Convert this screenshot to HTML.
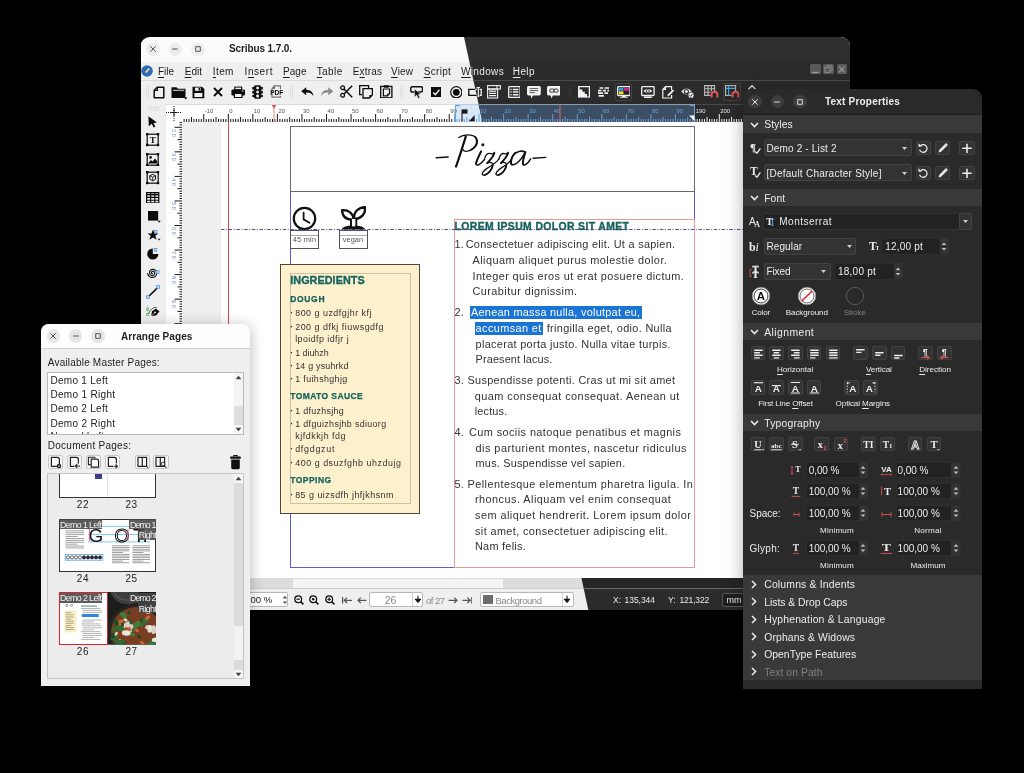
<!DOCTYPE html>
<html><head><meta charset="utf-8"><title>Scribus 1.7.0</title><style>
html,body{margin:0;padding:0;background:#000;}
body{width:1024px;height:773px;overflow:hidden;position:relative;font-family:"Liberation Sans",sans-serif;}
div,svg{position:absolute;}
.t{white-space:nowrap;}
u{text-decoration:underline;text-underline-offset:1.5px;text-decoration-thickness:0.9px;}
#mw{left:0;top:0;width:1024px;height:773px;clip-path:inset(37px 174px 163px 140.6px round 9px 9px 0 0);}
#L,#D,#C{left:0;top:0;width:1024px;height:773px;}
#mw,#tp,#ap{will-change:transform;}
#tp,#ap{left:0;top:0;width:1024px;height:773px;}
#D{clip-path:polygon(464px 37px,851px 37px,851px 612px,588.8px 612px);}
#wb{left:140.4px;top:37px;width:1px;height:575px;background:#5a5a5a;}
</style></head><body>
<div id="mw"><div id="L"><div style="left:141px;top:37px;width:709px;height:24.5px;background:#fbfbfb;"></div><div style="left:141px;top:61.5px;width:709px;height:18.5px;background:#efefef;"></div><div style="left:141px;top:80px;width:709px;height:24.5px;background:#efefef;"></div><div style="left:141px;top:79.6px;width:709px;height:1px;background:#dcdcdc;"></div><div style="left:141px;top:103.6px;width:709px;height:1px;background:#dcdcdc;"></div><div style="left:146.1px;top:42.5px;width:13.6px;height:13.6px;border-radius:50%;background:#ececec;"></div><svg style="left:147.9px;top:44.3px" width="10" height="10" viewBox="-5 -5 10 10"><path d="M-2.7 -2.7L2.7 2.7M2.7 -2.7L-2.7 2.7" fill="none" stroke="#555" stroke-width="1"/></svg><div style="left:168.5px;top:42.5px;width:13.6px;height:13.6px;border-radius:50%;background:#ececec;"></div><svg style="left:170.3px;top:44.3px" width="10" height="10" viewBox="-5 -5 10 10"><path d="M-2.8 0H2.8" fill="none" stroke="#555" stroke-width="1"/></svg><div style="left:191px;top:42.5px;width:13.6px;height:13.6px;border-radius:50%;background:#ececec;"></div><svg style="left:192.8px;top:44.3px" width="10" height="10" viewBox="-5 -5 10 10"><path d="M-2.3 -2.3H2.3V2.3H-2.3Z" fill="none" stroke="#555" stroke-width="1"/></svg><div class="t" style="left:229.00px;top:42.40px;line-height:14px;font-size:10px;color:#1c1c1c;font-weight:bold;letter-spacing:-0.106px;">Scribus 1.7.0.</div><div class="t" style="left:158.00px;top:64.50px;line-height:14px;font-size:10px;color:#1c1c1c;letter-spacing:-0.029px;"><u>F</u>ile</div><div class="t" style="left:184.70px;top:64.50px;line-height:14px;font-size:10px;color:#1c1c1c;letter-spacing:0.067px;"><u>E</u>dit</div><div class="t" style="left:212.80px;top:64.50px;line-height:14px;font-size:10px;color:#1c1c1c;letter-spacing:0.388px;"><u>I</u>tem</div><div class="t" style="left:244.50px;top:64.50px;line-height:14px;font-size:10px;color:#1c1c1c;letter-spacing:0.582px;">I<u>n</u>sert</div><div class="t" style="left:283.00px;top:64.50px;line-height:14px;font-size:10px;color:#1c1c1c;letter-spacing:0.036px;"><u>P</u>age</div><div class="t" style="left:316.70px;top:64.50px;line-height:14px;font-size:10px;color:#1c1c1c;letter-spacing:0.419px;"><u>T</u>able</div><div class="t" style="left:352.70px;top:64.50px;line-height:14px;font-size:10px;color:#1c1c1c;letter-spacing:0.193px;">E<u>x</u>tras</div><div class="t" style="left:391.00px;top:64.50px;line-height:14px;font-size:10px;color:#1c1c1c;letter-spacing:0.126px;"><u>V</u>iew</div><div class="t" style="left:423.70px;top:64.50px;line-height:14px;font-size:10px;color:#1c1c1c;letter-spacing:0.323px;"><u>S</u>cript</div><div class="t" style="left:461.00px;top:64.50px;line-height:14px;font-size:10px;color:#1c1c1c;letter-spacing:0.348px;"><u>W</u>indows</div><div class="t" style="left:512.80px;top:64.50px;line-height:14px;font-size:10px;color:#1c1c1c;letter-spacing:0.358px;"><u>H</u>elp</div><svg style="left:140.5px;top:64.6px;" width="12" height="12" viewBox="0 0 12 12"><circle cx="6" cy="6" r="5.8" fill="#2a6db5"/><path d="M3.4 8.8L4 7L7.6 3L8.8 4.2L5.2 8.2Z" fill="#f0d9a0"/><path d="M3.4 8.8L4 7L5.2 8.2Z" fill="#222"/></svg><div style="left:810px;top:63.5px;width:10.6px;height:10.6px;background:#5a5a5a;border-radius:1.5px;"></div><div style="left:823px;top:63.5px;width:10.6px;height:10.6px;background:#5a5a5a;border-radius:1.5px;"></div><div style="left:836.5px;top:63.5px;width:10.6px;height:10.6px;background:#5a5a5a;border-radius:1.5px;"></div><svg style="left:810px;top:63.5px;" width="38" height="11" viewBox="0 0 38 11"><path d="M2 8.6H8.6" stroke="#999" stroke-width="1.4"/><rect x="15" y="3.4" width="5" height="5" fill="none" stroke="#888" stroke-width="1"/><path d="M17 3V1.8H22V6.8H20.4" fill="none" stroke="#888" stroke-width="1"/><path d="M29 2.4L34.6 8.4M34.6 2.4L29 8.4" stroke="#999" stroke-width="1.2"/></svg><svg style="left:145.8px;top:85.6px;" width="4" height="13" viewBox="0 0 4 13"><rect x="0" y="0" width="1" height="1" fill="#cfcfcf"/><rect x="0" y="2.2" width="1" height="1" fill="#cfcfcf"/><rect x="0" y="4.4" width="1" height="1" fill="#cfcfcf"/><rect x="0" y="6.6" width="1" height="1" fill="#cfcfcf"/><rect x="0" y="8.8" width="1" height="1" fill="#cfcfcf"/><rect x="0" y="11" width="1" height="1" fill="#cfcfcf"/><rect x="2.2" y="0" width="1" height="1" fill="#cfcfcf"/><rect x="2.2" y="2.2" width="1" height="1" fill="#cfcfcf"/><rect x="2.2" y="4.4" width="1" height="1" fill="#cfcfcf"/><rect x="2.2" y="6.6" width="1" height="1" fill="#cfcfcf"/><rect x="2.2" y="8.8" width="1" height="1" fill="#cfcfcf"/><rect x="2.2" y="11" width="1" height="1" fill="#cfcfcf"/></svg><svg style="left:290px;top:85.6px;" width="4" height="13" viewBox="0 0 4 13"><rect x="0" y="0" width="1" height="1" fill="#cfcfcf"/><rect x="0" y="2.2" width="1" height="1" fill="#cfcfcf"/><rect x="0" y="4.4" width="1" height="1" fill="#cfcfcf"/><rect x="0" y="6.6" width="1" height="1" fill="#cfcfcf"/><rect x="0" y="8.8" width="1" height="1" fill="#cfcfcf"/><rect x="0" y="11" width="1" height="1" fill="#cfcfcf"/><rect x="2.2" y="0" width="1" height="1" fill="#cfcfcf"/><rect x="2.2" y="2.2" width="1" height="1" fill="#cfcfcf"/><rect x="2.2" y="4.4" width="1" height="1" fill="#cfcfcf"/><rect x="2.2" y="6.6" width="1" height="1" fill="#cfcfcf"/><rect x="2.2" y="8.8" width="1" height="1" fill="#cfcfcf"/><rect x="2.2" y="11" width="1" height="1" fill="#cfcfcf"/></svg><svg style="left:400px;top:85.6px;" width="4" height="13" viewBox="0 0 4 13"><rect x="0" y="0" width="1" height="1" fill="#cfcfcf"/><rect x="0" y="2.2" width="1" height="1" fill="#cfcfcf"/><rect x="0" y="4.4" width="1" height="1" fill="#cfcfcf"/><rect x="0" y="6.6" width="1" height="1" fill="#cfcfcf"/><rect x="0" y="8.8" width="1" height="1" fill="#cfcfcf"/><rect x="0" y="11" width="1" height="1" fill="#cfcfcf"/><rect x="2.2" y="0" width="1" height="1" fill="#cfcfcf"/><rect x="2.2" y="2.2" width="1" height="1" fill="#cfcfcf"/><rect x="2.2" y="4.4" width="1" height="1" fill="#cfcfcf"/><rect x="2.2" y="6.6" width="1" height="1" fill="#cfcfcf"/><rect x="2.2" y="8.8" width="1" height="1" fill="#cfcfcf"/><rect x="2.2" y="11" width="1" height="1" fill="#cfcfcf"/></svg><svg style="left:152.5px;top:85.8px;" width="12" height="13" viewBox="0 0 12 13"><path d="M4.2 1.2H10.8V11.8H1.2V4.2Z" fill="none" stroke="#0c0c0c" stroke-width="1.5" stroke-linejoin="round"/><path d="M4.4 1.2V4.4H1.2" fill="none" stroke="#0c0c0c" stroke-width="1.1"/></svg><svg style="left:170.8px;top:85.6px;" width="17" height="14" viewBox="0 0 17 14"><path d="M0.5 1.2H5.5L7 2.8H14.5V12H0.5Z" fill="#0c0c0c"/><path d="M2 4.3H13.2" stroke="#efefef" stroke-width="0.9"/><path d="M13 11.6H16.5L14.75 13.6Z" fill="#0c0c0c"/></svg><svg style="left:191.8px;top:85.5px;" width="13" height="13" viewBox="0 0 13 13"><path d="M0.5 0.8H10L12.3 3V12.2H0.5Z" fill="#0c0c0c"/><rect x="3" y="1.6" width="5.6" height="3.2" fill="#efefef"/><rect x="6.6" y="2" width="1.4" height="2.4" fill="#0c0c0c"/><rect x="2.4" y="7" width="8" height="4" fill="#efefef"/></svg><svg style="left:213.3px;top:87px;" width="10" height="10" viewBox="0 0 10 10"><path d="M1 1L9 9M9 1L1 9" stroke="#0c0c0c" stroke-width="1.9" fill="none"/></svg><svg style="left:230.5px;top:85.8px;" width="14.4" height="12.4" viewBox="0 0 14.4 12.4"><rect x="3.2" y="0.6" width="8" height="3.4" fill="#0c0c0c"/><rect x="4.4" y="1.6" width="5.6" height="1.6" fill="#efefef"/><rect x="0.4" y="3.4" width="13.6" height="6.2" rx="1.4" fill="#0c0c0c"/><rect x="10.8" y="4.6" width="1.6" height="1" fill="#efefef"/><rect x="2.8" y="7" width="8.8" height="5" fill="#0c0c0c"/><rect x="4" y="8" width="6.4" height="3" fill="#efefef"/></svg><svg style="left:251.6px;top:84.8px;" width="11.2" height="14" viewBox="0 0 11.2 14"><rect x="1.8" y="0.3" width="7.6" height="13.4" rx="2" fill="#0c0c0c"/><path d="M0.3 2H2V4.4H0.3ZM0.3 6H2V8.4H0.3ZM0.3 10H2V12H0.3ZM9.2 2H10.9V4.4H9.2ZM9.2 6H10.9V8.4H9.2ZM9.2 10H10.9V12H9.2Z" fill="#0c0c0c"/><circle cx="5.6" cy="3" r="1.5" fill="#efefef"/><circle cx="5.6" cy="7" r="1.5" fill="#efefef"/><circle cx="5.6" cy="11" r="1.5" fill="#efefef"/></svg><svg style="left:269.6px;top:85.2px;" width="13.6" height="13" viewBox="0 0 13.6 13"><path d="M4.5 0.8H10.5V4.2M10.5 11V12.2H2V3.4L4.5 0.8V3.4H2" fill="none" stroke="#777" stroke-width="1.2"/><text x="0.2" y="10.3" font-family="Liberation Sans" font-weight="bold" font-size="6.6" fill="#0c0c0c" textLength="13.2" lengthAdjust="spacingAndGlyphs">PDF</text></svg><svg style="left:301.4px;top:87.3px;" width="12.6" height="9.2" viewBox="0 0 12.6 9.2"><path d="M5.2 0.2L0.2 4.2L5.2 8.2V5.6C8.5 5.4 10.8 6.6 12.4 9C12.2 5.2 9.6 2.8 5.2 2.7Z" fill="#0c0c0c"/></svg><svg style="left:320.5px;top:87.3px;" width="12.6" height="9.2" viewBox="0 0 12.6 9.2"><path d="M7.3 0.2L12.3 4.2L7.3 8.2V5.6C4 5.4 1.7 6.6 0.1 9C0.3 5.2 2.9 2.8 7.3 2.7Z" fill="#8c8c8c"/></svg><svg style="left:340.3px;top:85px;" width="13" height="13" viewBox="0 0 13 13"><circle cx="2.6" cy="2.8" r="1.9" fill="none" stroke="#0c0c0c" stroke-width="1.3"/><circle cx="2.6" cy="10.2" r="1.9" fill="none" stroke="#0c0c0c" stroke-width="1.3"/><path d="M4 4L12.2 12.2M4 9L12.2 0.8" stroke="#0c0c0c" stroke-width="1.5" fill="none"/></svg><svg style="left:359px;top:84.8px;" width="14.2" height="13.8" viewBox="0 0 14.2 13.8"><path d="M3 9.6H0.7V0.7H9.6V3" fill="none" stroke="#0c0c0c" stroke-width="1.3"/><path d="M4 3.6H13.4V10L10.4 13H4Z" fill="#efefef" stroke="#0c0c0c" stroke-width="1.3"/><path d="M13.4 10H10.4V13Z" fill="#0c0c0c"/></svg><svg style="left:380px;top:84.8px;" width="12.6" height="13.6" viewBox="0 0 12.6 13.6"><rect x="0.7" y="1.4" width="11.2" height="11.4" fill="none" stroke="#0c0c0c" stroke-width="1.3"/><rect x="3.6" y="0.2" width="5.4" height="2.6" rx="1" fill="#0c0c0c"/><path d="M3.4 4H9.6V8.6L7.4 10.8H3.4Z" fill="#efefef" stroke="#0c0c0c" stroke-width="1.2"/><path d="M9.6 8.6H7.4V10.8Z" fill="#0c0c0c"/></svg><svg style="left:410px;top:85.8px;" width="13.4" height="12.8" viewBox="0 0 13.4 12.8"><rect x="0.8" y="0.8" width="11.6" height="5.2" rx="1.2" fill="none" stroke="#0c0c0c" stroke-width="1.4"/><path d="M4.6 3V11L6.7 9.1L8.3 12.4L9.9 11.6L8.3 8.5H11Z" fill="#0c0c0c" stroke="#efefef" stroke-width="0.5"/></svg><svg style="left:430.8px;top:86.8px;" width="10.4" height="10.4" viewBox="0 0 10.4 10.4"><rect x="0" y="0" width="10.4" height="10.4" fill="#0c0c0c"/><path d="M2.2 5.4L4.4 7.6L8.4 2.8" stroke="#efefef" stroke-width="1.4" fill="none"/></svg><svg style="left:449.6px;top:85.9px;" width="12.6" height="12.6" viewBox="0 0 12.6 12.6"><circle cx="6.3" cy="6.3" r="5.6" fill="none" stroke="#0c0c0c" stroke-width="1.2"/><circle cx="6.3" cy="6.3" r="3.4" fill="#0c0c0c"/></svg><svg style="left:468.2px;top:86.6px;" width="14" height="10.8" viewBox="0 0 14 10.8"><path d="M9 2.4H0.8V8.4H9M11.6 2.4H13.2V8.4H11.6" fill="none" stroke="#0c0c0c" stroke-width="1.3"/><path d="M8.6 0.4H12M8.6 10.4H12M10.3 0.4V10.4" stroke="#0c0c0c" stroke-width="1.2" fill="none"/></svg><svg style="left:487px;top:84.8px;" width="14" height="13.8" viewBox="0 0 14 13.8"><rect x="0.6" y="0.6" width="12.8" height="3.4" fill="none" stroke="#0c0c0c" stroke-width="1.1"/><path d="M10 0.6V4" stroke="#0c0c0c" stroke-width="1"/><rect x="0.6" y="4" width="10" height="9" fill="none" stroke="#0c0c0c" stroke-width="1.1"/><path d="M2 6.2H9.2M2 8.4H9.2M2 10.6H9.2" stroke="#0c0c0c" stroke-width="1.3"/></svg><svg style="left:507.6px;top:85.8px;" width="12.8" height="12.2" viewBox="0 0 12.8 12.2"><rect x="0.7" y="0.7" width="11.4" height="10.8" rx="0.8" fill="none" stroke="#0c0c0c" stroke-width="1.3"/><path d="M2.4 3.4H3.6M4.8 3.4H10.4M2.4 6.1H3.6M4.8 6.1H10.4M2.4 8.8H3.6M4.8 8.8H10.4" stroke="#0c0c0c" stroke-width="1.5"/></svg><svg style="left:526.9px;top:86px;" width="13.8" height="12.6" viewBox="0 0 13.8 12.6"><path d="M1.6 0H12.2Q13.8 0 13.8 1.6V7.8Q13.8 9.4 12.2 9.4H6L4.2 12.4L3.8 9.4H1.6Q0 9.4 0 7.8V1.6Q0 0 1.6 0Z" fill="#0c0c0c"/><path d="M2.6 2.6H11.2M2.6 4.6H11.2M2.6 6.6H8" stroke="#efefef" stroke-width="1" opacity="0.75"/></svg><svg style="left:546.7px;top:86px;" width="13.8" height="12.6" viewBox="0 0 13.8 12.6"><path d="M1.6 0H12.2Q13.8 0 13.8 1.6V7.8Q13.8 9.4 12.2 9.4H6L4.2 12.4L3.8 9.4H1.6Q0 9.4 0 7.8V1.6Q0 0 1.6 0Z" fill="#0c0c0c"/><rect x="2.6" y="3" width="4.6" height="3.2" rx="1.6" fill="none" stroke="#efefef" stroke-width="1"/><rect x="6.6" y="3" width="4.6" height="3.2" rx="1.6" fill="none" stroke="#efefef" stroke-width="1"/></svg><svg style="left:568.9px;top:85.6px;" width="3.6" height="12.4" viewBox="0 0 3.6 12.4"><rect x="0" y="0" width="1" height="1" fill="#c8c8c8"/><rect x="2.4" y="0" width="1" height="1" fill="#c8c8c8"/><rect x="0" y="2.2" width="1" height="1" fill="#c8c8c8"/><rect x="2.4" y="2.2" width="1" height="1" fill="#c8c8c8"/><rect x="0" y="4.4" width="1" height="1" fill="#c8c8c8"/><rect x="2.4" y="4.4" width="1" height="1" fill="#c8c8c8"/><rect x="0" y="6.6" width="1" height="1" fill="#c8c8c8"/><rect x="2.4" y="6.6" width="1" height="1" fill="#c8c8c8"/><rect x="0" y="8.8" width="1" height="1" fill="#c8c8c8"/><rect x="2.4" y="8.8" width="1" height="1" fill="#c8c8c8"/><rect x="0" y="11" width="1" height="1" fill="#c8c8c8"/><rect x="2.4" y="11" width="1" height="1" fill="#c8c8c8"/></svg><svg style="left:578px;top:86px;" width="12" height="11.6" viewBox="0 0 12 11.6"><rect x="0" y="0" width="12" height="11.6" fill="#0c0c0c"/><path d="M1.6 1.2H10.8V10.4H9V8H6.8V5.8H4.4V3.6H1.6Z" fill="#efefef"/></svg><svg style="left:597.8px;top:87px;" width="11" height="10" viewBox="0 0 11 10"><path d="M1.6 1H5.2M6.6 1H11M0 3.6H3.4M4.8 3.6H8M9.4 3.6H11M0 6.2H5M6.4 6.2H10M0.6 8.8H6" stroke="#0c0c0c" stroke-width="1.7" fill="none"/></svg><svg style="left:616.5px;top:85.6px;" width="13.8" height="12.6" viewBox="0 0 13.8 12.6"><rect x="0.7" y="0.7" width="12.4" height="8.8" rx="0.8" fill="#efefef" stroke="#0c0c0c" stroke-width="1.3"/><rect x="2" y="2" width="4.4" height="2.8" fill="#1f9fe0"/><rect x="7.2" y="2" width="4.6" height="2.8" fill="#e6189a"/><rect x="2" y="5.4" width="4.4" height="2.8" fill="#f2e21a"/><rect x="7.2" y="5.4" width="4.6" height="2.8" fill="#222"/><path d="M5 9.8H8.8V11H5ZM3 11.2H10.8V12.4H3Z" fill="#0c0c0c"/></svg><svg style="left:641px;top:85.8px;" width="13.8" height="12.6" viewBox="0 0 13.8 12.6"><rect x="0.7" y="0.7" width="12.4" height="8.8" rx="0.8" fill="none" stroke="#0c0c0c" stroke-width="1.3"/><path d="M2.4 5.1Q6.9 0.8 11.4 5.1Q6.9 9.4 2.4 5.1Z" fill="#0c0c0c"/><circle cx="6.9" cy="5.1" r="1.9" fill="#efefef"/><circle cx="6.9" cy="5.1" r="1" fill="#0c0c0c"/><path d="M3 10.6H10.8V12H3Z" fill="#0c0c0c"/></svg><svg style="left:661.8px;top:85.8px;" width="12.8" height="12.8" viewBox="0 0 12.8 12.8"><path d="M3.4 0.7H9.6V4.4M9.6 9V12H0.8V3.4L3.4 0.7V3.4H0.8" fill="none" stroke="#0c0c0c" stroke-width="1.2"/><path d="M5 10.6L5.6 8.4L10.8 3.2L12.4 4.8L7.2 10Z" fill="#0c0c0c" stroke="#efefef" stroke-width="0.5"/></svg><svg style="left:681px;top:86.8px;" width="13.4" height="11.6" viewBox="0 0 13.4 11.6"><path d="M0.2 4.6Q5.4 -1.4 10.8 4.6Q5.4 10.4 0.2 4.6Z" fill="#0c0c0c"/><circle cx="5.4" cy="4.6" r="2.6" fill="#efefef"/><circle cx="5.4" cy="4.6" r="1.5" fill="#0c0c0c"/><circle cx="10" cy="8.2" r="3.1" fill="#0c0c0c" stroke="#efefef" stroke-width="0.8"/><path d="M8.4 8.2L9.6 9.4L11.6 7" stroke="#efefef" stroke-width="1" fill="none"/></svg><svg style="left:704.4px;top:85.4px;" width="14.6" height="13.2" viewBox="0 0 14.6 13.2"><path d="M0.6 0.6H10.6V10.4H0.6ZM4 0.6V10.4M7.4 0.6V10.4M0.6 3.8H10.6M0.6 7.2H10.6" fill="none" stroke="#666" stroke-width="1.1"/><rect x="6.4" y="6.4" width="8" height="6.4" fill="#efefef"/><path d="M7.6 12.6V9.6A2.9 2.9 0 0 1 13.4 9.6V12.6" fill="none" stroke="#e8564e" stroke-width="1.9"/></svg><svg style="left:724.6px;top:85.4px;" width="14.6" height="13.2" viewBox="0 0 14.6 13.2"><rect x="0.6" y="0.6" width="10" height="9.8" fill="none" stroke="#666" stroke-width="1.1"/><path d="M3.6 0.6V10.4M0.6 3.4H10.6" stroke="#3daee9" stroke-width="1.1"/><rect x="6.4" y="6.4" width="8" height="6.4" fill="#efefef"/><path d="M7.6 12.6V9.6A2.9 2.9 0 0 1 13.4 9.6V12.6" fill="none" stroke="#e8564e" stroke-width="1.9"/></svg><div style="left:614.6px;top:83.2px;width:17.6px;height:17.6px;border:1px solid #bbb;box-sizing:border-box;border-radius:2px;"></div><div style="left:722.6px;top:83.2px;width:18.6px;height:17.6px;border:1px solid #bbb;box-sizing:border-box;border-radius:2px;"></div><svg style="left:747px;top:83.6px;" width="10" height="7" viewBox="0 0 10 7"><path d="M1.4 5.4L5 1.6L8.6 5.4" fill="none" stroke="#0c0c0c" stroke-width="1.3"/></svg><div style="left:141px;top:104px;width:24.5px;height:480px;background:#efefef;"></div><svg style="left:148.5px;top:106.6px;" width="11" height="4" viewBox="0 0 11 4"><rect x="0" y="0" width="1" height="1" fill="#c9c9c9"/><rect x="0" y="2.2" width="1" height="1" fill="#c9c9c9"/><rect x="2.2" y="0" width="1" height="1" fill="#c9c9c9"/><rect x="2.2" y="2.2" width="1" height="1" fill="#c9c9c9"/><rect x="4.4" y="0" width="1" height="1" fill="#c9c9c9"/><rect x="4.4" y="2.2" width="1" height="1" fill="#c9c9c9"/><rect x="6.6" y="0" width="1" height="1" fill="#c9c9c9"/><rect x="6.6" y="2.2" width="1" height="1" fill="#c9c9c9"/><rect x="8.8" y="0" width="1" height="1" fill="#c9c9c9"/><rect x="8.8" y="2.2" width="1" height="1" fill="#c9c9c9"/></svg><svg style="left:148.4px;top:115.6px;" width="10" height="12" viewBox="0 0 10 12"><path d="M0.4 0.2L9 6.6L5.6 7L7.4 10.8L5.6 11.6L3.8 7.8L0.8 10.2Z" fill="#0c0c0c"/></svg><svg style="left:146.4px;top:133.4px;" width="13.4" height="13.4" viewBox="0 0 13.4 13.4"><rect x="1.2" y="1.2" width="11" height="11" fill="none" stroke="#0c0c0c" stroke-width="1.2"/><rect x="0" y="0" width="2.4" height="2.4" fill="#0c0c0c"/><rect x="0" y="10.8" width="2.4" height="2.4" fill="#0c0c0c"/><rect x="10.8" y="0" width="2.4" height="2.4" fill="#0c0c0c"/><rect x="10.8" y="10.8" width="2.4" height="2.4" fill="#0c0c0c"/><text x="6.7" y="10" text-anchor="middle" font-family="Liberation Serif" font-weight="bold" font-size="9" fill="#0c0c0c">T</text></svg><svg style="left:146.4px;top:152.6px;" width="13.4" height="13.4" viewBox="0 0 13.4 13.4"><rect x="1.2" y="1.2" width="11" height="11" fill="none" stroke="#0c0c0c" stroke-width="1.2"/><rect x="0" y="0" width="2.4" height="2.4" fill="#0c0c0c"/><rect x="0" y="10.8" width="2.4" height="2.4" fill="#0c0c0c"/><rect x="10.8" y="0" width="2.4" height="2.4" fill="#0c0c0c"/><rect x="10.8" y="10.8" width="2.4" height="2.4" fill="#0c0c0c"/><circle cx="4.6" cy="4.4" r="1.3" fill="#0c0c0c"/><path d="M2 10.6L5 7L6.6 8.6L9 5.6L11.4 8.4V10.6Z" fill="#0c0c0c"/></svg><svg style="left:146.4px;top:171.4px;" width="13.4" height="13.4" viewBox="0 0 13.4 13.4"><rect x="1.2" y="1.2" width="11" height="11" fill="none" stroke="#0c0c0c" stroke-width="1.2"/><rect x="0" y="0" width="2.4" height="2.4" fill="#0c0c0c"/><rect x="0" y="10.8" width="2.4" height="2.4" fill="#0c0c0c"/><rect x="10.8" y="0" width="2.4" height="2.4" fill="#0c0c0c"/><rect x="10.8" y="10.8" width="2.4" height="2.4" fill="#0c0c0c"/><path d="M6.7 3.4L9.6 4.8V8.2L6.7 9.8L3.8 8.2V4.8Z" fill="none" stroke="#0c0c0c" stroke-width="1"/><path d="M3.8 4.8L6.7 6.2L9.6 4.8M6.7 6.2V9.8" fill="none" stroke="#0c0c0c" stroke-width="0.8"/></svg><svg style="left:146.4px;top:191.8px;" width="13.4" height="11.6" viewBox="0 0 13.4 11.6"><rect x="0.6" y="0.6" width="12.2" height="10.4" fill="none" stroke="#0c0c0c" stroke-width="1.2"/><path d="M0.6 2.6H12.8" stroke="#0c0c0c" stroke-width="1.6"/><path d="M0.6 5.4H12.8M0.6 8.2H12.8M4.7 0.6V11M8.8 0.6V11" stroke="#0c0c0c" stroke-width="1.1"/></svg><svg style="left:148.4px;top:211.4px;" width="13" height="12.4" viewBox="0 0 13 12.4"><rect x="0" y="0" width="10.2" height="9.6" fill="#0c0c0c"/><path d="M9.6 9.8H12.8L11.2 11.8Z" fill="#0c0c0c"/></svg><svg style="left:147.2px;top:229.4px;" width="14" height="12.4" viewBox="0 0 14 12.4"><path d="M6 0.6L7.5 4.4H11.6L8.3 6.8L9.6 10.8L6 8.4L2.4 10.8L3.7 6.8L0.4 4.4H4.5Z" fill="#0c0c0c"/><rect x="7.4" y="1.4" width="2.6" height="2.6" fill="#bfe0f7" stroke="#4a90d9" stroke-width="0.7"/><path d="M10.6 9.8H13.6L12.1 11.6Z" fill="#0c0c0c"/></svg><svg style="left:147.4px;top:248.2px;" width="12.4" height="12" viewBox="0 0 12.4 12"><path d="M5.8 6L11.4 6A5.6 5.6 0 1 1 5.8 0.4Z" fill="#0c0c0c"/><rect x="7.2" y="0.6" width="2.6" height="2.6" fill="#bfe0f7" stroke="#4a90d9" stroke-width="0.7"/></svg><svg style="left:147.4px;top:267px;" width="12.6" height="11.6" viewBox="0 0 12.6 11.6"><path d="M5.78 6.37L5.72 6.43L5.65 6.49L5.56 6.53L5.46 6.57L5.34 6.58L5.23 6.58L5.10 6.55L4.98 6.50L4.86 6.43L4.75 6.34L4.66 6.23L4.57 6.10L4.51 5.95L4.47 5.78L4.45 5.61L4.47 5.43L4.51 5.25L4.58 5.07L4.68 4.89L4.81 4.73L4.97 4.59L5.16 4.47L5.36 4.37L5.59 4.31L5.82 4.28L6.07 4.29L6.32 4.33L6.56 4.41L6.80 4.53L7.02 4.69L7.22 4.89L7.39 5.12L7.53 5.37L7.63 5.65L7.69 5.95L7.70 6.27L7.67 6.58L7.59 6.90L7.46 7.20L7.29 7.49L7.07 7.75L6.80 7.99L6.50 8.18L6.17 8.33L5.82 8.44L5.44 8.49L5.06 8.48L4.67 8.42L4.30 8.30L3.93 8.12L3.60 7.88L3.29 7.60L3.03 7.26L2.82 6.89L2.66 6.49L2.56 6.05L2.52 5.60L2.55 5.15L2.65 4.70L2.82 4.26L3.05 3.84L3.35 3.46L3.70 3.12L4.11 2.84L4.55 2.61L5.04 2.45L5.55 2.35L6.07 2.34L6.59 2.40L7.11 2.54L7.61 2.76L8.07 3.05L8.49 3.41L8.86 3.83L9.17 4.31L9.41 4.84L9.57 5.40L9.64 5.98L9.64 6.57L9.54 7.17L9.35 7.75L9.08 8.30L8.73 8.81L8.30 9.27L7.80 9.67L7.25 9.99L6.65 10.23L6.01 10.38L5.35 10.44L4.69 10.40L4.03 10.26L3.39 10.03L2.78 9.70L2.23 9.28L1.74 8.78L1.32 8.21L0.99 7.58L0.75 6.90L0.61 6.18" fill="none" stroke="#0c0c0c" stroke-width="1.15"/><rect x="9.2" y="3.6" width="2.8" height="2.8" fill="#bfe0f7" stroke="#4a90d9" stroke-width="0.7"/></svg><svg style="left:146px;top:284.8px;" width="14.4" height="14.4" viewBox="0 0 14.4 14.4"><path d="M2.4 11.8L11.8 2.4" stroke="#0c0c0c" stroke-width="1.5"/><rect x="0.5" y="10.8" width="2.8" height="2.8" fill="#bfe0f7" stroke="#4a90d9" stroke-width="0.7"/><rect x="10.8" y="0.6" width="2.8" height="2.8" fill="#bfe0f7" stroke="#4a90d9" stroke-width="0.7"/></svg><svg style="left:145.8px;top:304.4px;" width="14.6" height="13" viewBox="0 0 14.6 13"><path d="M1.8 1.4V10" stroke="#5cb85c" stroke-width="0.8" stroke-dasharray="1 1"/><rect x="0.6" y="4.2" width="2.2" height="2.2" fill="none" stroke="#5cb85c" stroke-width="0.7"/><rect x="0.6" y="9.4" width="2.2" height="2.2" fill="none" stroke="#5cb85c" stroke-width="0.7"/><path d="M2.6 9.6Q6 2.6 10.6 3.4" fill="none" stroke="#0c0c0c" stroke-width="0.7"/><path d="M5.2 11.4L6 7.2L10 4.4L13.4 7.6L10.4 11.2L6.4 12.2Z" fill="#0c0c0c"/><path d="M5.6 12L8.6 8.8" stroke="#efefef" stroke-width="0.7"/><circle cx="9" cy="8.4" r="0.9" fill="#efefef"/></svg><div style="left:165.5px;top:104.5px;width:700px;height:17px;background:#ffffff;"></div><div style="left:454.5px;top:104.5px;width:240.7px;height:17px;background:#d9e8f8;"></div><div style="left:454.5px;top:104.2px;width:240.7px;height:1px;background:#b9cde4;"></div><svg style="left:0;top:104.5px" width="760" height="17" viewBox="0 0 760 17"><rect x="183.61" y="14" width="1" height="3" fill="#1a1a1a"/><rect x="186.06" y="14" width="1" height="3" fill="#1a1a1a"/><rect x="188.52" y="14" width="1" height="3" fill="#1a1a1a"/><rect x="190.98" y="12" width="1" height="5" fill="#1a1a1a"/><rect x="193.43" y="14" width="1" height="3" fill="#1a1a1a"/><rect x="195.89" y="14" width="1" height="3" fill="#1a1a1a"/><rect x="198.34" y="14" width="1" height="3" fill="#1a1a1a"/><rect x="200.80" y="14" width="1" height="3" fill="#1a1a1a"/><rect x="203.25" y="9" width="1" height="8" fill="#1a1a1a"/><rect x="205.71" y="14" width="1" height="3" fill="#1a1a1a"/><rect x="208.16" y="14" width="1" height="3" fill="#1a1a1a"/><rect x="210.62" y="14" width="1" height="3" fill="#1a1a1a"/><rect x="213.07" y="14" width="1" height="3" fill="#1a1a1a"/><rect x="215.53" y="12" width="1" height="5" fill="#1a1a1a"/><rect x="217.98" y="14" width="1" height="3" fill="#1a1a1a"/><rect x="220.44" y="14" width="1" height="3" fill="#1a1a1a"/><rect x="222.89" y="14" width="1" height="3" fill="#1a1a1a"/><rect x="225.34" y="14" width="1" height="3" fill="#1a1a1a"/><rect x="227.80" y="9" width="1" height="8" fill="#1a1a1a"/><rect x="230.26" y="14" width="1" height="3" fill="#1a1a1a"/><rect x="232.71" y="14" width="1" height="3" fill="#1a1a1a"/><rect x="235.17" y="14" width="1" height="3" fill="#1a1a1a"/><rect x="237.62" y="14" width="1" height="3" fill="#1a1a1a"/><rect x="240.08" y="12" width="1" height="5" fill="#1a1a1a"/><rect x="242.53" y="14" width="1" height="3" fill="#1a1a1a"/><rect x="244.99" y="14" width="1" height="3" fill="#1a1a1a"/><rect x="247.44" y="14" width="1" height="3" fill="#1a1a1a"/><rect x="249.90" y="14" width="1" height="3" fill="#1a1a1a"/><rect x="252.35" y="9" width="1" height="8" fill="#1a1a1a"/><rect x="254.81" y="14" width="1" height="3" fill="#1a1a1a"/><rect x="257.26" y="14" width="1" height="3" fill="#1a1a1a"/><rect x="259.72" y="14" width="1" height="3" fill="#1a1a1a"/><rect x="262.17" y="14" width="1" height="3" fill="#1a1a1a"/><rect x="264.62" y="12" width="1" height="5" fill="#1a1a1a"/><rect x="267.08" y="14" width="1" height="3" fill="#1a1a1a"/><rect x="269.54" y="14" width="1" height="3" fill="#1a1a1a"/><rect x="271.99" y="14" width="1" height="3" fill="#1a1a1a"/><rect x="274.44" y="14" width="1" height="3" fill="#1a1a1a"/><rect x="276.90" y="9" width="1" height="8" fill="#1a1a1a"/><rect x="279.36" y="14" width="1" height="3" fill="#1a1a1a"/><rect x="281.81" y="14" width="1" height="3" fill="#1a1a1a"/><rect x="284.26" y="14" width="1" height="3" fill="#1a1a1a"/><rect x="286.72" y="14" width="1" height="3" fill="#1a1a1a"/><rect x="289.18" y="12" width="1" height="5" fill="#1a1a1a"/><rect x="291.63" y="14" width="1" height="3" fill="#1a1a1a"/><rect x="294.09" y="14" width="1" height="3" fill="#1a1a1a"/><rect x="296.54" y="14" width="1" height="3" fill="#1a1a1a"/><rect x="299.00" y="14" width="1" height="3" fill="#1a1a1a"/><rect x="301.45" y="9" width="1" height="8" fill="#1a1a1a"/><rect x="303.91" y="14" width="1" height="3" fill="#1a1a1a"/><rect x="306.36" y="14" width="1" height="3" fill="#1a1a1a"/><rect x="308.81" y="14" width="1" height="3" fill="#1a1a1a"/><rect x="311.27" y="14" width="1" height="3" fill="#1a1a1a"/><rect x="313.73" y="12" width="1" height="5" fill="#1a1a1a"/><rect x="316.18" y="14" width="1" height="3" fill="#1a1a1a"/><rect x="318.63" y="14" width="1" height="3" fill="#1a1a1a"/><rect x="321.09" y="14" width="1" height="3" fill="#1a1a1a"/><rect x="323.55" y="14" width="1" height="3" fill="#1a1a1a"/><rect x="326.00" y="9" width="1" height="8" fill="#1a1a1a"/><rect x="328.46" y="14" width="1" height="3" fill="#1a1a1a"/><rect x="330.91" y="14" width="1" height="3" fill="#1a1a1a"/><rect x="333.37" y="14" width="1" height="3" fill="#1a1a1a"/><rect x="335.82" y="14" width="1" height="3" fill="#1a1a1a"/><rect x="338.28" y="12" width="1" height="5" fill="#1a1a1a"/><rect x="340.73" y="14" width="1" height="3" fill="#1a1a1a"/><rect x="343.19" y="14" width="1" height="3" fill="#1a1a1a"/><rect x="345.64" y="14" width="1" height="3" fill="#1a1a1a"/><rect x="348.10" y="14" width="1" height="3" fill="#1a1a1a"/><rect x="350.55" y="9" width="1" height="8" fill="#1a1a1a"/><rect x="353.00" y="14" width="1" height="3" fill="#1a1a1a"/><rect x="355.46" y="14" width="1" height="3" fill="#1a1a1a"/><rect x="357.92" y="14" width="1" height="3" fill="#1a1a1a"/><rect x="360.37" y="14" width="1" height="3" fill="#1a1a1a"/><rect x="362.83" y="12" width="1" height="5" fill="#1a1a1a"/><rect x="365.28" y="14" width="1" height="3" fill="#1a1a1a"/><rect x="367.74" y="14" width="1" height="3" fill="#1a1a1a"/><rect x="370.19" y="14" width="1" height="3" fill="#1a1a1a"/><rect x="372.64" y="14" width="1" height="3" fill="#1a1a1a"/><rect x="375.10" y="9" width="1" height="8" fill="#1a1a1a"/><rect x="377.56" y="14" width="1" height="3" fill="#1a1a1a"/><rect x="380.01" y="14" width="1" height="3" fill="#1a1a1a"/><rect x="382.47" y="14" width="1" height="3" fill="#1a1a1a"/><rect x="384.92" y="14" width="1" height="3" fill="#1a1a1a"/><rect x="387.38" y="12" width="1" height="5" fill="#1a1a1a"/><rect x="389.83" y="14" width="1" height="3" fill="#1a1a1a"/><rect x="392.29" y="14" width="1" height="3" fill="#1a1a1a"/><rect x="394.74" y="14" width="1" height="3" fill="#1a1a1a"/><rect x="397.20" y="14" width="1" height="3" fill="#1a1a1a"/><rect x="399.65" y="9" width="1" height="8" fill="#1a1a1a"/><rect x="402.11" y="14" width="1" height="3" fill="#1a1a1a"/><rect x="404.56" y="14" width="1" height="3" fill="#1a1a1a"/><rect x="407.01" y="14" width="1" height="3" fill="#1a1a1a"/><rect x="409.47" y="14" width="1" height="3" fill="#1a1a1a"/><rect x="411.93" y="12" width="1" height="5" fill="#1a1a1a"/><rect x="414.38" y="14" width="1" height="3" fill="#1a1a1a"/><rect x="416.84" y="14" width="1" height="3" fill="#1a1a1a"/><rect x="419.29" y="14" width="1" height="3" fill="#1a1a1a"/><rect x="421.75" y="14" width="1" height="3" fill="#1a1a1a"/><rect x="424.20" y="9" width="1" height="8" fill="#1a1a1a"/><rect x="426.66" y="14" width="1" height="3" fill="#1a1a1a"/><rect x="429.11" y="14" width="1" height="3" fill="#1a1a1a"/><rect x="431.57" y="14" width="1" height="3" fill="#1a1a1a"/><rect x="434.02" y="14" width="1" height="3" fill="#1a1a1a"/><rect x="436.48" y="12" width="1" height="5" fill="#1a1a1a"/><rect x="438.93" y="14" width="1" height="3" fill="#1a1a1a"/><rect x="441.38" y="14" width="1" height="3" fill="#1a1a1a"/><rect x="443.84" y="14" width="1" height="3" fill="#1a1a1a"/><rect x="446.30" y="14" width="1" height="3" fill="#1a1a1a"/><rect x="448.75" y="9" width="1" height="8" fill="#1a1a1a"/><rect x="451.21" y="14" width="1" height="3" fill="#1a1a1a"/><rect x="454.00" y="9" width="1" height="8" fill="#6aa3da"/><rect x="456.45" y="14" width="1" height="3" fill="#6aa3da"/><rect x="458.91" y="14" width="1" height="3" fill="#6aa3da"/><rect x="461.37" y="14" width="1" height="3" fill="#6aa3da"/><rect x="463.82" y="14" width="1" height="3" fill="#6aa3da"/><rect x="466.27" y="12" width="1" height="5" fill="#6aa3da"/><rect x="468.73" y="14" width="1" height="3" fill="#6aa3da"/><rect x="471.19" y="14" width="1" height="3" fill="#6aa3da"/><rect x="473.64" y="14" width="1" height="3" fill="#6aa3da"/><rect x="476.10" y="14" width="1" height="3" fill="#6aa3da"/><rect x="478.55" y="9" width="1" height="8" fill="#6aa3da"/><rect x="481.00" y="14" width="1" height="3" fill="#6aa3da"/><rect x="483.46" y="14" width="1" height="3" fill="#6aa3da"/><rect x="485.92" y="14" width="1" height="3" fill="#6aa3da"/><rect x="488.37" y="14" width="1" height="3" fill="#6aa3da"/><rect x="490.82" y="12" width="1" height="5" fill="#6aa3da"/><rect x="493.28" y="14" width="1" height="3" fill="#6aa3da"/><rect x="495.74" y="14" width="1" height="3" fill="#6aa3da"/><rect x="498.19" y="14" width="1" height="3" fill="#6aa3da"/><rect x="500.64" y="14" width="1" height="3" fill="#6aa3da"/><rect x="503.10" y="9" width="1" height="8" fill="#6aa3da"/><rect x="505.56" y="14" width="1" height="3" fill="#6aa3da"/><rect x="508.01" y="14" width="1" height="3" fill="#6aa3da"/><rect x="510.47" y="14" width="1" height="3" fill="#6aa3da"/><rect x="512.92" y="14" width="1" height="3" fill="#6aa3da"/><rect x="515.38" y="12" width="1" height="5" fill="#6aa3da"/><rect x="517.83" y="14" width="1" height="3" fill="#6aa3da"/><rect x="520.28" y="14" width="1" height="3" fill="#6aa3da"/><rect x="522.74" y="14" width="1" height="3" fill="#6aa3da"/><rect x="525.20" y="14" width="1" height="3" fill="#6aa3da"/><rect x="527.65" y="9" width="1" height="8" fill="#6aa3da"/><rect x="530.11" y="14" width="1" height="3" fill="#6aa3da"/><rect x="532.56" y="14" width="1" height="3" fill="#6aa3da"/><rect x="535.01" y="14" width="1" height="3" fill="#6aa3da"/><rect x="537.47" y="14" width="1" height="3" fill="#6aa3da"/><rect x="539.92" y="12" width="1" height="5" fill="#6aa3da"/><rect x="542.38" y="14" width="1" height="3" fill="#6aa3da"/><rect x="544.84" y="14" width="1" height="3" fill="#6aa3da"/><rect x="547.29" y="14" width="1" height="3" fill="#6aa3da"/><rect x="549.75" y="14" width="1" height="3" fill="#6aa3da"/><rect x="552.20" y="9" width="1" height="8" fill="#6aa3da"/><rect x="554.65" y="14" width="1" height="3" fill="#6aa3da"/><rect x="557.11" y="14" width="1" height="3" fill="#6aa3da"/><rect x="559.57" y="14" width="1" height="3" fill="#6aa3da"/><rect x="562.02" y="14" width="1" height="3" fill="#6aa3da"/><rect x="564.48" y="12" width="1" height="5" fill="#6aa3da"/><rect x="566.93" y="14" width="1" height="3" fill="#6aa3da"/><rect x="569.38" y="14" width="1" height="3" fill="#6aa3da"/><rect x="571.84" y="14" width="1" height="3" fill="#6aa3da"/><rect x="574.29" y="14" width="1" height="3" fill="#6aa3da"/><rect x="576.75" y="9" width="1" height="8" fill="#6aa3da"/><rect x="579.21" y="14" width="1" height="3" fill="#6aa3da"/><rect x="581.66" y="14" width="1" height="3" fill="#6aa3da"/><rect x="584.12" y="14" width="1" height="3" fill="#6aa3da"/><rect x="586.57" y="14" width="1" height="3" fill="#6aa3da"/><rect x="589.02" y="12" width="1" height="5" fill="#6aa3da"/><rect x="591.48" y="14" width="1" height="3" fill="#6aa3da"/><rect x="593.93" y="14" width="1" height="3" fill="#6aa3da"/><rect x="596.39" y="14" width="1" height="3" fill="#6aa3da"/><rect x="598.85" y="14" width="1" height="3" fill="#6aa3da"/><rect x="601.30" y="9" width="1" height="8" fill="#6aa3da"/><rect x="603.75" y="14" width="1" height="3" fill="#6aa3da"/><rect x="606.21" y="14" width="1" height="3" fill="#6aa3da"/><rect x="608.66" y="14" width="1" height="3" fill="#6aa3da"/><rect x="611.12" y="14" width="1" height="3" fill="#6aa3da"/><rect x="613.58" y="12" width="1" height="5" fill="#6aa3da"/><rect x="616.03" y="14" width="1" height="3" fill="#6aa3da"/><rect x="618.49" y="14" width="1" height="3" fill="#6aa3da"/><rect x="620.94" y="14" width="1" height="3" fill="#6aa3da"/><rect x="623.39" y="14" width="1" height="3" fill="#6aa3da"/><rect x="625.85" y="9" width="1" height="8" fill="#6aa3da"/><rect x="628.31" y="14" width="1" height="3" fill="#6aa3da"/><rect x="630.76" y="14" width="1" height="3" fill="#6aa3da"/><rect x="633.22" y="14" width="1" height="3" fill="#6aa3da"/><rect x="635.67" y="14" width="1" height="3" fill="#6aa3da"/><rect x="638.12" y="12" width="1" height="5" fill="#6aa3da"/><rect x="640.58" y="14" width="1" height="3" fill="#6aa3da"/><rect x="643.03" y="14" width="1" height="3" fill="#6aa3da"/><rect x="645.49" y="14" width="1" height="3" fill="#6aa3da"/><rect x="647.94" y="14" width="1" height="3" fill="#6aa3da"/><rect x="650.40" y="9" width="1" height="8" fill="#6aa3da"/><rect x="652.86" y="14" width="1" height="3" fill="#6aa3da"/><rect x="655.31" y="14" width="1" height="3" fill="#6aa3da"/><rect x="657.76" y="14" width="1" height="3" fill="#6aa3da"/><rect x="660.22" y="14" width="1" height="3" fill="#6aa3da"/><rect x="662.67" y="12" width="1" height="5" fill="#6aa3da"/><rect x="665.13" y="14" width="1" height="3" fill="#6aa3da"/><rect x="667.59" y="14" width="1" height="3" fill="#6aa3da"/><rect x="670.04" y="14" width="1" height="3" fill="#6aa3da"/><rect x="672.50" y="14" width="1" height="3" fill="#6aa3da"/><rect x="674.95" y="9" width="1" height="8" fill="#6aa3da"/><rect x="677.40" y="14" width="1" height="3" fill="#6aa3da"/><rect x="679.86" y="14" width="1" height="3" fill="#6aa3da"/><rect x="682.32" y="14" width="1" height="3" fill="#6aa3da"/><rect x="684.77" y="14" width="1" height="3" fill="#6aa3da"/><rect x="687.23" y="12" width="1" height="5" fill="#6aa3da"/><rect x="689.68" y="14" width="1" height="3" fill="#6aa3da"/><rect x="692.13" y="14" width="1" height="3" fill="#6aa3da"/><rect x="694.59" y="14" width="1" height="3" fill="#6aa3da"/><rect x="696.71" y="14" width="1" height="3" fill="#1a1a1a"/><rect x="699.16" y="14" width="1" height="3" fill="#1a1a1a"/><rect x="701.62" y="14" width="1" height="3" fill="#1a1a1a"/><rect x="704.07" y="14" width="1" height="3" fill="#1a1a1a"/><rect x="706.53" y="12" width="1" height="5" fill="#1a1a1a"/><rect x="708.98" y="14" width="1" height="3" fill="#1a1a1a"/><rect x="711.43" y="14" width="1" height="3" fill="#1a1a1a"/><rect x="713.89" y="14" width="1" height="3" fill="#1a1a1a"/><rect x="716.35" y="14" width="1" height="3" fill="#1a1a1a"/><rect x="718.80" y="9" width="1" height="8" fill="#1a1a1a"/><rect x="721.26" y="14" width="1" height="3" fill="#1a1a1a"/><rect x="723.71" y="14" width="1" height="3" fill="#1a1a1a"/><rect x="726.16" y="14" width="1" height="3" fill="#1a1a1a"/><rect x="728.62" y="14" width="1" height="3" fill="#1a1a1a"/><rect x="731.08" y="12" width="1" height="5" fill="#1a1a1a"/><rect x="733.53" y="14" width="1" height="3" fill="#1a1a1a"/><rect x="735.99" y="14" width="1" height="3" fill="#1a1a1a"/><rect x="738.44" y="14" width="1" height="3" fill="#1a1a1a"/><rect x="740.89" y="14" width="1" height="3" fill="#1a1a1a"/></svg><div class="t" style="left:204.75px;top:106.90px;line-height:8px;font-size:5.9px;color:#555;">-10</div><div class="t" style="left:229.30px;top:106.90px;line-height:8px;font-size:5.9px;color:#555;">0</div><div class="t" style="left:253.85px;top:106.90px;line-height:8px;font-size:5.9px;color:#555;">10</div><div class="t" style="left:278.40px;top:106.90px;line-height:8px;font-size:5.9px;color:#555;">20</div><div class="t" style="left:302.95px;top:106.90px;line-height:8px;font-size:5.9px;color:#555;">30</div><div class="t" style="left:327.50px;top:106.90px;line-height:8px;font-size:5.9px;color:#555;">40</div><div class="t" style="left:352.05px;top:106.90px;line-height:8px;font-size:5.9px;color:#555;">50</div><div class="t" style="left:376.60px;top:106.90px;line-height:8px;font-size:5.9px;color:#555;">60</div><div class="t" style="left:401.15px;top:106.90px;line-height:8px;font-size:5.9px;color:#555;">70</div><div class="t" style="left:425.70px;top:106.90px;line-height:8px;font-size:5.9px;color:#555;">80</div><div class="t" style="left:450.25px;top:106.90px;line-height:8px;font-size:5.9px;color:#555;">90</div><div class="t" style="left:480.05px;top:106.90px;line-height:8px;font-size:5.9px;color:#6aa3da;">10</div><div class="t" style="left:504.60px;top:106.90px;line-height:8px;font-size:5.9px;color:#6aa3da;">20</div><div class="t" style="left:529.15px;top:106.90px;line-height:8px;font-size:5.9px;color:#6aa3da;">30</div><div class="t" style="left:553.70px;top:106.90px;line-height:8px;font-size:5.9px;color:#6aa3da;">40</div><div class="t" style="left:578.25px;top:106.90px;line-height:8px;font-size:5.9px;color:#6aa3da;">50</div><div class="t" style="left:602.80px;top:106.90px;line-height:8px;font-size:5.9px;color:#6aa3da;">60</div><div class="t" style="left:627.35px;top:106.90px;line-height:8px;font-size:5.9px;color:#6aa3da;">70</div><div class="t" style="left:651.90px;top:106.90px;line-height:8px;font-size:5.9px;color:#6aa3da;">80</div><div class="t" style="left:676.45px;top:106.90px;line-height:8px;font-size:5.9px;color:#6aa3da;">90</div><div class="t" style="left:695.75px;top:106.90px;line-height:8px;font-size:5.9px;color:#555;">190</div><div class="t" style="left:720.30px;top:106.90px;line-height:8px;font-size:5.9px;color:#555;">200</div><svg style="left:454.5px;top:104.5px" width="22" height="17"><path d="M0 0.5H5" stroke="#6aa3da" stroke-width="1.4"/><path d="M0.5 0V17" stroke="#6aa3da" stroke-width="1"/><rect x="6.5" y="4.4" width="6" height="4.2" fill="#1a1a1a"/><path d="M6.5 8H7.6V16.5H6.5Z" fill="#1a1a1a"/><path d="M14 16.2L19.6 10V16.2Z" fill="#1a1a1a"/></svg><svg style="left:687.2px;top:104.5px" width="9" height="17"><path d="M3 0H8" stroke="#6aa3da" stroke-width="2"/><path d="M7.5 0V17" stroke="#6aa3da" stroke-width="1"/><path d="M2 10.5H7.5V16Z" fill="#fff"/></svg><svg style="left:270.6px;top:104.5px" width="6" height="17"><path d="M0.8 0H5.2L3 4Z" fill="#e05050"/><path d="M3 3V17" stroke="#e88" stroke-width="1"/></svg><svg style="left:557px;top:104.5px" width="6" height="17"><path d="M3 0V17" stroke="#e06060" stroke-width="1"/></svg><div style="left:165.5px;top:121.5px;width:16.5px;height:460px;background:#ffffff;"></div><svg style="left:165.5px;top:121.5px" width="16.5" height="460"><rect x="13.5" y="-0.11" width="3" height="1" fill="#1a1a1a"/><rect x="13.5" y="2.34" width="3" height="1" fill="#1a1a1a"/><rect x="8.5" y="4.80" width="8" height="1" fill="#1a1a1a"/><rect x="13.5" y="7.25" width="3" height="1" fill="#1a1a1a"/><rect x="13.5" y="9.71" width="3" height="1" fill="#1a1a1a"/><rect x="13.5" y="12.17" width="3" height="1" fill="#1a1a1a"/><rect x="13.5" y="14.62" width="3" height="1" fill="#1a1a1a"/><rect x="11.5" y="17.07" width="5" height="1" fill="#1a1a1a"/><rect x="13.5" y="19.53" width="3" height="1" fill="#1a1a1a"/><rect x="13.5" y="21.99" width="3" height="1" fill="#1a1a1a"/><rect x="13.5" y="24.44" width="3" height="1" fill="#1a1a1a"/><rect x="13.5" y="26.90" width="3" height="1" fill="#1a1a1a"/><rect x="8.5" y="29.35" width="8" height="1" fill="#1a1a1a"/><rect x="13.5" y="31.81" width="3" height="1" fill="#1a1a1a"/><rect x="13.5" y="34.26" width="3" height="1" fill="#1a1a1a"/><rect x="13.5" y="36.72" width="3" height="1" fill="#1a1a1a"/><rect x="13.5" y="39.17" width="3" height="1" fill="#1a1a1a"/><rect x="11.5" y="41.62" width="5" height="1" fill="#1a1a1a"/><rect x="13.5" y="44.08" width="3" height="1" fill="#1a1a1a"/><rect x="13.5" y="46.54" width="3" height="1" fill="#1a1a1a"/><rect x="13.5" y="48.99" width="3" height="1" fill="#1a1a1a"/><rect x="13.5" y="51.44" width="3" height="1" fill="#1a1a1a"/><rect x="8.5" y="53.90" width="8" height="1" fill="#1a1a1a"/><rect x="13.5" y="56.36" width="3" height="1" fill="#1a1a1a"/><rect x="13.5" y="58.81" width="3" height="1" fill="#1a1a1a"/><rect x="13.5" y="61.26" width="3" height="1" fill="#1a1a1a"/><rect x="13.5" y="63.72" width="3" height="1" fill="#1a1a1a"/><rect x="11.5" y="66.18" width="5" height="1" fill="#1a1a1a"/><rect x="13.5" y="68.63" width="3" height="1" fill="#1a1a1a"/><rect x="13.5" y="71.09" width="3" height="1" fill="#1a1a1a"/><rect x="13.5" y="73.54" width="3" height="1" fill="#1a1a1a"/><rect x="13.5" y="76.00" width="3" height="1" fill="#1a1a1a"/><rect x="8.5" y="78.45" width="8" height="1" fill="#1a1a1a"/><rect x="13.5" y="80.91" width="3" height="1" fill="#1a1a1a"/><rect x="13.5" y="83.36" width="3" height="1" fill="#1a1a1a"/><rect x="13.5" y="85.81" width="3" height="1" fill="#1a1a1a"/><rect x="13.5" y="88.27" width="3" height="1" fill="#1a1a1a"/><rect x="11.5" y="90.73" width="5" height="1" fill="#1a1a1a"/><rect x="13.5" y="93.18" width="3" height="1" fill="#1a1a1a"/><rect x="13.5" y="95.63" width="3" height="1" fill="#1a1a1a"/><rect x="13.5" y="98.09" width="3" height="1" fill="#1a1a1a"/><rect x="13.5" y="100.55" width="3" height="1" fill="#1a1a1a"/><rect x="8.5" y="103.00" width="8" height="1" fill="#1a1a1a"/><rect x="13.5" y="105.45" width="3" height="1" fill="#1a1a1a"/><rect x="13.5" y="107.91" width="3" height="1" fill="#1a1a1a"/><rect x="13.5" y="110.37" width="3" height="1" fill="#1a1a1a"/><rect x="13.5" y="112.82" width="3" height="1" fill="#1a1a1a"/><rect x="11.5" y="115.28" width="5" height="1" fill="#1a1a1a"/><rect x="13.5" y="117.73" width="3" height="1" fill="#1a1a1a"/><rect x="13.5" y="120.19" width="3" height="1" fill="#1a1a1a"/><rect x="13.5" y="122.64" width="3" height="1" fill="#1a1a1a"/><rect x="13.5" y="125.10" width="3" height="1" fill="#1a1a1a"/><rect x="8.5" y="127.55" width="8" height="1" fill="#1a1a1a"/><rect x="13.5" y="130.00" width="3" height="1" fill="#1a1a1a"/><rect x="13.5" y="132.46" width="3" height="1" fill="#1a1a1a"/><rect x="13.5" y="134.92" width="3" height="1" fill="#1a1a1a"/><rect x="13.5" y="137.37" width="3" height="1" fill="#1a1a1a"/><rect x="11.5" y="139.82" width="5" height="1" fill="#1a1a1a"/><rect x="13.5" y="142.28" width="3" height="1" fill="#1a1a1a"/><rect x="13.5" y="144.74" width="3" height="1" fill="#1a1a1a"/><rect x="13.5" y="147.19" width="3" height="1" fill="#1a1a1a"/><rect x="13.5" y="149.64" width="3" height="1" fill="#1a1a1a"/><rect x="8.5" y="152.10" width="8" height="1" fill="#1a1a1a"/><rect x="13.5" y="154.56" width="3" height="1" fill="#1a1a1a"/><rect x="13.5" y="157.01" width="3" height="1" fill="#1a1a1a"/><rect x="13.5" y="159.47" width="3" height="1" fill="#1a1a1a"/><rect x="13.5" y="161.92" width="3" height="1" fill="#1a1a1a"/><rect x="11.5" y="164.38" width="5" height="1" fill="#1a1a1a"/><rect x="13.5" y="166.83" width="3" height="1" fill="#1a1a1a"/><rect x="13.5" y="169.29" width="3" height="1" fill="#1a1a1a"/><rect x="13.5" y="171.74" width="3" height="1" fill="#1a1a1a"/><rect x="13.5" y="174.19" width="3" height="1" fill="#1a1a1a"/><rect x="8.5" y="176.65" width="8" height="1" fill="#1a1a1a"/><rect x="13.5" y="179.11" width="3" height="1" fill="#1a1a1a"/><rect x="13.5" y="181.56" width="3" height="1" fill="#1a1a1a"/><rect x="13.5" y="184.01" width="3" height="1" fill="#1a1a1a"/><rect x="13.5" y="186.47" width="3" height="1" fill="#1a1a1a"/><rect x="11.5" y="188.93" width="5" height="1" fill="#1a1a1a"/><rect x="13.5" y="191.38" width="3" height="1" fill="#1a1a1a"/><rect x="13.5" y="193.84" width="3" height="1" fill="#1a1a1a"/><rect x="13.5" y="196.29" width="3" height="1" fill="#1a1a1a"/><rect x="13.5" y="198.75" width="3" height="1" fill="#1a1a1a"/><rect x="8.5" y="201.20" width="8" height="1" fill="#1a1a1a"/><rect x="13.5" y="203.66" width="3" height="1" fill="#1a1a1a"/><rect x="13.5" y="206.11" width="3" height="1" fill="#1a1a1a"/><rect x="13.5" y="208.56" width="3" height="1" fill="#1a1a1a"/><rect x="13.5" y="211.02" width="3" height="1" fill="#1a1a1a"/><rect x="11.5" y="213.48" width="5" height="1" fill="#1a1a1a"/><rect x="13.5" y="215.93" width="3" height="1" fill="#1a1a1a"/><rect x="13.5" y="218.38" width="3" height="1" fill="#1a1a1a"/><rect x="13.5" y="220.84" width="3" height="1" fill="#1a1a1a"/><rect x="13.5" y="223.30" width="3" height="1" fill="#1a1a1a"/><rect x="8.5" y="225.75" width="8" height="1" fill="#1a1a1a"/><rect x="13.5" y="228.20" width="3" height="1" fill="#1a1a1a"/><rect x="13.5" y="230.66" width="3" height="1" fill="#1a1a1a"/><rect x="13.5" y="233.12" width="3" height="1" fill="#1a1a1a"/><rect x="13.5" y="235.57" width="3" height="1" fill="#1a1a1a"/><rect x="11.5" y="238.02" width="5" height="1" fill="#1a1a1a"/><rect x="13.5" y="240.48" width="3" height="1" fill="#1a1a1a"/><rect x="13.5" y="242.94" width="3" height="1" fill="#1a1a1a"/><rect x="13.5" y="245.39" width="3" height="1" fill="#1a1a1a"/><rect x="13.5" y="247.84" width="3" height="1" fill="#1a1a1a"/><rect x="8.5" y="250.30" width="8" height="1" fill="#1a1a1a"/><rect x="13.5" y="252.75" width="3" height="1" fill="#1a1a1a"/><rect x="13.5" y="255.21" width="3" height="1" fill="#1a1a1a"/><rect x="13.5" y="257.67" width="3" height="1" fill="#1a1a1a"/><rect x="13.5" y="260.12" width="3" height="1" fill="#1a1a1a"/><rect x="11.5" y="262.57" width="5" height="1" fill="#1a1a1a"/><rect x="13.5" y="265.03" width="3" height="1" fill="#1a1a1a"/><rect x="13.5" y="267.49" width="3" height="1" fill="#1a1a1a"/><rect x="13.5" y="269.94" width="3" height="1" fill="#1a1a1a"/><rect x="13.5" y="272.39" width="3" height="1" fill="#1a1a1a"/><rect x="8.5" y="274.85" width="8" height="1" fill="#1a1a1a"/><rect x="13.5" y="277.31" width="3" height="1" fill="#1a1a1a"/><rect x="13.5" y="279.76" width="3" height="1" fill="#1a1a1a"/><rect x="13.5" y="282.21" width="3" height="1" fill="#1a1a1a"/><rect x="13.5" y="284.67" width="3" height="1" fill="#1a1a1a"/><rect x="11.5" y="287.12" width="5" height="1" fill="#1a1a1a"/><rect x="13.5" y="289.58" width="3" height="1" fill="#1a1a1a"/><rect x="13.5" y="292.04" width="3" height="1" fill="#1a1a1a"/><rect x="13.5" y="294.49" width="3" height="1" fill="#1a1a1a"/><rect x="13.5" y="296.94" width="3" height="1" fill="#1a1a1a"/><rect x="8.5" y="299.40" width="8" height="1" fill="#1a1a1a"/><rect x="13.5" y="301.86" width="3" height="1" fill="#1a1a1a"/><rect x="13.5" y="304.31" width="3" height="1" fill="#1a1a1a"/><rect x="13.5" y="306.76" width="3" height="1" fill="#1a1a1a"/><rect x="13.5" y="309.22" width="3" height="1" fill="#1a1a1a"/><rect x="11.5" y="311.68" width="5" height="1" fill="#1a1a1a"/><rect x="13.5" y="314.13" width="3" height="1" fill="#1a1a1a"/><rect x="13.5" y="316.58" width="3" height="1" fill="#1a1a1a"/><rect x="13.5" y="319.04" width="3" height="1" fill="#1a1a1a"/><rect x="13.5" y="321.50" width="3" height="1" fill="#1a1a1a"/><rect x="8.5" y="323.95" width="8" height="1" fill="#1a1a1a"/><rect x="13.5" y="326.40" width="3" height="1" fill="#1a1a1a"/><rect x="13.5" y="328.86" width="3" height="1" fill="#1a1a1a"/><rect x="13.5" y="331.31" width="3" height="1" fill="#1a1a1a"/><rect x="13.5" y="333.77" width="3" height="1" fill="#1a1a1a"/><rect x="11.5" y="336.23" width="5" height="1" fill="#1a1a1a"/><rect x="13.5" y="338.68" width="3" height="1" fill="#1a1a1a"/><rect x="13.5" y="341.13" width="3" height="1" fill="#1a1a1a"/><rect x="13.5" y="343.59" width="3" height="1" fill="#1a1a1a"/><rect x="13.5" y="346.05" width="3" height="1" fill="#1a1a1a"/><rect x="8.5" y="348.50" width="8" height="1" fill="#1a1a1a"/><rect x="13.5" y="350.95" width="3" height="1" fill="#1a1a1a"/><rect x="13.5" y="353.41" width="3" height="1" fill="#1a1a1a"/><rect x="13.5" y="355.87" width="3" height="1" fill="#1a1a1a"/><rect x="13.5" y="358.32" width="3" height="1" fill="#1a1a1a"/><rect x="11.5" y="360.77" width="5" height="1" fill="#1a1a1a"/><rect x="13.5" y="363.23" width="3" height="1" fill="#1a1a1a"/><rect x="13.5" y="365.69" width="3" height="1" fill="#1a1a1a"/><rect x="13.5" y="368.14" width="3" height="1" fill="#1a1a1a"/><rect x="13.5" y="370.60" width="3" height="1" fill="#1a1a1a"/><rect x="8.5" y="373.05" width="8" height="1" fill="#1a1a1a"/><rect x="13.5" y="375.50" width="3" height="1" fill="#1a1a1a"/><rect x="13.5" y="377.96" width="3" height="1" fill="#1a1a1a"/><rect x="13.5" y="380.42" width="3" height="1" fill="#1a1a1a"/><rect x="13.5" y="382.87" width="3" height="1" fill="#1a1a1a"/><rect x="11.5" y="385.32" width="5" height="1" fill="#1a1a1a"/><rect x="13.5" y="387.78" width="3" height="1" fill="#1a1a1a"/><rect x="13.5" y="390.24" width="3" height="1" fill="#1a1a1a"/><rect x="13.5" y="392.69" width="3" height="1" fill="#1a1a1a"/><rect x="13.5" y="395.14" width="3" height="1" fill="#1a1a1a"/><rect x="8.5" y="397.60" width="8" height="1" fill="#1a1a1a"/><rect x="13.5" y="400.06" width="3" height="1" fill="#1a1a1a"/><rect x="13.5" y="402.51" width="3" height="1" fill="#1a1a1a"/><rect x="13.5" y="404.97" width="3" height="1" fill="#1a1a1a"/><rect x="13.5" y="407.42" width="3" height="1" fill="#1a1a1a"/><rect x="11.5" y="409.88" width="5" height="1" fill="#1a1a1a"/><rect x="13.5" y="412.33" width="3" height="1" fill="#1a1a1a"/><rect x="13.5" y="414.79" width="3" height="1" fill="#1a1a1a"/><rect x="13.5" y="417.24" width="3" height="1" fill="#1a1a1a"/><rect x="13.5" y="419.70" width="3" height="1" fill="#1a1a1a"/><rect x="8.5" y="422.15" width="8" height="1" fill="#1a1a1a"/><rect x="13.5" y="424.61" width="3" height="1" fill="#1a1a1a"/><rect x="13.5" y="427.06" width="3" height="1" fill="#1a1a1a"/><rect x="13.5" y="429.51" width="3" height="1" fill="#1a1a1a"/><rect x="13.5" y="431.97" width="3" height="1" fill="#1a1a1a"/><rect x="11.5" y="434.43" width="5" height="1" fill="#1a1a1a"/><rect x="13.5" y="436.88" width="3" height="1" fill="#1a1a1a"/><rect x="13.5" y="439.34" width="3" height="1" fill="#1a1a1a"/><rect x="13.5" y="441.79" width="3" height="1" fill="#1a1a1a"/><rect x="13.5" y="444.25" width="3" height="1" fill="#1a1a1a"/><rect x="8.5" y="446.70" width="8" height="1" fill="#1a1a1a"/><rect x="13.5" y="449.16" width="3" height="1" fill="#1a1a1a"/><rect x="13.5" y="451.61" width="3" height="1" fill="#1a1a1a"/><rect x="13.5" y="454.07" width="3" height="1" fill="#1a1a1a"/><rect x="13.5" y="456.52" width="3" height="1" fill="#1a1a1a"/><rect x="11.5" y="458.98" width="5" height="1" fill="#1a1a1a"/><rect x="13.5" y="461.43" width="3" height="1" fill="#1a1a1a"/><rect x="13.5" y="463.88" width="3" height="1" fill="#1a1a1a"/><rect x="13.5" y="466.34" width="3" height="1" fill="#1a1a1a"/><rect x="13.5" y="468.80" width="3" height="1" fill="#1a1a1a"/></svg><div class="t" style="left:166.5px;top:128.60px;font-size:5.6px;letter-spacing:1.6px;line-height:6px;color:#7088b0;transform-origin:0 0;transform:translate(10px,0) rotate(90deg);">20</div><div class="t" style="left:166.5px;top:153.15px;font-size:5.6px;letter-spacing:1.6px;line-height:6px;color:#7088b0;transform-origin:0 0;transform:translate(10px,0) rotate(90deg);">30</div><div class="t" style="left:166.5px;top:177.70px;font-size:5.6px;letter-spacing:1.6px;line-height:6px;color:#7088b0;transform-origin:0 0;transform:translate(10px,0) rotate(90deg);">40</div><div class="t" style="left:166.5px;top:202.25px;font-size:5.6px;letter-spacing:1.6px;line-height:6px;color:#7088b0;transform-origin:0 0;transform:translate(10px,0) rotate(90deg);">50</div><div class="t" style="left:166.5px;top:226.80px;font-size:5.6px;letter-spacing:1.6px;line-height:6px;color:#7088b0;transform-origin:0 0;transform:translate(10px,0) rotate(90deg);">60</div><div class="t" style="left:166.5px;top:251.35px;font-size:5.6px;letter-spacing:1.6px;line-height:6px;color:#7088b0;transform-origin:0 0;transform:translate(10px,0) rotate(90deg);">70</div><div class="t" style="left:166.5px;top:275.90px;font-size:5.6px;letter-spacing:1.6px;line-height:6px;color:#7088b0;transform-origin:0 0;transform:translate(10px,0) rotate(90deg);">80</div><div class="t" style="left:166.5px;top:300.45px;font-size:5.6px;letter-spacing:1.6px;line-height:6px;color:#7088b0;transform-origin:0 0;transform:translate(10px,0) rotate(90deg);">90</div><div class="t" style="left:166.5px;top:325.00px;font-size:5.6px;letter-spacing:1.6px;line-height:6px;color:#7088b0;transform-origin:0 0;transform:translate(10px,0) rotate(90deg);">100</div><div style="left:165.5px;top:104.5px;width:16.5px;height:17px;background:#ffffff;"></div><svg style="left:165.5px;top:104.5px" width="17" height="17"><path d="M8 1V16M0 7.5H16" stroke="#1a1a1a" stroke-width="1" stroke-dasharray="1 1" /><path d="M8 4V11M4.5 7.5H11.5" stroke="#1a1a1a" stroke-width="1"/></svg><div style="left:182px;top:577.8px;width:670px;height:10.7px;background:#dcdcdc;"></div><div style="left:293px;top:579px;width:210px;height:8.5px;background:#f4f4f4;"></div><div style="left:141px;top:588.5px;width:710px;height:23px;background:#efefef;"></div><div style="left:141px;top:588.2px;width:710px;height:1px;background:#cfcfcf;"></div><div style="left:230px;top:592.4px;width:58px;height:14.6px;background:#ffffff;border:1px solid #b8b8b8;border-radius:2px;box-sizing:border-box;"></div><div class="t" style="left:250.50px;top:593.30px;line-height:13px;font-size:9.5px;color:#1c1c1c;">00 %</div><svg style="left:281.5px;top:594px;" width="6" height="12" viewBox="0 0 6 12"><path d="M0.8 4.4L3 1.8L5.2 4.4ZM0.8 7.4L3 10L5.2 7.4Z" fill="#555"/></svg><svg style="left:294px;top:594.6px;" width="10" height="10" viewBox="0 0 10 10"><circle cx="4.2" cy="4.2" r="3.4" fill="none" stroke="#0c0c0c" stroke-width="1.2"/><path d="M6.8 6.8L9.4 9.4" stroke="#0c0c0c" stroke-width="1.6"/><path d="M2.4 4.2H6" stroke="#0c0c0c" stroke-width="1.1"/></svg><svg style="left:309.4px;top:594.6px;" width="10" height="10" viewBox="0 0 10 10"><circle cx="4.2" cy="4.2" r="3.4" fill="none" stroke="#0c0c0c" stroke-width="1.2"/><path d="M6.8 6.8L9.4 9.4" stroke="#0c0c0c" stroke-width="1.6"/><circle cx="4.2" cy="4.2" r="1.2" fill="#0c0c0c"/></svg><svg style="left:325px;top:594.6px;" width="10" height="10" viewBox="0 0 10 10"><circle cx="4.2" cy="4.2" r="3.4" fill="none" stroke="#0c0c0c" stroke-width="1.2"/><path d="M6.8 6.8L9.4 9.4" stroke="#0c0c0c" stroke-width="1.6"/><path d="M2.4 4.2H6M4.2 2.4V6" stroke="#0c0c0c" stroke-width="1.1"/></svg><svg style="left:341.5px;top:595.5px;" width="10.4" height="8.6" viewBox="0 0 10.4 8.6"><path d="M0.6 1V7.6M2 4.3H10M5 1.6L2.2 4.3L5 7" fill="none" stroke="#555" stroke-width="1.2"/></svg><svg style="left:356.7px;top:595.5px;" width="10.4" height="8.6" viewBox="0 0 10.4 8.6"><path d="M0.8 4.3H9.4M3.8 1.6L1 4.3L3.8 7" fill="none" stroke="#555" stroke-width="1.2"/></svg><div style="left:369px;top:592.4px;width:53.8px;height:14.6px;background:#ffffff;border:1px solid #b8b8b8;border-radius:2px;box-sizing:border-box;"></div><div style="left:412px;top:593.4px;width:1px;height:12.6px;background:#b8b8b8;opacity:.6"></div><div class="t" style="left:384.66px;top:592.50px;line-height:15px;font-size:10.5px;color:#888;">26</div><svg style="left:413.6px;top:595.4px;" width="8" height="9" viewBox="0 0 8 9"><path d="M4 0.6V6M1.2 4.2L4 7.6L6.8 4.2Z" fill="#0c0c0c" stroke="#0c0c0c" stroke-width="1"/></svg><div class="t" style="left:426.00px;top:593.50px;line-height:13px;font-size:9.5px;color:#888;letter-spacing:-0.526px;">of 27</div><svg style="left:447.6px;top:595.5px;" width="10.4" height="8.6" viewBox="0 0 10.4 8.6"><path d="M0.6 4.3H9.2M6.2 1.6L9 4.3L6.2 7" fill="none" stroke="#555" stroke-width="1.2"/></svg><svg style="left:462px;top:595.5px;" width="10.4" height="8.6" viewBox="0 0 10.4 8.6"><path d="M9.8 1V7.6M0.4 4.3H8.4M5.4 1.6L8.2 4.3L5.4 7" fill="none" stroke="#555" stroke-width="1.2"/></svg><div style="left:479.5px;top:592.4px;width:94px;height:14.6px;background:#ffffff;border:1px solid #b8b8b8;border-radius:2px;box-sizing:border-box;"></div><div style="left:483px;top:595px;width:10.4px;height:9.4px;background:#6b6b6b;"></div><div class="t" style="left:495.50px;top:593.50px;line-height:13px;font-size:9.5px;color:#888;letter-spacing:-0.470px;">Background</div><div style="left:561.5px;top:593.4px;width:1px;height:12.6px;background:#b8b8b8;opacity:.6"></div><svg style="left:563.4px;top:595.4px;" width="8" height="9" viewBox="0 0 8 9"><path d="M4 0.6V6M1.2 4.2L4 7.6L6.8 4.2Z" fill="#0c0c0c" stroke="#0c0c0c" stroke-width="1"/></svg><div class="t" style="left:613.00px;top:594.00px;line-height:12px;font-size:8.5px;color:#1c1c1c;">X:</div><div class="t" style="left:624.50px;top:594.00px;line-height:12px;font-size:8.5px;color:#1c1c1c;letter-spacing:-0.032px;">135,344</div><div class="t" style="left:668.00px;top:594.00px;line-height:12px;font-size:8.5px;color:#1c1c1c;">Y:</div><div class="t" style="left:679.50px;top:594.00px;line-height:12px;font-size:8.5px;color:#1c1c1c;letter-spacing:-0.175px;">121,322</div><div style="left:722px;top:593px;width:22px;height:14px;background:#ffffff;border:1px solid #b8b8b8;border-radius:2px;box-sizing:border-box;"></div><div class="t" style="left:726.50px;top:593.50px;line-height:13px;font-size:9px;color:#1c1c1c;">mm</div><div style="left:743px;top:104.5px;width:108px;height:485px;background:#efefef;"></div></div><div id="D"><div style="left:141px;top:37px;width:709px;height:24.5px;background:#2f2f2f;"></div><div style="left:141px;top:61.5px;width:709px;height:18.5px;background:#2b2b2b;"></div><div style="left:141px;top:80px;width:709px;height:24.5px;background:#2b2b2b;"></div><div style="left:141px;top:79.6px;width:709px;height:1px;background:#4a4a4a;"></div><div style="left:141px;top:103.6px;width:709px;height:1px;background:#4a4a4a;"></div><div style="left:146.1px;top:42.5px;width:13.6px;height:13.6px;border-radius:50%;background:#444;"></div><svg style="left:147.9px;top:44.3px" width="10" height="10" viewBox="-5 -5 10 10"><path d="M-2.7 -2.7L2.7 2.7M2.7 -2.7L-2.7 2.7" fill="none" stroke="#ddd" stroke-width="1"/></svg><div style="left:168.5px;top:42.5px;width:13.6px;height:13.6px;border-radius:50%;background:#444;"></div><svg style="left:170.3px;top:44.3px" width="10" height="10" viewBox="-5 -5 10 10"><path d="M-2.8 0H2.8" fill="none" stroke="#ddd" stroke-width="1"/></svg><div style="left:191px;top:42.5px;width:13.6px;height:13.6px;border-radius:50%;background:#444;"></div><svg style="left:192.8px;top:44.3px" width="10" height="10" viewBox="-5 -5 10 10"><path d="M-2.3 -2.3H2.3V2.3H-2.3Z" fill="none" stroke="#ddd" stroke-width="1"/></svg><div class="t" style="left:229.00px;top:42.40px;line-height:14px;font-size:10px;color:#eaeaea;font-weight:bold;letter-spacing:-0.106px;">Scribus 1.7.0.</div><div class="t" style="left:158.00px;top:64.50px;line-height:14px;font-size:10px;color:#eaeaea;letter-spacing:-0.029px;"><u>F</u>ile</div><div class="t" style="left:184.70px;top:64.50px;line-height:14px;font-size:10px;color:#eaeaea;letter-spacing:0.067px;"><u>E</u>dit</div><div class="t" style="left:212.80px;top:64.50px;line-height:14px;font-size:10px;color:#eaeaea;letter-spacing:0.388px;"><u>I</u>tem</div><div class="t" style="left:244.50px;top:64.50px;line-height:14px;font-size:10px;color:#eaeaea;letter-spacing:0.582px;">I<u>n</u>sert</div><div class="t" style="left:283.00px;top:64.50px;line-height:14px;font-size:10px;color:#eaeaea;letter-spacing:0.036px;"><u>P</u>age</div><div class="t" style="left:316.70px;top:64.50px;line-height:14px;font-size:10px;color:#eaeaea;letter-spacing:0.419px;"><u>T</u>able</div><div class="t" style="left:352.70px;top:64.50px;line-height:14px;font-size:10px;color:#eaeaea;letter-spacing:0.193px;">E<u>x</u>tras</div><div class="t" style="left:391.00px;top:64.50px;line-height:14px;font-size:10px;color:#eaeaea;letter-spacing:0.126px;"><u>V</u>iew</div><div class="t" style="left:423.70px;top:64.50px;line-height:14px;font-size:10px;color:#eaeaea;letter-spacing:0.323px;"><u>S</u>cript</div><div class="t" style="left:461.00px;top:64.50px;line-height:14px;font-size:10px;color:#eaeaea;letter-spacing:0.348px;"><u>W</u>indows</div><div class="t" style="left:512.80px;top:64.50px;line-height:14px;font-size:10px;color:#eaeaea;letter-spacing:0.358px;"><u>H</u>elp</div><svg style="left:140.5px;top:64.6px;" width="12" height="12" viewBox="0 0 12 12"><circle cx="6" cy="6" r="5.8" fill="#2a6db5"/><path d="M3.4 8.8L4 7L7.6 3L8.8 4.2L5.2 8.2Z" fill="#f0d9a0"/><path d="M3.4 8.8L4 7L5.2 8.2Z" fill="#222"/></svg><div style="left:810px;top:63.5px;width:10.6px;height:10.6px;background:#5a5a5a;border-radius:1.5px;"></div><div style="left:823px;top:63.5px;width:10.6px;height:10.6px;background:#5a5a5a;border-radius:1.5px;"></div><div style="left:836.5px;top:63.5px;width:10.6px;height:10.6px;background:#5a5a5a;border-radius:1.5px;"></div><svg style="left:810px;top:63.5px;" width="38" height="11" viewBox="0 0 38 11"><path d="M2 8.6H8.6" stroke="#999" stroke-width="1.4"/><rect x="15" y="3.4" width="5" height="5" fill="none" stroke="#888" stroke-width="1"/><path d="M17 3V1.8H22V6.8H20.4" fill="none" stroke="#888" stroke-width="1"/><path d="M29 2.4L34.6 8.4M34.6 2.4L29 8.4" stroke="#999" stroke-width="1.2"/></svg><svg style="left:145.8px;top:85.6px;" width="4" height="13" viewBox="0 0 4 13"><rect x="0" y="0" width="1" height="1" fill="#4a4a4a"/><rect x="0" y="2.2" width="1" height="1" fill="#4a4a4a"/><rect x="0" y="4.4" width="1" height="1" fill="#4a4a4a"/><rect x="0" y="6.6" width="1" height="1" fill="#4a4a4a"/><rect x="0" y="8.8" width="1" height="1" fill="#4a4a4a"/><rect x="0" y="11" width="1" height="1" fill="#4a4a4a"/><rect x="2.2" y="0" width="1" height="1" fill="#4a4a4a"/><rect x="2.2" y="2.2" width="1" height="1" fill="#4a4a4a"/><rect x="2.2" y="4.4" width="1" height="1" fill="#4a4a4a"/><rect x="2.2" y="6.6" width="1" height="1" fill="#4a4a4a"/><rect x="2.2" y="8.8" width="1" height="1" fill="#4a4a4a"/><rect x="2.2" y="11" width="1" height="1" fill="#4a4a4a"/></svg><svg style="left:290px;top:85.6px;" width="4" height="13" viewBox="0 0 4 13"><rect x="0" y="0" width="1" height="1" fill="#4a4a4a"/><rect x="0" y="2.2" width="1" height="1" fill="#4a4a4a"/><rect x="0" y="4.4" width="1" height="1" fill="#4a4a4a"/><rect x="0" y="6.6" width="1" height="1" fill="#4a4a4a"/><rect x="0" y="8.8" width="1" height="1" fill="#4a4a4a"/><rect x="0" y="11" width="1" height="1" fill="#4a4a4a"/><rect x="2.2" y="0" width="1" height="1" fill="#4a4a4a"/><rect x="2.2" y="2.2" width="1" height="1" fill="#4a4a4a"/><rect x="2.2" y="4.4" width="1" height="1" fill="#4a4a4a"/><rect x="2.2" y="6.6" width="1" height="1" fill="#4a4a4a"/><rect x="2.2" y="8.8" width="1" height="1" fill="#4a4a4a"/><rect x="2.2" y="11" width="1" height="1" fill="#4a4a4a"/></svg><svg style="left:400px;top:85.6px;" width="4" height="13" viewBox="0 0 4 13"><rect x="0" y="0" width="1" height="1" fill="#4a4a4a"/><rect x="0" y="2.2" width="1" height="1" fill="#4a4a4a"/><rect x="0" y="4.4" width="1" height="1" fill="#4a4a4a"/><rect x="0" y="6.6" width="1" height="1" fill="#4a4a4a"/><rect x="0" y="8.8" width="1" height="1" fill="#4a4a4a"/><rect x="0" y="11" width="1" height="1" fill="#4a4a4a"/><rect x="2.2" y="0" width="1" height="1" fill="#4a4a4a"/><rect x="2.2" y="2.2" width="1" height="1" fill="#4a4a4a"/><rect x="2.2" y="4.4" width="1" height="1" fill="#4a4a4a"/><rect x="2.2" y="6.6" width="1" height="1" fill="#4a4a4a"/><rect x="2.2" y="8.8" width="1" height="1" fill="#4a4a4a"/><rect x="2.2" y="11" width="1" height="1" fill="#4a4a4a"/></svg><svg style="left:152.5px;top:85.8px;" width="12" height="13" viewBox="0 0 12 13"><path d="M4.2 1.2H10.8V11.8H1.2V4.2Z" fill="none" stroke="#f2f2f2" stroke-width="1.5" stroke-linejoin="round"/><path d="M4.4 1.2V4.4H1.2" fill="none" stroke="#f2f2f2" stroke-width="1.1"/></svg><svg style="left:170.8px;top:85.6px;" width="17" height="14" viewBox="0 0 17 14"><path d="M0.5 1.2H5.5L7 2.8H14.5V12H0.5Z" fill="#f2f2f2"/><path d="M2 4.3H13.2" stroke="#2b2b2b" stroke-width="0.9"/><path d="M13 11.6H16.5L14.75 13.6Z" fill="#f2f2f2"/></svg><svg style="left:191.8px;top:85.5px;" width="13" height="13" viewBox="0 0 13 13"><path d="M0.5 0.8H10L12.3 3V12.2H0.5Z" fill="#f2f2f2"/><rect x="3" y="1.6" width="5.6" height="3.2" fill="#2b2b2b"/><rect x="6.6" y="2" width="1.4" height="2.4" fill="#f2f2f2"/><rect x="2.4" y="7" width="8" height="4" fill="#2b2b2b"/></svg><svg style="left:213.3px;top:87px;" width="10" height="10" viewBox="0 0 10 10"><path d="M1 1L9 9M9 1L1 9" stroke="#f2f2f2" stroke-width="1.9" fill="none"/></svg><svg style="left:230.5px;top:85.8px;" width="14.4" height="12.4" viewBox="0 0 14.4 12.4"><rect x="3.2" y="0.6" width="8" height="3.4" fill="#f2f2f2"/><rect x="4.4" y="1.6" width="5.6" height="1.6" fill="#2b2b2b"/><rect x="0.4" y="3.4" width="13.6" height="6.2" rx="1.4" fill="#f2f2f2"/><rect x="10.8" y="4.6" width="1.6" height="1" fill="#2b2b2b"/><rect x="2.8" y="7" width="8.8" height="5" fill="#f2f2f2"/><rect x="4" y="8" width="6.4" height="3" fill="#2b2b2b"/></svg><svg style="left:251.6px;top:84.8px;" width="11.2" height="14" viewBox="0 0 11.2 14"><rect x="1.8" y="0.3" width="7.6" height="13.4" rx="2" fill="#f2f2f2"/><path d="M0.3 2H2V4.4H0.3ZM0.3 6H2V8.4H0.3ZM0.3 10H2V12H0.3ZM9.2 2H10.9V4.4H9.2ZM9.2 6H10.9V8.4H9.2ZM9.2 10H10.9V12H9.2Z" fill="#f2f2f2"/><circle cx="5.6" cy="3" r="1.5" fill="#2b2b2b"/><circle cx="5.6" cy="7" r="1.5" fill="#2b2b2b"/><circle cx="5.6" cy="11" r="1.5" fill="#2b2b2b"/></svg><svg style="left:269.6px;top:85.2px;" width="13.6" height="13" viewBox="0 0 13.6 13"><path d="M4.5 0.8H10.5V4.2M10.5 11V12.2H2V3.4L4.5 0.8V3.4H2" fill="none" stroke="#bbb" stroke-width="1.2"/><text x="0.2" y="10.3" font-family="Liberation Sans" font-weight="bold" font-size="6.6" fill="#f2f2f2" textLength="13.2" lengthAdjust="spacingAndGlyphs">PDF</text></svg><svg style="left:301.4px;top:87.3px;" width="12.6" height="9.2" viewBox="0 0 12.6 9.2"><path d="M5.2 0.2L0.2 4.2L5.2 8.2V5.6C8.5 5.4 10.8 6.6 12.4 9C12.2 5.2 9.6 2.8 5.2 2.7Z" fill="#f2f2f2"/></svg><svg style="left:320.5px;top:87.3px;" width="12.6" height="9.2" viewBox="0 0 12.6 9.2"><path d="M7.3 0.2L12.3 4.2L7.3 8.2V5.6C4 5.4 1.7 6.6 0.1 9C0.3 5.2 2.9 2.8 7.3 2.7Z" fill="#8c8c8c"/></svg><svg style="left:340.3px;top:85px;" width="13" height="13" viewBox="0 0 13 13"><circle cx="2.6" cy="2.8" r="1.9" fill="none" stroke="#f2f2f2" stroke-width="1.3"/><circle cx="2.6" cy="10.2" r="1.9" fill="none" stroke="#f2f2f2" stroke-width="1.3"/><path d="M4 4L12.2 12.2M4 9L12.2 0.8" stroke="#f2f2f2" stroke-width="1.5" fill="none"/></svg><svg style="left:359px;top:84.8px;" width="14.2" height="13.8" viewBox="0 0 14.2 13.8"><path d="M3 9.6H0.7V0.7H9.6V3" fill="none" stroke="#f2f2f2" stroke-width="1.3"/><path d="M4 3.6H13.4V10L10.4 13H4Z" fill="#2b2b2b" stroke="#f2f2f2" stroke-width="1.3"/><path d="M13.4 10H10.4V13Z" fill="#f2f2f2"/></svg><svg style="left:380px;top:84.8px;" width="12.6" height="13.6" viewBox="0 0 12.6 13.6"><rect x="0.7" y="1.4" width="11.2" height="11.4" fill="none" stroke="#f2f2f2" stroke-width="1.3"/><rect x="3.6" y="0.2" width="5.4" height="2.6" rx="1" fill="#f2f2f2"/><path d="M3.4 4H9.6V8.6L7.4 10.8H3.4Z" fill="#2b2b2b" stroke="#f2f2f2" stroke-width="1.2"/><path d="M9.6 8.6H7.4V10.8Z" fill="#f2f2f2"/></svg><svg style="left:410px;top:85.8px;" width="13.4" height="12.8" viewBox="0 0 13.4 12.8"><rect x="0.8" y="0.8" width="11.6" height="5.2" rx="1.2" fill="none" stroke="#f2f2f2" stroke-width="1.4"/><path d="M4.6 3V11L6.7 9.1L8.3 12.4L9.9 11.6L8.3 8.5H11Z" fill="#f2f2f2" stroke="#2b2b2b" stroke-width="0.5"/></svg><svg style="left:430.8px;top:86.8px;" width="10.4" height="10.4" viewBox="0 0 10.4 10.4"><rect x="0" y="0" width="10.4" height="10.4" fill="#f2f2f2"/><path d="M2.2 5.4L4.4 7.6L8.4 2.8" stroke="#2b2b2b" stroke-width="1.4" fill="none"/></svg><svg style="left:449.6px;top:85.9px;" width="12.6" height="12.6" viewBox="0 0 12.6 12.6"><circle cx="6.3" cy="6.3" r="5.6" fill="none" stroke="#f2f2f2" stroke-width="1.2"/><circle cx="6.3" cy="6.3" r="3.4" fill="#f2f2f2"/></svg><svg style="left:468.2px;top:86.6px;" width="14" height="10.8" viewBox="0 0 14 10.8"><path d="M9 2.4H0.8V8.4H9M11.6 2.4H13.2V8.4H11.6" fill="none" stroke="#f2f2f2" stroke-width="1.3"/><path d="M8.6 0.4H12M8.6 10.4H12M10.3 0.4V10.4" stroke="#f2f2f2" stroke-width="1.2" fill="none"/></svg><svg style="left:487px;top:84.8px;" width="14" height="13.8" viewBox="0 0 14 13.8"><rect x="0.6" y="0.6" width="12.8" height="3.4" fill="none" stroke="#f2f2f2" stroke-width="1.1"/><path d="M10 0.6V4" stroke="#f2f2f2" stroke-width="1"/><rect x="0.6" y="4" width="10" height="9" fill="none" stroke="#f2f2f2" stroke-width="1.1"/><path d="M2 6.2H9.2M2 8.4H9.2M2 10.6H9.2" stroke="#f2f2f2" stroke-width="1.3"/></svg><svg style="left:507.6px;top:85.8px;" width="12.8" height="12.2" viewBox="0 0 12.8 12.2"><rect x="0.7" y="0.7" width="11.4" height="10.8" rx="0.8" fill="none" stroke="#f2f2f2" stroke-width="1.3"/><path d="M2.4 3.4H3.6M4.8 3.4H10.4M2.4 6.1H3.6M4.8 6.1H10.4M2.4 8.8H3.6M4.8 8.8H10.4" stroke="#f2f2f2" stroke-width="1.5"/></svg><svg style="left:526.9px;top:86px;" width="13.8" height="12.6" viewBox="0 0 13.8 12.6"><path d="M1.6 0H12.2Q13.8 0 13.8 1.6V7.8Q13.8 9.4 12.2 9.4H6L4.2 12.4L3.8 9.4H1.6Q0 9.4 0 7.8V1.6Q0 0 1.6 0Z" fill="#f2f2f2"/><path d="M2.6 2.6H11.2M2.6 4.6H11.2M2.6 6.6H8" stroke="#2b2b2b" stroke-width="1" opacity="0.75"/></svg><svg style="left:546.7px;top:86px;" width="13.8" height="12.6" viewBox="0 0 13.8 12.6"><path d="M1.6 0H12.2Q13.8 0 13.8 1.6V7.8Q13.8 9.4 12.2 9.4H6L4.2 12.4L3.8 9.4H1.6Q0 9.4 0 7.8V1.6Q0 0 1.6 0Z" fill="#f2f2f2"/><rect x="2.6" y="3" width="4.6" height="3.2" rx="1.6" fill="none" stroke="#2b2b2b" stroke-width="1"/><rect x="6.6" y="3" width="4.6" height="3.2" rx="1.6" fill="none" stroke="#2b2b2b" stroke-width="1"/></svg><svg style="left:568.9px;top:85.6px;" width="3.6" height="12.4" viewBox="0 0 3.6 12.4"><rect x="0" y="0" width="1" height="1" fill="#4a4a4a"/><rect x="2.4" y="0" width="1" height="1" fill="#4a4a4a"/><rect x="0" y="2.2" width="1" height="1" fill="#4a4a4a"/><rect x="2.4" y="2.2" width="1" height="1" fill="#4a4a4a"/><rect x="0" y="4.4" width="1" height="1" fill="#4a4a4a"/><rect x="2.4" y="4.4" width="1" height="1" fill="#4a4a4a"/><rect x="0" y="6.6" width="1" height="1" fill="#4a4a4a"/><rect x="2.4" y="6.6" width="1" height="1" fill="#4a4a4a"/><rect x="0" y="8.8" width="1" height="1" fill="#4a4a4a"/><rect x="2.4" y="8.8" width="1" height="1" fill="#4a4a4a"/><rect x="0" y="11" width="1" height="1" fill="#4a4a4a"/><rect x="2.4" y="11" width="1" height="1" fill="#4a4a4a"/></svg><svg style="left:578px;top:86px;" width="12" height="11.6" viewBox="0 0 12 11.6"><rect x="0" y="0" width="12" height="11.6" fill="#f2f2f2"/><path d="M1.6 1.2H10.8V10.4H9V8H6.8V5.8H4.4V3.6H1.6Z" fill="#2b2b2b"/></svg><svg style="left:597.8px;top:87px;" width="11" height="10" viewBox="0 0 11 10"><path d="M1.6 1H5.2M6.6 1H11M0 3.6H3.4M4.8 3.6H8M9.4 3.6H11M0 6.2H5M6.4 6.2H10M0.6 8.8H6" stroke="#f2f2f2" stroke-width="1.7" fill="none"/></svg><svg style="left:616.5px;top:85.6px;" width="13.8" height="12.6" viewBox="0 0 13.8 12.6"><rect x="0.7" y="0.7" width="12.4" height="8.8" rx="0.8" fill="#2b2b2b" stroke="#f2f2f2" stroke-width="1.3"/><rect x="2" y="2" width="4.4" height="2.8" fill="#1f9fe0"/><rect x="7.2" y="2" width="4.6" height="2.8" fill="#e6189a"/><rect x="2" y="5.4" width="4.4" height="2.8" fill="#f2e21a"/><rect x="7.2" y="5.4" width="4.6" height="2.8" fill="#222"/><path d="M5 9.8H8.8V11H5ZM3 11.2H10.8V12.4H3Z" fill="#f2f2f2"/></svg><svg style="left:641px;top:85.8px;" width="13.8" height="12.6" viewBox="0 0 13.8 12.6"><rect x="0.7" y="0.7" width="12.4" height="8.8" rx="0.8" fill="none" stroke="#f2f2f2" stroke-width="1.3"/><path d="M2.4 5.1Q6.9 0.8 11.4 5.1Q6.9 9.4 2.4 5.1Z" fill="#f2f2f2"/><circle cx="6.9" cy="5.1" r="1.9" fill="#2b2b2b"/><circle cx="6.9" cy="5.1" r="1" fill="#f2f2f2"/><path d="M3 10.6H10.8V12H3Z" fill="#f2f2f2"/></svg><svg style="left:661.8px;top:85.8px;" width="12.8" height="12.8" viewBox="0 0 12.8 12.8"><path d="M3.4 0.7H9.6V4.4M9.6 9V12H0.8V3.4L3.4 0.7V3.4H0.8" fill="none" stroke="#f2f2f2" stroke-width="1.2"/><path d="M5 10.6L5.6 8.4L10.8 3.2L12.4 4.8L7.2 10Z" fill="#f2f2f2" stroke="#2b2b2b" stroke-width="0.5"/></svg><svg style="left:681px;top:86.8px;" width="13.4" height="11.6" viewBox="0 0 13.4 11.6"><path d="M0.2 4.6Q5.4 -1.4 10.8 4.6Q5.4 10.4 0.2 4.6Z" fill="#f2f2f2"/><circle cx="5.4" cy="4.6" r="2.6" fill="#2b2b2b"/><circle cx="5.4" cy="4.6" r="1.5" fill="#f2f2f2"/><circle cx="10" cy="8.2" r="3.1" fill="#f2f2f2" stroke="#2b2b2b" stroke-width="0.8"/><path d="M8.4 8.2L9.6 9.4L11.6 7" stroke="#2b2b2b" stroke-width="1" fill="none"/></svg><svg style="left:704.4px;top:85.4px;" width="14.6" height="13.2" viewBox="0 0 14.6 13.2"><path d="M0.6 0.6H10.6V10.4H0.6ZM4 0.6V10.4M7.4 0.6V10.4M0.6 3.8H10.6M0.6 7.2H10.6" fill="none" stroke="#bbb" stroke-width="1.1"/><rect x="6.4" y="6.4" width="8" height="6.4" fill="#2b2b2b"/><path d="M7.6 12.6V9.6A2.9 2.9 0 0 1 13.4 9.6V12.6" fill="none" stroke="#e8564e" stroke-width="1.9"/></svg><svg style="left:724.6px;top:85.4px;" width="14.6" height="13.2" viewBox="0 0 14.6 13.2"><rect x="0.6" y="0.6" width="10" height="9.8" fill="none" stroke="#bbb" stroke-width="1.1"/><path d="M3.6 0.6V10.4M0.6 3.4H10.6" stroke="#3daee9" stroke-width="1.1"/><rect x="6.4" y="6.4" width="8" height="6.4" fill="#2b2b2b"/><path d="M7.6 12.6V9.6A2.9 2.9 0 0 1 13.4 9.6V12.6" fill="none" stroke="#e8564e" stroke-width="1.9"/></svg><div style="left:614.6px;top:83.2px;width:17.6px;height:17.6px;border:1px solid #434343;box-sizing:border-box;border-radius:2px;"></div><div style="left:722.6px;top:83.2px;width:18.6px;height:17.6px;border:1px solid #434343;box-sizing:border-box;border-radius:2px;"></div><svg style="left:747px;top:83.6px;" width="10" height="7" viewBox="0 0 10 7"><path d="M1.4 5.4L5 1.6L8.6 5.4" fill="none" stroke="#f2f2f2" stroke-width="1.3"/></svg><div style="left:141px;top:104px;width:24.5px;height:480px;background:#2b2b2b;"></div><svg style="left:148.5px;top:106.6px;" width="11" height="4" viewBox="0 0 11 4"><rect x="0" y="0" width="1" height="1" fill="#c9c9c9"/><rect x="0" y="2.2" width="1" height="1" fill="#c9c9c9"/><rect x="2.2" y="0" width="1" height="1" fill="#c9c9c9"/><rect x="2.2" y="2.2" width="1" height="1" fill="#c9c9c9"/><rect x="4.4" y="0" width="1" height="1" fill="#c9c9c9"/><rect x="4.4" y="2.2" width="1" height="1" fill="#c9c9c9"/><rect x="6.6" y="0" width="1" height="1" fill="#c9c9c9"/><rect x="6.6" y="2.2" width="1" height="1" fill="#c9c9c9"/><rect x="8.8" y="0" width="1" height="1" fill="#c9c9c9"/><rect x="8.8" y="2.2" width="1" height="1" fill="#c9c9c9"/></svg><svg style="left:148.4px;top:115.6px;" width="10" height="12" viewBox="0 0 10 12"><path d="M0.4 0.2L9 6.6L5.6 7L7.4 10.8L5.6 11.6L3.8 7.8L0.8 10.2Z" fill="#f2f2f2"/></svg><svg style="left:146.4px;top:133.4px;" width="13.4" height="13.4" viewBox="0 0 13.4 13.4"><rect x="1.2" y="1.2" width="11" height="11" fill="none" stroke="#f2f2f2" stroke-width="1.2"/><rect x="0" y="0" width="2.4" height="2.4" fill="#f2f2f2"/><rect x="0" y="10.8" width="2.4" height="2.4" fill="#f2f2f2"/><rect x="10.8" y="0" width="2.4" height="2.4" fill="#f2f2f2"/><rect x="10.8" y="10.8" width="2.4" height="2.4" fill="#f2f2f2"/><text x="6.7" y="10" text-anchor="middle" font-family="Liberation Serif" font-weight="bold" font-size="9" fill="#f2f2f2">T</text></svg><svg style="left:146.4px;top:152.6px;" width="13.4" height="13.4" viewBox="0 0 13.4 13.4"><rect x="1.2" y="1.2" width="11" height="11" fill="none" stroke="#f2f2f2" stroke-width="1.2"/><rect x="0" y="0" width="2.4" height="2.4" fill="#f2f2f2"/><rect x="0" y="10.8" width="2.4" height="2.4" fill="#f2f2f2"/><rect x="10.8" y="0" width="2.4" height="2.4" fill="#f2f2f2"/><rect x="10.8" y="10.8" width="2.4" height="2.4" fill="#f2f2f2"/><circle cx="4.6" cy="4.4" r="1.3" fill="#f2f2f2"/><path d="M2 10.6L5 7L6.6 8.6L9 5.6L11.4 8.4V10.6Z" fill="#f2f2f2"/></svg><svg style="left:146.4px;top:171.4px;" width="13.4" height="13.4" viewBox="0 0 13.4 13.4"><rect x="1.2" y="1.2" width="11" height="11" fill="none" stroke="#f2f2f2" stroke-width="1.2"/><rect x="0" y="0" width="2.4" height="2.4" fill="#f2f2f2"/><rect x="0" y="10.8" width="2.4" height="2.4" fill="#f2f2f2"/><rect x="10.8" y="0" width="2.4" height="2.4" fill="#f2f2f2"/><rect x="10.8" y="10.8" width="2.4" height="2.4" fill="#f2f2f2"/><path d="M6.7 3.4L9.6 4.8V8.2L6.7 9.8L3.8 8.2V4.8Z" fill="none" stroke="#f2f2f2" stroke-width="1"/><path d="M3.8 4.8L6.7 6.2L9.6 4.8M6.7 6.2V9.8" fill="none" stroke="#f2f2f2" stroke-width="0.8"/></svg><svg style="left:146.4px;top:191.8px;" width="13.4" height="11.6" viewBox="0 0 13.4 11.6"><rect x="0.6" y="0.6" width="12.2" height="10.4" fill="none" stroke="#f2f2f2" stroke-width="1.2"/><path d="M0.6 2.6H12.8" stroke="#f2f2f2" stroke-width="1.6"/><path d="M0.6 5.4H12.8M0.6 8.2H12.8M4.7 0.6V11M8.8 0.6V11" stroke="#f2f2f2" stroke-width="1.1"/></svg><svg style="left:148.4px;top:211.4px;" width="13" height="12.4" viewBox="0 0 13 12.4"><rect x="0" y="0" width="10.2" height="9.6" fill="#f2f2f2"/><path d="M9.6 9.8H12.8L11.2 11.8Z" fill="#f2f2f2"/></svg><svg style="left:147.2px;top:229.4px;" width="14" height="12.4" viewBox="0 0 14 12.4"><path d="M6 0.6L7.5 4.4H11.6L8.3 6.8L9.6 10.8L6 8.4L2.4 10.8L3.7 6.8L0.4 4.4H4.5Z" fill="#f2f2f2"/><rect x="7.4" y="1.4" width="2.6" height="2.6" fill="#bfe0f7" stroke="#4a90d9" stroke-width="0.7"/><path d="M10.6 9.8H13.6L12.1 11.6Z" fill="#f2f2f2"/></svg><svg style="left:147.4px;top:248.2px;" width="12.4" height="12" viewBox="0 0 12.4 12"><path d="M5.8 6L11.4 6A5.6 5.6 0 1 1 5.8 0.4Z" fill="#f2f2f2"/><rect x="7.2" y="0.6" width="2.6" height="2.6" fill="#bfe0f7" stroke="#4a90d9" stroke-width="0.7"/></svg><svg style="left:147.4px;top:267px;" width="12.6" height="11.6" viewBox="0 0 12.6 11.6"><path d="M5.78 6.37L5.72 6.43L5.65 6.49L5.56 6.53L5.46 6.57L5.34 6.58L5.23 6.58L5.10 6.55L4.98 6.50L4.86 6.43L4.75 6.34L4.66 6.23L4.57 6.10L4.51 5.95L4.47 5.78L4.45 5.61L4.47 5.43L4.51 5.25L4.58 5.07L4.68 4.89L4.81 4.73L4.97 4.59L5.16 4.47L5.36 4.37L5.59 4.31L5.82 4.28L6.07 4.29L6.32 4.33L6.56 4.41L6.80 4.53L7.02 4.69L7.22 4.89L7.39 5.12L7.53 5.37L7.63 5.65L7.69 5.95L7.70 6.27L7.67 6.58L7.59 6.90L7.46 7.20L7.29 7.49L7.07 7.75L6.80 7.99L6.50 8.18L6.17 8.33L5.82 8.44L5.44 8.49L5.06 8.48L4.67 8.42L4.30 8.30L3.93 8.12L3.60 7.88L3.29 7.60L3.03 7.26L2.82 6.89L2.66 6.49L2.56 6.05L2.52 5.60L2.55 5.15L2.65 4.70L2.82 4.26L3.05 3.84L3.35 3.46L3.70 3.12L4.11 2.84L4.55 2.61L5.04 2.45L5.55 2.35L6.07 2.34L6.59 2.40L7.11 2.54L7.61 2.76L8.07 3.05L8.49 3.41L8.86 3.83L9.17 4.31L9.41 4.84L9.57 5.40L9.64 5.98L9.64 6.57L9.54 7.17L9.35 7.75L9.08 8.30L8.73 8.81L8.30 9.27L7.80 9.67L7.25 9.99L6.65 10.23L6.01 10.38L5.35 10.44L4.69 10.40L4.03 10.26L3.39 10.03L2.78 9.70L2.23 9.28L1.74 8.78L1.32 8.21L0.99 7.58L0.75 6.90L0.61 6.18" fill="none" stroke="#f2f2f2" stroke-width="1.15"/><rect x="9.2" y="3.6" width="2.8" height="2.8" fill="#bfe0f7" stroke="#4a90d9" stroke-width="0.7"/></svg><svg style="left:146px;top:284.8px;" width="14.4" height="14.4" viewBox="0 0 14.4 14.4"><path d="M2.4 11.8L11.8 2.4" stroke="#f2f2f2" stroke-width="1.5"/><rect x="0.5" y="10.8" width="2.8" height="2.8" fill="#bfe0f7" stroke="#4a90d9" stroke-width="0.7"/><rect x="10.8" y="0.6" width="2.8" height="2.8" fill="#bfe0f7" stroke="#4a90d9" stroke-width="0.7"/></svg><svg style="left:145.8px;top:304.4px;" width="14.6" height="13" viewBox="0 0 14.6 13"><path d="M1.8 1.4V10" stroke="#5cb85c" stroke-width="0.8" stroke-dasharray="1 1"/><rect x="0.6" y="4.2" width="2.2" height="2.2" fill="none" stroke="#5cb85c" stroke-width="0.7"/><rect x="0.6" y="9.4" width="2.2" height="2.2" fill="none" stroke="#5cb85c" stroke-width="0.7"/><path d="M2.6 9.6Q6 2.6 10.6 3.4" fill="none" stroke="#f2f2f2" stroke-width="0.7"/><path d="M5.2 11.4L6 7.2L10 4.4L13.4 7.6L10.4 11.2L6.4 12.2Z" fill="#f2f2f2"/><path d="M5.6 12L8.6 8.8" stroke="#2b2b2b" stroke-width="0.7"/><circle cx="9" cy="8.4" r="0.9" fill="#2b2b2b"/></svg><div style="left:165.5px;top:104.5px;width:700px;height:17px;background:#2b2b2b;"></div><div style="left:454.5px;top:104.5px;width:240.7px;height:17px;background:#3c4e64;"></div><div style="left:454.5px;top:104.2px;width:240.7px;height:1px;background:#8c9cb0;"></div><svg style="left:0;top:104.5px" width="760" height="17" viewBox="0 0 760 17"><rect x="183.61" y="14" width="1" height="3" fill="#f0f0f0"/><rect x="186.06" y="14" width="1" height="3" fill="#f0f0f0"/><rect x="188.52" y="14" width="1" height="3" fill="#f0f0f0"/><rect x="190.98" y="12" width="1" height="5" fill="#f0f0f0"/><rect x="193.43" y="14" width="1" height="3" fill="#f0f0f0"/><rect x="195.89" y="14" width="1" height="3" fill="#f0f0f0"/><rect x="198.34" y="14" width="1" height="3" fill="#f0f0f0"/><rect x="200.80" y="14" width="1" height="3" fill="#f0f0f0"/><rect x="203.25" y="9" width="1" height="8" fill="#f0f0f0"/><rect x="205.71" y="14" width="1" height="3" fill="#f0f0f0"/><rect x="208.16" y="14" width="1" height="3" fill="#f0f0f0"/><rect x="210.62" y="14" width="1" height="3" fill="#f0f0f0"/><rect x="213.07" y="14" width="1" height="3" fill="#f0f0f0"/><rect x="215.53" y="12" width="1" height="5" fill="#f0f0f0"/><rect x="217.98" y="14" width="1" height="3" fill="#f0f0f0"/><rect x="220.44" y="14" width="1" height="3" fill="#f0f0f0"/><rect x="222.89" y="14" width="1" height="3" fill="#f0f0f0"/><rect x="225.34" y="14" width="1" height="3" fill="#f0f0f0"/><rect x="227.80" y="9" width="1" height="8" fill="#f0f0f0"/><rect x="230.26" y="14" width="1" height="3" fill="#f0f0f0"/><rect x="232.71" y="14" width="1" height="3" fill="#f0f0f0"/><rect x="235.17" y="14" width="1" height="3" fill="#f0f0f0"/><rect x="237.62" y="14" width="1" height="3" fill="#f0f0f0"/><rect x="240.08" y="12" width="1" height="5" fill="#f0f0f0"/><rect x="242.53" y="14" width="1" height="3" fill="#f0f0f0"/><rect x="244.99" y="14" width="1" height="3" fill="#f0f0f0"/><rect x="247.44" y="14" width="1" height="3" fill="#f0f0f0"/><rect x="249.90" y="14" width="1" height="3" fill="#f0f0f0"/><rect x="252.35" y="9" width="1" height="8" fill="#f0f0f0"/><rect x="254.81" y="14" width="1" height="3" fill="#f0f0f0"/><rect x="257.26" y="14" width="1" height="3" fill="#f0f0f0"/><rect x="259.72" y="14" width="1" height="3" fill="#f0f0f0"/><rect x="262.17" y="14" width="1" height="3" fill="#f0f0f0"/><rect x="264.62" y="12" width="1" height="5" fill="#f0f0f0"/><rect x="267.08" y="14" width="1" height="3" fill="#f0f0f0"/><rect x="269.54" y="14" width="1" height="3" fill="#f0f0f0"/><rect x="271.99" y="14" width="1" height="3" fill="#f0f0f0"/><rect x="274.44" y="14" width="1" height="3" fill="#f0f0f0"/><rect x="276.90" y="9" width="1" height="8" fill="#f0f0f0"/><rect x="279.36" y="14" width="1" height="3" fill="#f0f0f0"/><rect x="281.81" y="14" width="1" height="3" fill="#f0f0f0"/><rect x="284.26" y="14" width="1" height="3" fill="#f0f0f0"/><rect x="286.72" y="14" width="1" height="3" fill="#f0f0f0"/><rect x="289.18" y="12" width="1" height="5" fill="#f0f0f0"/><rect x="291.63" y="14" width="1" height="3" fill="#f0f0f0"/><rect x="294.09" y="14" width="1" height="3" fill="#f0f0f0"/><rect x="296.54" y="14" width="1" height="3" fill="#f0f0f0"/><rect x="299.00" y="14" width="1" height="3" fill="#f0f0f0"/><rect x="301.45" y="9" width="1" height="8" fill="#f0f0f0"/><rect x="303.91" y="14" width="1" height="3" fill="#f0f0f0"/><rect x="306.36" y="14" width="1" height="3" fill="#f0f0f0"/><rect x="308.81" y="14" width="1" height="3" fill="#f0f0f0"/><rect x="311.27" y="14" width="1" height="3" fill="#f0f0f0"/><rect x="313.73" y="12" width="1" height="5" fill="#f0f0f0"/><rect x="316.18" y="14" width="1" height="3" fill="#f0f0f0"/><rect x="318.63" y="14" width="1" height="3" fill="#f0f0f0"/><rect x="321.09" y="14" width="1" height="3" fill="#f0f0f0"/><rect x="323.55" y="14" width="1" height="3" fill="#f0f0f0"/><rect x="326.00" y="9" width="1" height="8" fill="#f0f0f0"/><rect x="328.46" y="14" width="1" height="3" fill="#f0f0f0"/><rect x="330.91" y="14" width="1" height="3" fill="#f0f0f0"/><rect x="333.37" y="14" width="1" height="3" fill="#f0f0f0"/><rect x="335.82" y="14" width="1" height="3" fill="#f0f0f0"/><rect x="338.28" y="12" width="1" height="5" fill="#f0f0f0"/><rect x="340.73" y="14" width="1" height="3" fill="#f0f0f0"/><rect x="343.19" y="14" width="1" height="3" fill="#f0f0f0"/><rect x="345.64" y="14" width="1" height="3" fill="#f0f0f0"/><rect x="348.10" y="14" width="1" height="3" fill="#f0f0f0"/><rect x="350.55" y="9" width="1" height="8" fill="#f0f0f0"/><rect x="353.00" y="14" width="1" height="3" fill="#f0f0f0"/><rect x="355.46" y="14" width="1" height="3" fill="#f0f0f0"/><rect x="357.92" y="14" width="1" height="3" fill="#f0f0f0"/><rect x="360.37" y="14" width="1" height="3" fill="#f0f0f0"/><rect x="362.83" y="12" width="1" height="5" fill="#f0f0f0"/><rect x="365.28" y="14" width="1" height="3" fill="#f0f0f0"/><rect x="367.74" y="14" width="1" height="3" fill="#f0f0f0"/><rect x="370.19" y="14" width="1" height="3" fill="#f0f0f0"/><rect x="372.64" y="14" width="1" height="3" fill="#f0f0f0"/><rect x="375.10" y="9" width="1" height="8" fill="#f0f0f0"/><rect x="377.56" y="14" width="1" height="3" fill="#f0f0f0"/><rect x="380.01" y="14" width="1" height="3" fill="#f0f0f0"/><rect x="382.47" y="14" width="1" height="3" fill="#f0f0f0"/><rect x="384.92" y="14" width="1" height="3" fill="#f0f0f0"/><rect x="387.38" y="12" width="1" height="5" fill="#f0f0f0"/><rect x="389.83" y="14" width="1" height="3" fill="#f0f0f0"/><rect x="392.29" y="14" width="1" height="3" fill="#f0f0f0"/><rect x="394.74" y="14" width="1" height="3" fill="#f0f0f0"/><rect x="397.20" y="14" width="1" height="3" fill="#f0f0f0"/><rect x="399.65" y="9" width="1" height="8" fill="#f0f0f0"/><rect x="402.11" y="14" width="1" height="3" fill="#f0f0f0"/><rect x="404.56" y="14" width="1" height="3" fill="#f0f0f0"/><rect x="407.01" y="14" width="1" height="3" fill="#f0f0f0"/><rect x="409.47" y="14" width="1" height="3" fill="#f0f0f0"/><rect x="411.93" y="12" width="1" height="5" fill="#f0f0f0"/><rect x="414.38" y="14" width="1" height="3" fill="#f0f0f0"/><rect x="416.84" y="14" width="1" height="3" fill="#f0f0f0"/><rect x="419.29" y="14" width="1" height="3" fill="#f0f0f0"/><rect x="421.75" y="14" width="1" height="3" fill="#f0f0f0"/><rect x="424.20" y="9" width="1" height="8" fill="#f0f0f0"/><rect x="426.66" y="14" width="1" height="3" fill="#f0f0f0"/><rect x="429.11" y="14" width="1" height="3" fill="#f0f0f0"/><rect x="431.57" y="14" width="1" height="3" fill="#f0f0f0"/><rect x="434.02" y="14" width="1" height="3" fill="#f0f0f0"/><rect x="436.48" y="12" width="1" height="5" fill="#f0f0f0"/><rect x="438.93" y="14" width="1" height="3" fill="#f0f0f0"/><rect x="441.38" y="14" width="1" height="3" fill="#f0f0f0"/><rect x="443.84" y="14" width="1" height="3" fill="#f0f0f0"/><rect x="446.30" y="14" width="1" height="3" fill="#f0f0f0"/><rect x="448.75" y="9" width="1" height="8" fill="#f0f0f0"/><rect x="451.21" y="14" width="1" height="3" fill="#f0f0f0"/><rect x="454.00" y="9" width="1" height="8" fill="#6f9fd0"/><rect x="456.45" y="14" width="1" height="3" fill="#6f9fd0"/><rect x="458.91" y="14" width="1" height="3" fill="#6f9fd0"/><rect x="461.37" y="14" width="1" height="3" fill="#6f9fd0"/><rect x="463.82" y="14" width="1" height="3" fill="#6f9fd0"/><rect x="466.27" y="12" width="1" height="5" fill="#6f9fd0"/><rect x="468.73" y="14" width="1" height="3" fill="#6f9fd0"/><rect x="471.19" y="14" width="1" height="3" fill="#6f9fd0"/><rect x="473.64" y="14" width="1" height="3" fill="#6f9fd0"/><rect x="476.10" y="14" width="1" height="3" fill="#6f9fd0"/><rect x="478.55" y="9" width="1" height="8" fill="#6f9fd0"/><rect x="481.00" y="14" width="1" height="3" fill="#6f9fd0"/><rect x="483.46" y="14" width="1" height="3" fill="#6f9fd0"/><rect x="485.92" y="14" width="1" height="3" fill="#6f9fd0"/><rect x="488.37" y="14" width="1" height="3" fill="#6f9fd0"/><rect x="490.82" y="12" width="1" height="5" fill="#6f9fd0"/><rect x="493.28" y="14" width="1" height="3" fill="#6f9fd0"/><rect x="495.74" y="14" width="1" height="3" fill="#6f9fd0"/><rect x="498.19" y="14" width="1" height="3" fill="#6f9fd0"/><rect x="500.64" y="14" width="1" height="3" fill="#6f9fd0"/><rect x="503.10" y="9" width="1" height="8" fill="#6f9fd0"/><rect x="505.56" y="14" width="1" height="3" fill="#6f9fd0"/><rect x="508.01" y="14" width="1" height="3" fill="#6f9fd0"/><rect x="510.47" y="14" width="1" height="3" fill="#6f9fd0"/><rect x="512.92" y="14" width="1" height="3" fill="#6f9fd0"/><rect x="515.38" y="12" width="1" height="5" fill="#6f9fd0"/><rect x="517.83" y="14" width="1" height="3" fill="#6f9fd0"/><rect x="520.28" y="14" width="1" height="3" fill="#6f9fd0"/><rect x="522.74" y="14" width="1" height="3" fill="#6f9fd0"/><rect x="525.20" y="14" width="1" height="3" fill="#6f9fd0"/><rect x="527.65" y="9" width="1" height="8" fill="#6f9fd0"/><rect x="530.11" y="14" width="1" height="3" fill="#6f9fd0"/><rect x="532.56" y="14" width="1" height="3" fill="#6f9fd0"/><rect x="535.01" y="14" width="1" height="3" fill="#6f9fd0"/><rect x="537.47" y="14" width="1" height="3" fill="#6f9fd0"/><rect x="539.92" y="12" width="1" height="5" fill="#6f9fd0"/><rect x="542.38" y="14" width="1" height="3" fill="#6f9fd0"/><rect x="544.84" y="14" width="1" height="3" fill="#6f9fd0"/><rect x="547.29" y="14" width="1" height="3" fill="#6f9fd0"/><rect x="549.75" y="14" width="1" height="3" fill="#6f9fd0"/><rect x="552.20" y="9" width="1" height="8" fill="#6f9fd0"/><rect x="554.65" y="14" width="1" height="3" fill="#6f9fd0"/><rect x="557.11" y="14" width="1" height="3" fill="#6f9fd0"/><rect x="559.57" y="14" width="1" height="3" fill="#6f9fd0"/><rect x="562.02" y="14" width="1" height="3" fill="#6f9fd0"/><rect x="564.48" y="12" width="1" height="5" fill="#6f9fd0"/><rect x="566.93" y="14" width="1" height="3" fill="#6f9fd0"/><rect x="569.38" y="14" width="1" height="3" fill="#6f9fd0"/><rect x="571.84" y="14" width="1" height="3" fill="#6f9fd0"/><rect x="574.29" y="14" width="1" height="3" fill="#6f9fd0"/><rect x="576.75" y="9" width="1" height="8" fill="#6f9fd0"/><rect x="579.21" y="14" width="1" height="3" fill="#6f9fd0"/><rect x="581.66" y="14" width="1" height="3" fill="#6f9fd0"/><rect x="584.12" y="14" width="1" height="3" fill="#6f9fd0"/><rect x="586.57" y="14" width="1" height="3" fill="#6f9fd0"/><rect x="589.02" y="12" width="1" height="5" fill="#6f9fd0"/><rect x="591.48" y="14" width="1" height="3" fill="#6f9fd0"/><rect x="593.93" y="14" width="1" height="3" fill="#6f9fd0"/><rect x="596.39" y="14" width="1" height="3" fill="#6f9fd0"/><rect x="598.85" y="14" width="1" height="3" fill="#6f9fd0"/><rect x="601.30" y="9" width="1" height="8" fill="#6f9fd0"/><rect x="603.75" y="14" width="1" height="3" fill="#6f9fd0"/><rect x="606.21" y="14" width="1" height="3" fill="#6f9fd0"/><rect x="608.66" y="14" width="1" height="3" fill="#6f9fd0"/><rect x="611.12" y="14" width="1" height="3" fill="#6f9fd0"/><rect x="613.58" y="12" width="1" height="5" fill="#6f9fd0"/><rect x="616.03" y="14" width="1" height="3" fill="#6f9fd0"/><rect x="618.49" y="14" width="1" height="3" fill="#6f9fd0"/><rect x="620.94" y="14" width="1" height="3" fill="#6f9fd0"/><rect x="623.39" y="14" width="1" height="3" fill="#6f9fd0"/><rect x="625.85" y="9" width="1" height="8" fill="#6f9fd0"/><rect x="628.31" y="14" width="1" height="3" fill="#6f9fd0"/><rect x="630.76" y="14" width="1" height="3" fill="#6f9fd0"/><rect x="633.22" y="14" width="1" height="3" fill="#6f9fd0"/><rect x="635.67" y="14" width="1" height="3" fill="#6f9fd0"/><rect x="638.12" y="12" width="1" height="5" fill="#6f9fd0"/><rect x="640.58" y="14" width="1" height="3" fill="#6f9fd0"/><rect x="643.03" y="14" width="1" height="3" fill="#6f9fd0"/><rect x="645.49" y="14" width="1" height="3" fill="#6f9fd0"/><rect x="647.94" y="14" width="1" height="3" fill="#6f9fd0"/><rect x="650.40" y="9" width="1" height="8" fill="#6f9fd0"/><rect x="652.86" y="14" width="1" height="3" fill="#6f9fd0"/><rect x="655.31" y="14" width="1" height="3" fill="#6f9fd0"/><rect x="657.76" y="14" width="1" height="3" fill="#6f9fd0"/><rect x="660.22" y="14" width="1" height="3" fill="#6f9fd0"/><rect x="662.67" y="12" width="1" height="5" fill="#6f9fd0"/><rect x="665.13" y="14" width="1" height="3" fill="#6f9fd0"/><rect x="667.59" y="14" width="1" height="3" fill="#6f9fd0"/><rect x="670.04" y="14" width="1" height="3" fill="#6f9fd0"/><rect x="672.50" y="14" width="1" height="3" fill="#6f9fd0"/><rect x="674.95" y="9" width="1" height="8" fill="#6f9fd0"/><rect x="677.40" y="14" width="1" height="3" fill="#6f9fd0"/><rect x="679.86" y="14" width="1" height="3" fill="#6f9fd0"/><rect x="682.32" y="14" width="1" height="3" fill="#6f9fd0"/><rect x="684.77" y="14" width="1" height="3" fill="#6f9fd0"/><rect x="687.23" y="12" width="1" height="5" fill="#6f9fd0"/><rect x="689.68" y="14" width="1" height="3" fill="#6f9fd0"/><rect x="692.13" y="14" width="1" height="3" fill="#6f9fd0"/><rect x="694.59" y="14" width="1" height="3" fill="#6f9fd0"/><rect x="696.71" y="14" width="1" height="3" fill="#f0f0f0"/><rect x="699.16" y="14" width="1" height="3" fill="#f0f0f0"/><rect x="701.62" y="14" width="1" height="3" fill="#f0f0f0"/><rect x="704.07" y="14" width="1" height="3" fill="#f0f0f0"/><rect x="706.53" y="12" width="1" height="5" fill="#f0f0f0"/><rect x="708.98" y="14" width="1" height="3" fill="#f0f0f0"/><rect x="711.43" y="14" width="1" height="3" fill="#f0f0f0"/><rect x="713.89" y="14" width="1" height="3" fill="#f0f0f0"/><rect x="716.35" y="14" width="1" height="3" fill="#f0f0f0"/><rect x="718.80" y="9" width="1" height="8" fill="#f0f0f0"/><rect x="721.26" y="14" width="1" height="3" fill="#f0f0f0"/><rect x="723.71" y="14" width="1" height="3" fill="#f0f0f0"/><rect x="726.16" y="14" width="1" height="3" fill="#f0f0f0"/><rect x="728.62" y="14" width="1" height="3" fill="#f0f0f0"/><rect x="731.08" y="12" width="1" height="5" fill="#f0f0f0"/><rect x="733.53" y="14" width="1" height="3" fill="#f0f0f0"/><rect x="735.99" y="14" width="1" height="3" fill="#f0f0f0"/><rect x="738.44" y="14" width="1" height="3" fill="#f0f0f0"/><rect x="740.89" y="14" width="1" height="3" fill="#f0f0f0"/></svg><div class="t" style="left:204.75px;top:106.90px;line-height:8px;font-size:5.9px;color:#e8e8e8;">-10</div><div class="t" style="left:229.30px;top:106.90px;line-height:8px;font-size:5.9px;color:#e8e8e8;">0</div><div class="t" style="left:253.85px;top:106.90px;line-height:8px;font-size:5.9px;color:#e8e8e8;">10</div><div class="t" style="left:278.40px;top:106.90px;line-height:8px;font-size:5.9px;color:#e8e8e8;">20</div><div class="t" style="left:302.95px;top:106.90px;line-height:8px;font-size:5.9px;color:#e8e8e8;">30</div><div class="t" style="left:327.50px;top:106.90px;line-height:8px;font-size:5.9px;color:#e8e8e8;">40</div><div class="t" style="left:352.05px;top:106.90px;line-height:8px;font-size:5.9px;color:#e8e8e8;">50</div><div class="t" style="left:376.60px;top:106.90px;line-height:8px;font-size:5.9px;color:#e8e8e8;">60</div><div class="t" style="left:401.15px;top:106.90px;line-height:8px;font-size:5.9px;color:#e8e8e8;">70</div><div class="t" style="left:425.70px;top:106.90px;line-height:8px;font-size:5.9px;color:#e8e8e8;">80</div><div class="t" style="left:450.25px;top:106.90px;line-height:8px;font-size:5.9px;color:#e8e8e8;">90</div><div class="t" style="left:480.05px;top:106.90px;line-height:8px;font-size:5.9px;color:#6f9fd0;">10</div><div class="t" style="left:504.60px;top:106.90px;line-height:8px;font-size:5.9px;color:#6f9fd0;">20</div><div class="t" style="left:529.15px;top:106.90px;line-height:8px;font-size:5.9px;color:#6f9fd0;">30</div><div class="t" style="left:553.70px;top:106.90px;line-height:8px;font-size:5.9px;color:#6f9fd0;">40</div><div class="t" style="left:578.25px;top:106.90px;line-height:8px;font-size:5.9px;color:#6f9fd0;">50</div><div class="t" style="left:602.80px;top:106.90px;line-height:8px;font-size:5.9px;color:#6f9fd0;">60</div><div class="t" style="left:627.35px;top:106.90px;line-height:8px;font-size:5.9px;color:#6f9fd0;">70</div><div class="t" style="left:651.90px;top:106.90px;line-height:8px;font-size:5.9px;color:#6f9fd0;">80</div><div class="t" style="left:676.45px;top:106.90px;line-height:8px;font-size:5.9px;color:#6f9fd0;">90</div><div class="t" style="left:695.75px;top:106.90px;line-height:8px;font-size:5.9px;color:#e8e8e8;">190</div><div class="t" style="left:720.30px;top:106.90px;line-height:8px;font-size:5.9px;color:#e8e8e8;">200</div><svg style="left:454.5px;top:104.5px" width="22" height="17"><path d="M0 0.5H5" stroke="#6f9fd0" stroke-width="1.4"/><path d="M0.5 0V17" stroke="#6f9fd0" stroke-width="1"/><rect x="6.5" y="4.4" width="6" height="4.2" fill="#f0f0f0"/><path d="M6.5 8H7.6V16.5H6.5Z" fill="#f0f0f0"/><path d="M14 16.2L19.6 10V16.2Z" fill="#f0f0f0"/></svg><svg style="left:687.2px;top:104.5px" width="9" height="17"><path d="M3 0H8" stroke="#6f9fd0" stroke-width="2"/><path d="M7.5 0V17" stroke="#6f9fd0" stroke-width="1"/><path d="M2 10.5H7.5V16Z" fill="#fff"/></svg><svg style="left:270.6px;top:104.5px" width="6" height="17"><path d="M0.8 0H5.2L3 4Z" fill="#e05050"/><path d="M3 3V17" stroke="#e88" stroke-width="1"/></svg><svg style="left:557px;top:104.5px" width="6" height="17"><path d="M3 0V17" stroke="#e06060" stroke-width="1"/></svg><div style="left:165.5px;top:121.5px;width:16.5px;height:460px;background:#2b2b2b;"></div><svg style="left:165.5px;top:121.5px" width="16.5" height="460"><rect x="13.5" y="-0.11" width="3" height="1" fill="#f0f0f0"/><rect x="13.5" y="2.34" width="3" height="1" fill="#f0f0f0"/><rect x="8.5" y="4.80" width="8" height="1" fill="#f0f0f0"/><rect x="13.5" y="7.25" width="3" height="1" fill="#f0f0f0"/><rect x="13.5" y="9.71" width="3" height="1" fill="#f0f0f0"/><rect x="13.5" y="12.17" width="3" height="1" fill="#f0f0f0"/><rect x="13.5" y="14.62" width="3" height="1" fill="#f0f0f0"/><rect x="11.5" y="17.07" width="5" height="1" fill="#f0f0f0"/><rect x="13.5" y="19.53" width="3" height="1" fill="#f0f0f0"/><rect x="13.5" y="21.99" width="3" height="1" fill="#f0f0f0"/><rect x="13.5" y="24.44" width="3" height="1" fill="#f0f0f0"/><rect x="13.5" y="26.90" width="3" height="1" fill="#f0f0f0"/><rect x="8.5" y="29.35" width="8" height="1" fill="#f0f0f0"/><rect x="13.5" y="31.81" width="3" height="1" fill="#f0f0f0"/><rect x="13.5" y="34.26" width="3" height="1" fill="#f0f0f0"/><rect x="13.5" y="36.72" width="3" height="1" fill="#f0f0f0"/><rect x="13.5" y="39.17" width="3" height="1" fill="#f0f0f0"/><rect x="11.5" y="41.62" width="5" height="1" fill="#f0f0f0"/><rect x="13.5" y="44.08" width="3" height="1" fill="#f0f0f0"/><rect x="13.5" y="46.54" width="3" height="1" fill="#f0f0f0"/><rect x="13.5" y="48.99" width="3" height="1" fill="#f0f0f0"/><rect x="13.5" y="51.44" width="3" height="1" fill="#f0f0f0"/><rect x="8.5" y="53.90" width="8" height="1" fill="#f0f0f0"/><rect x="13.5" y="56.36" width="3" height="1" fill="#f0f0f0"/><rect x="13.5" y="58.81" width="3" height="1" fill="#f0f0f0"/><rect x="13.5" y="61.26" width="3" height="1" fill="#f0f0f0"/><rect x="13.5" y="63.72" width="3" height="1" fill="#f0f0f0"/><rect x="11.5" y="66.18" width="5" height="1" fill="#f0f0f0"/><rect x="13.5" y="68.63" width="3" height="1" fill="#f0f0f0"/><rect x="13.5" y="71.09" width="3" height="1" fill="#f0f0f0"/><rect x="13.5" y="73.54" width="3" height="1" fill="#f0f0f0"/><rect x="13.5" y="76.00" width="3" height="1" fill="#f0f0f0"/><rect x="8.5" y="78.45" width="8" height="1" fill="#f0f0f0"/><rect x="13.5" y="80.91" width="3" height="1" fill="#f0f0f0"/><rect x="13.5" y="83.36" width="3" height="1" fill="#f0f0f0"/><rect x="13.5" y="85.81" width="3" height="1" fill="#f0f0f0"/><rect x="13.5" y="88.27" width="3" height="1" fill="#f0f0f0"/><rect x="11.5" y="90.73" width="5" height="1" fill="#f0f0f0"/><rect x="13.5" y="93.18" width="3" height="1" fill="#f0f0f0"/><rect x="13.5" y="95.63" width="3" height="1" fill="#f0f0f0"/><rect x="13.5" y="98.09" width="3" height="1" fill="#f0f0f0"/><rect x="13.5" y="100.55" width="3" height="1" fill="#f0f0f0"/><rect x="8.5" y="103.00" width="8" height="1" fill="#f0f0f0"/><rect x="13.5" y="105.45" width="3" height="1" fill="#f0f0f0"/><rect x="13.5" y="107.91" width="3" height="1" fill="#f0f0f0"/><rect x="13.5" y="110.37" width="3" height="1" fill="#f0f0f0"/><rect x="13.5" y="112.82" width="3" height="1" fill="#f0f0f0"/><rect x="11.5" y="115.28" width="5" height="1" fill="#f0f0f0"/><rect x="13.5" y="117.73" width="3" height="1" fill="#f0f0f0"/><rect x="13.5" y="120.19" width="3" height="1" fill="#f0f0f0"/><rect x="13.5" y="122.64" width="3" height="1" fill="#f0f0f0"/><rect x="13.5" y="125.10" width="3" height="1" fill="#f0f0f0"/><rect x="8.5" y="127.55" width="8" height="1" fill="#f0f0f0"/><rect x="13.5" y="130.00" width="3" height="1" fill="#f0f0f0"/><rect x="13.5" y="132.46" width="3" height="1" fill="#f0f0f0"/><rect x="13.5" y="134.92" width="3" height="1" fill="#f0f0f0"/><rect x="13.5" y="137.37" width="3" height="1" fill="#f0f0f0"/><rect x="11.5" y="139.82" width="5" height="1" fill="#f0f0f0"/><rect x="13.5" y="142.28" width="3" height="1" fill="#f0f0f0"/><rect x="13.5" y="144.74" width="3" height="1" fill="#f0f0f0"/><rect x="13.5" y="147.19" width="3" height="1" fill="#f0f0f0"/><rect x="13.5" y="149.64" width="3" height="1" fill="#f0f0f0"/><rect x="8.5" y="152.10" width="8" height="1" fill="#f0f0f0"/><rect x="13.5" y="154.56" width="3" height="1" fill="#f0f0f0"/><rect x="13.5" y="157.01" width="3" height="1" fill="#f0f0f0"/><rect x="13.5" y="159.47" width="3" height="1" fill="#f0f0f0"/><rect x="13.5" y="161.92" width="3" height="1" fill="#f0f0f0"/><rect x="11.5" y="164.38" width="5" height="1" fill="#f0f0f0"/><rect x="13.5" y="166.83" width="3" height="1" fill="#f0f0f0"/><rect x="13.5" y="169.29" width="3" height="1" fill="#f0f0f0"/><rect x="13.5" y="171.74" width="3" height="1" fill="#f0f0f0"/><rect x="13.5" y="174.19" width="3" height="1" fill="#f0f0f0"/><rect x="8.5" y="176.65" width="8" height="1" fill="#f0f0f0"/><rect x="13.5" y="179.11" width="3" height="1" fill="#f0f0f0"/><rect x="13.5" y="181.56" width="3" height="1" fill="#f0f0f0"/><rect x="13.5" y="184.01" width="3" height="1" fill="#f0f0f0"/><rect x="13.5" y="186.47" width="3" height="1" fill="#f0f0f0"/><rect x="11.5" y="188.93" width="5" height="1" fill="#f0f0f0"/><rect x="13.5" y="191.38" width="3" height="1" fill="#f0f0f0"/><rect x="13.5" y="193.84" width="3" height="1" fill="#f0f0f0"/><rect x="13.5" y="196.29" width="3" height="1" fill="#f0f0f0"/><rect x="13.5" y="198.75" width="3" height="1" fill="#f0f0f0"/><rect x="8.5" y="201.20" width="8" height="1" fill="#f0f0f0"/><rect x="13.5" y="203.66" width="3" height="1" fill="#f0f0f0"/><rect x="13.5" y="206.11" width="3" height="1" fill="#f0f0f0"/><rect x="13.5" y="208.56" width="3" height="1" fill="#f0f0f0"/><rect x="13.5" y="211.02" width="3" height="1" fill="#f0f0f0"/><rect x="11.5" y="213.48" width="5" height="1" fill="#f0f0f0"/><rect x="13.5" y="215.93" width="3" height="1" fill="#f0f0f0"/><rect x="13.5" y="218.38" width="3" height="1" fill="#f0f0f0"/><rect x="13.5" y="220.84" width="3" height="1" fill="#f0f0f0"/><rect x="13.5" y="223.30" width="3" height="1" fill="#f0f0f0"/><rect x="8.5" y="225.75" width="8" height="1" fill="#f0f0f0"/><rect x="13.5" y="228.20" width="3" height="1" fill="#f0f0f0"/><rect x="13.5" y="230.66" width="3" height="1" fill="#f0f0f0"/><rect x="13.5" y="233.12" width="3" height="1" fill="#f0f0f0"/><rect x="13.5" y="235.57" width="3" height="1" fill="#f0f0f0"/><rect x="11.5" y="238.02" width="5" height="1" fill="#f0f0f0"/><rect x="13.5" y="240.48" width="3" height="1" fill="#f0f0f0"/><rect x="13.5" y="242.94" width="3" height="1" fill="#f0f0f0"/><rect x="13.5" y="245.39" width="3" height="1" fill="#f0f0f0"/><rect x="13.5" y="247.84" width="3" height="1" fill="#f0f0f0"/><rect x="8.5" y="250.30" width="8" height="1" fill="#f0f0f0"/><rect x="13.5" y="252.75" width="3" height="1" fill="#f0f0f0"/><rect x="13.5" y="255.21" width="3" height="1" fill="#f0f0f0"/><rect x="13.5" y="257.67" width="3" height="1" fill="#f0f0f0"/><rect x="13.5" y="260.12" width="3" height="1" fill="#f0f0f0"/><rect x="11.5" y="262.57" width="5" height="1" fill="#f0f0f0"/><rect x="13.5" y="265.03" width="3" height="1" fill="#f0f0f0"/><rect x="13.5" y="267.49" width="3" height="1" fill="#f0f0f0"/><rect x="13.5" y="269.94" width="3" height="1" fill="#f0f0f0"/><rect x="13.5" y="272.39" width="3" height="1" fill="#f0f0f0"/><rect x="8.5" y="274.85" width="8" height="1" fill="#f0f0f0"/><rect x="13.5" y="277.31" width="3" height="1" fill="#f0f0f0"/><rect x="13.5" y="279.76" width="3" height="1" fill="#f0f0f0"/><rect x="13.5" y="282.21" width="3" height="1" fill="#f0f0f0"/><rect x="13.5" y="284.67" width="3" height="1" fill="#f0f0f0"/><rect x="11.5" y="287.12" width="5" height="1" fill="#f0f0f0"/><rect x="13.5" y="289.58" width="3" height="1" fill="#f0f0f0"/><rect x="13.5" y="292.04" width="3" height="1" fill="#f0f0f0"/><rect x="13.5" y="294.49" width="3" height="1" fill="#f0f0f0"/><rect x="13.5" y="296.94" width="3" height="1" fill="#f0f0f0"/><rect x="8.5" y="299.40" width="8" height="1" fill="#f0f0f0"/><rect x="13.5" y="301.86" width="3" height="1" fill="#f0f0f0"/><rect x="13.5" y="304.31" width="3" height="1" fill="#f0f0f0"/><rect x="13.5" y="306.76" width="3" height="1" fill="#f0f0f0"/><rect x="13.5" y="309.22" width="3" height="1" fill="#f0f0f0"/><rect x="11.5" y="311.68" width="5" height="1" fill="#f0f0f0"/><rect x="13.5" y="314.13" width="3" height="1" fill="#f0f0f0"/><rect x="13.5" y="316.58" width="3" height="1" fill="#f0f0f0"/><rect x="13.5" y="319.04" width="3" height="1" fill="#f0f0f0"/><rect x="13.5" y="321.50" width="3" height="1" fill="#f0f0f0"/><rect x="8.5" y="323.95" width="8" height="1" fill="#f0f0f0"/><rect x="13.5" y="326.40" width="3" height="1" fill="#f0f0f0"/><rect x="13.5" y="328.86" width="3" height="1" fill="#f0f0f0"/><rect x="13.5" y="331.31" width="3" height="1" fill="#f0f0f0"/><rect x="13.5" y="333.77" width="3" height="1" fill="#f0f0f0"/><rect x="11.5" y="336.23" width="5" height="1" fill="#f0f0f0"/><rect x="13.5" y="338.68" width="3" height="1" fill="#f0f0f0"/><rect x="13.5" y="341.13" width="3" height="1" fill="#f0f0f0"/><rect x="13.5" y="343.59" width="3" height="1" fill="#f0f0f0"/><rect x="13.5" y="346.05" width="3" height="1" fill="#f0f0f0"/><rect x="8.5" y="348.50" width="8" height="1" fill="#f0f0f0"/><rect x="13.5" y="350.95" width="3" height="1" fill="#f0f0f0"/><rect x="13.5" y="353.41" width="3" height="1" fill="#f0f0f0"/><rect x="13.5" y="355.87" width="3" height="1" fill="#f0f0f0"/><rect x="13.5" y="358.32" width="3" height="1" fill="#f0f0f0"/><rect x="11.5" y="360.77" width="5" height="1" fill="#f0f0f0"/><rect x="13.5" y="363.23" width="3" height="1" fill="#f0f0f0"/><rect x="13.5" y="365.69" width="3" height="1" fill="#f0f0f0"/><rect x="13.5" y="368.14" width="3" height="1" fill="#f0f0f0"/><rect x="13.5" y="370.60" width="3" height="1" fill="#f0f0f0"/><rect x="8.5" y="373.05" width="8" height="1" fill="#f0f0f0"/><rect x="13.5" y="375.50" width="3" height="1" fill="#f0f0f0"/><rect x="13.5" y="377.96" width="3" height="1" fill="#f0f0f0"/><rect x="13.5" y="380.42" width="3" height="1" fill="#f0f0f0"/><rect x="13.5" y="382.87" width="3" height="1" fill="#f0f0f0"/><rect x="11.5" y="385.32" width="5" height="1" fill="#f0f0f0"/><rect x="13.5" y="387.78" width="3" height="1" fill="#f0f0f0"/><rect x="13.5" y="390.24" width="3" height="1" fill="#f0f0f0"/><rect x="13.5" y="392.69" width="3" height="1" fill="#f0f0f0"/><rect x="13.5" y="395.14" width="3" height="1" fill="#f0f0f0"/><rect x="8.5" y="397.60" width="8" height="1" fill="#f0f0f0"/><rect x="13.5" y="400.06" width="3" height="1" fill="#f0f0f0"/><rect x="13.5" y="402.51" width="3" height="1" fill="#f0f0f0"/><rect x="13.5" y="404.97" width="3" height="1" fill="#f0f0f0"/><rect x="13.5" y="407.42" width="3" height="1" fill="#f0f0f0"/><rect x="11.5" y="409.88" width="5" height="1" fill="#f0f0f0"/><rect x="13.5" y="412.33" width="3" height="1" fill="#f0f0f0"/><rect x="13.5" y="414.79" width="3" height="1" fill="#f0f0f0"/><rect x="13.5" y="417.24" width="3" height="1" fill="#f0f0f0"/><rect x="13.5" y="419.70" width="3" height="1" fill="#f0f0f0"/><rect x="8.5" y="422.15" width="8" height="1" fill="#f0f0f0"/><rect x="13.5" y="424.61" width="3" height="1" fill="#f0f0f0"/><rect x="13.5" y="427.06" width="3" height="1" fill="#f0f0f0"/><rect x="13.5" y="429.51" width="3" height="1" fill="#f0f0f0"/><rect x="13.5" y="431.97" width="3" height="1" fill="#f0f0f0"/><rect x="11.5" y="434.43" width="5" height="1" fill="#f0f0f0"/><rect x="13.5" y="436.88" width="3" height="1" fill="#f0f0f0"/><rect x="13.5" y="439.34" width="3" height="1" fill="#f0f0f0"/><rect x="13.5" y="441.79" width="3" height="1" fill="#f0f0f0"/><rect x="13.5" y="444.25" width="3" height="1" fill="#f0f0f0"/><rect x="8.5" y="446.70" width="8" height="1" fill="#f0f0f0"/><rect x="13.5" y="449.16" width="3" height="1" fill="#f0f0f0"/><rect x="13.5" y="451.61" width="3" height="1" fill="#f0f0f0"/><rect x="13.5" y="454.07" width="3" height="1" fill="#f0f0f0"/><rect x="13.5" y="456.52" width="3" height="1" fill="#f0f0f0"/><rect x="11.5" y="458.98" width="5" height="1" fill="#f0f0f0"/><rect x="13.5" y="461.43" width="3" height="1" fill="#f0f0f0"/><rect x="13.5" y="463.88" width="3" height="1" fill="#f0f0f0"/><rect x="13.5" y="466.34" width="3" height="1" fill="#f0f0f0"/><rect x="13.5" y="468.80" width="3" height="1" fill="#f0f0f0"/></svg><div class="t" style="left:166.5px;top:128.60px;font-size:5.6px;letter-spacing:1.6px;line-height:6px;color:#7088b0;transform-origin:0 0;transform:translate(10px,0) rotate(90deg);">20</div><div class="t" style="left:166.5px;top:153.15px;font-size:5.6px;letter-spacing:1.6px;line-height:6px;color:#7088b0;transform-origin:0 0;transform:translate(10px,0) rotate(90deg);">30</div><div class="t" style="left:166.5px;top:177.70px;font-size:5.6px;letter-spacing:1.6px;line-height:6px;color:#7088b0;transform-origin:0 0;transform:translate(10px,0) rotate(90deg);">40</div><div class="t" style="left:166.5px;top:202.25px;font-size:5.6px;letter-spacing:1.6px;line-height:6px;color:#7088b0;transform-origin:0 0;transform:translate(10px,0) rotate(90deg);">50</div><div class="t" style="left:166.5px;top:226.80px;font-size:5.6px;letter-spacing:1.6px;line-height:6px;color:#7088b0;transform-origin:0 0;transform:translate(10px,0) rotate(90deg);">60</div><div class="t" style="left:166.5px;top:251.35px;font-size:5.6px;letter-spacing:1.6px;line-height:6px;color:#7088b0;transform-origin:0 0;transform:translate(10px,0) rotate(90deg);">70</div><div class="t" style="left:166.5px;top:275.90px;font-size:5.6px;letter-spacing:1.6px;line-height:6px;color:#7088b0;transform-origin:0 0;transform:translate(10px,0) rotate(90deg);">80</div><div class="t" style="left:166.5px;top:300.45px;font-size:5.6px;letter-spacing:1.6px;line-height:6px;color:#7088b0;transform-origin:0 0;transform:translate(10px,0) rotate(90deg);">90</div><div class="t" style="left:166.5px;top:325.00px;font-size:5.6px;letter-spacing:1.6px;line-height:6px;color:#7088b0;transform-origin:0 0;transform:translate(10px,0) rotate(90deg);">100</div><div style="left:165.5px;top:104.5px;width:16.5px;height:17px;background:#2b2b2b;"></div><svg style="left:165.5px;top:104.5px" width="17" height="17"><path d="M8 1V16M0 7.5H16" stroke="#f0f0f0" stroke-width="1" stroke-dasharray="1 1" /><path d="M8 4V11M4.5 7.5H11.5" stroke="#f0f0f0" stroke-width="1"/></svg><div style="left:182px;top:577.8px;width:670px;height:10.7px;background:#262626;"></div><div style="left:293px;top:579px;width:210px;height:8.5px;background:#3a3a3a;"></div><div style="left:141px;top:588.5px;width:710px;height:23px;background:#2b2b2b;"></div><div style="left:141px;top:588.2px;width:710px;height:1px;background:#6a6a6a;"></div><div style="left:230px;top:592.4px;width:58px;height:14.6px;background:#1f1f1f;border:1px solid #555;border-radius:2px;box-sizing:border-box;"></div><div class="t" style="left:250.50px;top:593.30px;line-height:13px;font-size:9.5px;color:#eaeaea;">00 %</div><svg style="left:281.5px;top:594px;" width="6" height="12" viewBox="0 0 6 12"><path d="M0.8 4.4L3 1.8L5.2 4.4ZM0.8 7.4L3 10L5.2 7.4Z" fill="#ddd"/></svg><svg style="left:294px;top:594.6px;" width="10" height="10" viewBox="0 0 10 10"><circle cx="4.2" cy="4.2" r="3.4" fill="none" stroke="#f2f2f2" stroke-width="1.2"/><path d="M6.8 6.8L9.4 9.4" stroke="#f2f2f2" stroke-width="1.6"/><path d="M2.4 4.2H6" stroke="#f2f2f2" stroke-width="1.1"/></svg><svg style="left:309.4px;top:594.6px;" width="10" height="10" viewBox="0 0 10 10"><circle cx="4.2" cy="4.2" r="3.4" fill="none" stroke="#f2f2f2" stroke-width="1.2"/><path d="M6.8 6.8L9.4 9.4" stroke="#f2f2f2" stroke-width="1.6"/><circle cx="4.2" cy="4.2" r="1.2" fill="#f2f2f2"/></svg><svg style="left:325px;top:594.6px;" width="10" height="10" viewBox="0 0 10 10"><circle cx="4.2" cy="4.2" r="3.4" fill="none" stroke="#f2f2f2" stroke-width="1.2"/><path d="M6.8 6.8L9.4 9.4" stroke="#f2f2f2" stroke-width="1.6"/><path d="M2.4 4.2H6M4.2 2.4V6" stroke="#f2f2f2" stroke-width="1.1"/></svg><svg style="left:341.5px;top:595.5px;" width="10.4" height="8.6" viewBox="0 0 10.4 8.6"><path d="M0.6 1V7.6M2 4.3H10M5 1.6L2.2 4.3L5 7" fill="none" stroke="#ccc" stroke-width="1.2"/></svg><svg style="left:356.7px;top:595.5px;" width="10.4" height="8.6" viewBox="0 0 10.4 8.6"><path d="M0.8 4.3H9.4M3.8 1.6L1 4.3L3.8 7" fill="none" stroke="#ccc" stroke-width="1.2"/></svg><div style="left:369px;top:592.4px;width:53.8px;height:14.6px;background:#1f1f1f;border:1px solid #555;border-radius:2px;box-sizing:border-box;"></div><div style="left:412px;top:593.4px;width:1px;height:12.6px;background:#555;opacity:.6"></div><div class="t" style="left:384.66px;top:592.50px;line-height:15px;font-size:10.5px;color:#999;">26</div><svg style="left:413.6px;top:595.4px;" width="8" height="9" viewBox="0 0 8 9"><path d="M4 0.6V6M1.2 4.2L4 7.6L6.8 4.2Z" fill="#f2f2f2" stroke="#f2f2f2" stroke-width="1"/></svg><div class="t" style="left:426.00px;top:593.50px;line-height:13px;font-size:9.5px;color:#999;letter-spacing:-0.526px;">of 27</div><svg style="left:447.6px;top:595.5px;" width="10.4" height="8.6" viewBox="0 0 10.4 8.6"><path d="M0.6 4.3H9.2M6.2 1.6L9 4.3L6.2 7" fill="none" stroke="#ccc" stroke-width="1.2"/></svg><svg style="left:462px;top:595.5px;" width="10.4" height="8.6" viewBox="0 0 10.4 8.6"><path d="M9.8 1V7.6M0.4 4.3H8.4M5.4 1.6L8.2 4.3L5.4 7" fill="none" stroke="#ccc" stroke-width="1.2"/></svg><div style="left:479.5px;top:592.4px;width:94px;height:14.6px;background:#1f1f1f;border:1px solid #555;border-radius:2px;box-sizing:border-box;"></div><div style="left:483px;top:595px;width:10.4px;height:9.4px;background:#6b6b6b;"></div><div class="t" style="left:495.50px;top:593.50px;line-height:13px;font-size:9.5px;color:#999;letter-spacing:-0.470px;">Background</div><div style="left:561.5px;top:593.4px;width:1px;height:12.6px;background:#555;opacity:.6"></div><svg style="left:563.4px;top:595.4px;" width="8" height="9" viewBox="0 0 8 9"><path d="M4 0.6V6M1.2 4.2L4 7.6L6.8 4.2Z" fill="#f2f2f2" stroke="#f2f2f2" stroke-width="1"/></svg><div class="t" style="left:613.00px;top:594.00px;line-height:12px;font-size:8.5px;color:#eaeaea;">X:</div><div class="t" style="left:624.50px;top:594.00px;line-height:12px;font-size:8.5px;color:#eaeaea;letter-spacing:-0.032px;">135,344</div><div class="t" style="left:668.00px;top:594.00px;line-height:12px;font-size:8.5px;color:#eaeaea;">Y:</div><div class="t" style="left:679.50px;top:594.00px;line-height:12px;font-size:8.5px;color:#eaeaea;letter-spacing:-0.175px;">121,322</div><div style="left:722px;top:593px;width:22px;height:14px;background:#1f1f1f;border:1px solid #555;border-radius:2px;box-sizing:border-box;"></div><div class="t" style="left:726.50px;top:593.50px;line-height:13px;font-size:9px;color:#eaeaea;">mm</div><div style="left:743px;top:104.5px;width:108px;height:485px;background:#2b2b2b;"></div></div><div id="C"><div style="left:182px;top:121.5px;width:39px;height:456.3px;background:#efefef;"></div><div style="left:221px;top:121.5px;width:522px;height:456.3px;background:#ffffff;"></div><div style="left:228.3px;top:121.5px;width:1px;height:456.3px;background:#e2474b;"></div><div style="left:289.8px;top:126.4px;width:405.4px;height:65.6px;border:1px solid #6a6a6a;box-sizing:border-box;"></div><svg style="left:425px;top:125px" width="130" height="60" viewBox="0 0 1024 473"><path d="M88 258L182 252" stroke="#111" fill="none" stroke-linecap="round" stroke-linejoin="round" stroke-width="11"/><path d="M852 262L952 255" stroke="#111" fill="none" stroke-linecap="round" stroke-linejoin="round" stroke-width="11"/><path d="M322 88C300 160 270 255 244 328" stroke="#111" fill="none" stroke-linecap="round" stroke-linejoin="round" stroke-width="17"/><path d="M266 98C300 74 372 68 402 100C430 138 398 192 334 206C312 210 298 202 300 194" stroke="#111" fill="none" stroke-linecap="round" stroke-linejoin="round" stroke-width="10"/><circle cx="456" cy="156" r="12" fill="#111"/><path d="M442 206C428 240 398 292 402 308C408 326 436 312 470 270" stroke="#111" fill="none" stroke-linecap="round" stroke-linejoin="round" stroke-width="11"/><path d="M470 262C480 232 500 220 520 226C534 230 542 226 548 216C540 250 510 280 488 302C520 286 548 300 528 340C510 376 476 402 456 394C442 384 462 358 494 338C530 316 562 300 582 268" stroke="#111" fill="none" stroke-linecap="round" stroke-linejoin="round" stroke-width="10.5"/><path d="M582 268C590 236 606 220 626 226C640 230 650 226 656 216C648 250 618 280 596 302C628 286 654 300 636 340C618 376 584 402 564 394C550 384 570 358 602 338C638 316 664 300 680 272" stroke="#111" fill="none" stroke-linecap="round" stroke-linejoin="round" stroke-width="10.5"/><path d="M792 216C748 188 684 226 676 288C672 330 722 322 772 246L792 212C776 262 758 312 782 316C800 316 816 296 832 268" stroke="#111" fill="none" stroke-linecap="round" stroke-linejoin="round" stroke-width="12"/><path d="M441 210C428 240 404 282 402 304" stroke="#111" fill="none" stroke-linecap="round" stroke-linejoin="round" stroke-width="15"/><path d="M546 222C536 252 512 278 492 298" stroke="#111" fill="none" stroke-linecap="round" stroke-linejoin="round" stroke-width="14"/><path d="M654 222C644 252 620 278 600 298" stroke="#111" fill="none" stroke-linecap="round" stroke-linejoin="round" stroke-width="14"/><path d="M532 318C526 350 500 382 470 394" stroke="#111" fill="none" stroke-linecap="round" stroke-linejoin="round" stroke-width="12"/><path d="M640 318C634 350 608 382 578 394" stroke="#111" fill="none" stroke-linecap="round" stroke-linejoin="round" stroke-width="12"/><path d="M712 218C686 242 672 284 682 310" stroke="#111" fill="none" stroke-linecap="round" stroke-linejoin="round" stroke-width="14"/><path d="M790 216C776 262 764 298 776 313" stroke="#111" fill="none" stroke-linecap="round" stroke-linejoin="round" stroke-width="14"/><path d="M392 92C420 120 410 170 360 196" stroke="#111" fill="none" stroke-linecap="round" stroke-linejoin="round" stroke-width="13"/></svg><div style="left:289.8px;top:191.5px;width:1px;height:376.5px;background:#5b5bd6;"></div><div style="left:694.4px;top:191.5px;width:1px;height:28px;background:#5b5bd6;"></div><div style="left:289.8px;top:567px;width:165px;height:1px;background:#5b5bd6;"></div><div style="left:454px;top:218.6px;width:241.4px;height:349.4px;border:1px solid #e59a94;box-sizing:border-box;"></div><svg style="left:292px;top:205.5px;" width="25" height="25" viewBox="0 0 25 25"><circle cx="12.5" cy="12.5" r="10.7" fill="none" stroke="#111" stroke-width="2.2"/><path d="M11.6 6.6V13.4L17.4 16.8" fill="none" stroke="#111" stroke-width="1.8" stroke-linecap="round" stroke-linejoin="round"/></svg><svg style="left:341px;top:205.5px;" width="25" height="24" viewBox="0 0 25 24"><path d="M11.6 13.6C5 13.8 1.4 10 1 4.2C7.2 3.6 11.8 7 12.4 12.8M12.9 12.4C12.7 6 17 1.6 24.2 1.2C24.6 8.2 20.2 12.8 13.4 13" fill="#fff" stroke="#111" stroke-width="2.3" stroke-linejoin="round"/><path d="M10 21V13.4M15.2 21V12.6" fill="none" stroke="#111" stroke-width="2.1"/><rect x="11" y="13" width="3.2" height="8" fill="#fff"/><path d="M0.3 23.4Q2 19.4 12.3 19.4Q22.6 19.4 24.3 23.4Z" fill="#111"/><rect x="11.05" y="14" width="3.1" height="6.4" fill="#fff"/></svg><div style="left:290.4px;top:230.4px;width:28.3px;height:18.6px;border:1px solid #555;box-sizing:border-box;background:#fff;"></div><div style="left:291.4px;top:234.6px;width:26.3px;height:1px;background:#aaa;"></div><div class="t" style="left:292.70px;top:234.60px;line-height:10px;font-size:7.4px;color:#555;letter-spacing:0.248px;">45 min</div><div style="left:338.5px;top:230.4px;width:29px;height:18.6px;border:1px solid #555;box-sizing:border-box;background:#fff;"></div><div style="left:339.5px;top:234.6px;width:27px;height:1px;background:#aaa;"></div><div class="t" style="left:342.75px;top:234.60px;line-height:10px;font-size:7.4px;color:#555;letter-spacing:0.067px;">vegan</div><div class="t" style="left:454.60px;top:218.70px;line-height:15px;font-size:10.4px;color:#17645f;font-weight:bold;letter-spacing:0.382px;-webkit-text-stroke:0.35px #17645f;">LOREM IPSUM DOLOR SIT AMET</div><svg style="left:221px;top:228.9px" width="522" height="1"><path d="M0 0.5H522" stroke="#3c3c78" stroke-width="0.9" stroke-dasharray="3.5 1.6 1 1.6"/></svg><div style="left:470.2px;top:306px;width:171.7px;height:12.8px;background:#1a74d6;"></div><div style="left:474.7px;top:321.8px;width:68.4px;height:12.8px;background:#1a74d6;"></div><div class="t" style="left:454.60px;top:237.40px;line-height:15px;font-size:10.9px;color:#333333;">1.</div><div class="t" style="left:465.70px;top:237.40px;line-height:15px;font-size:10.9px;color:#333333;letter-spacing:0.292px;">Consectetuer adipiscing elit. Ut a sapien.</div><div class="t" style="left:472.50px;top:253.00px;line-height:15px;font-size:10.9px;color:#333333;letter-spacing:0.456px;">Aliquam aliquet purus molestie dolor.</div><div class="t" style="left:472.50px;top:268.60px;line-height:15px;font-size:10.9px;color:#333333;letter-spacing:0.393px;">Integer quis eros ut erat posuere dictum.</div><div class="t" style="left:472.50px;top:284.30px;line-height:15px;font-size:10.9px;color:#333333;letter-spacing:0.434px;">Curabitur dignissim.</div><div class="t" style="left:454.60px;top:305.00px;line-height:15px;font-size:10.9px;color:#333333;">2.</div><div class="t" style="left:471.00px;top:305.00px;line-height:15px;font-size:10.9px;color:#ffffff;letter-spacing:0.260px;">Aenean massa nulla, volutpat eu,</div><div class="t" style="left:475.60px;top:321.00px;line-height:15px;font-size:10.9px;color:#ffffff;letter-spacing:0.400px;">accumsan et</div><div class="t" style="left:546.70px;top:321.00px;line-height:15px;font-size:10.9px;color:#333333;letter-spacing:0.332px;">fringilla eget, odio. Nulla</div><div class="t" style="left:475.60px;top:336.70px;line-height:15px;font-size:10.9px;color:#333333;letter-spacing:0.318px;">placerat porta justo. Nulla vitae turpis.</div><div class="t" style="left:475.60px;top:352.20px;line-height:15px;font-size:10.9px;color:#333333;letter-spacing:0.118px;">Praesent lacus.</div><div class="t" style="left:454.60px;top:373.30px;line-height:15px;font-size:10.9px;color:#333333;">3.</div><div class="t" style="left:467.50px;top:373.30px;line-height:15px;font-size:10.9px;color:#333333;letter-spacing:0.323px;">Suspendisse potenti. Cras ut mi sit amet</div><div class="t" style="left:474.70px;top:388.90px;line-height:15px;font-size:10.9px;color:#333333;letter-spacing:0.463px;">quam consequat consequat. Aenean ut</div><div class="t" style="left:474.70px;top:403.60px;line-height:15px;font-size:10.9px;color:#333333;letter-spacing:0.185px;">lectus.</div><div class="t" style="left:454.60px;top:425.30px;line-height:15px;font-size:10.9px;color:#333333;">4.</div><div class="t" style="left:468.90px;top:425.30px;line-height:15px;font-size:10.9px;color:#333333;letter-spacing:0.429px;">Cum sociis natoque penatibus et magnis</div><div class="t" style="left:475.60px;top:440.60px;line-height:15px;font-size:10.9px;color:#333333;letter-spacing:0.457px;">dis parturient montes, nascetur ridiculus</div><div class="t" style="left:475.60px;top:456.00px;line-height:15px;font-size:10.9px;color:#333333;letter-spacing:0.203px;">mus. Suspendisse vel sapien.</div><div class="t" style="left:454.60px;top:477.00px;line-height:15px;font-size:10.9px;color:#333333;">5.</div><div class="t" style="left:467.50px;top:477.00px;line-height:15px;font-size:10.9px;color:#333333;letter-spacing:0.447px;">Pellentesque elementum pharetra ligula. In</div><div class="t" style="left:475.00px;top:492.20px;line-height:15px;font-size:10.9px;color:#333333;letter-spacing:0.455px;">rhoncus. Aliquam vel enim consequat</div><div class="t" style="left:475.00px;top:508.00px;line-height:15px;font-size:10.9px;color:#333333;letter-spacing:0.460px;">sem aliquet hendrerit. Lorem ipsum dolor</div><div class="t" style="left:475.00px;top:523.70px;line-height:15px;font-size:10.9px;color:#333333;letter-spacing:0.381px;">sit amet, consectetuer adipiscing elit.</div><div class="t" style="left:475.00px;top:539.20px;line-height:15px;font-size:10.9px;color:#333333;letter-spacing:0.255px;">Nam felis.</div><div style="left:280px;top:264.2px;width:139.6px;height:249.6px;background:#fdf0cd;border:1px solid #4d483c;box-sizing:border-box;"></div><div style="left:289.8px;top:273.2px;width:120.8px;height:230.4px;border:1px solid #c9c0a6;box-sizing:border-box;"></div><div class="t" style="left:290.20px;top:272.80px;line-height:15px;font-size:10.8px;color:#17645f;font-weight:bold;letter-spacing:0.072px;-webkit-text-stroke:0.35px #17645f;">INGREDIENTS</div><div class="t" style="left:290.20px;top:293.40px;line-height:12px;font-size:8.5px;color:#17645f;font-weight:bold;letter-spacing:0.672px;-webkit-text-stroke:0.25px #17645f;">DOUGH</div><div class="t" style="left:290.20px;top:307.10px;line-height:12px;font-size:8.9px;color:#333333;font-weight:bold;">·</div><div class="t" style="left:295.20px;top:307.10px;line-height:12px;font-size:8.9px;color:#333333;letter-spacing:0.512px;">800 g uzdfgjhr kfj</div><div class="t" style="left:290.20px;top:320.70px;line-height:12px;font-size:8.9px;color:#333333;font-weight:bold;">·</div><div class="t" style="left:295.20px;top:320.70px;line-height:12px;font-size:8.9px;color:#333333;letter-spacing:0.517px;">200 g dfkj fiuwsgdfg</div><div class="t" style="left:295.20px;top:333.30px;line-height:12px;font-size:8.9px;color:#333333;letter-spacing:0.434px;">lpoidfp idfjr j</div><div class="t" style="left:290.20px;top:347.10px;line-height:12px;font-size:8.9px;color:#333333;font-weight:bold;">·</div><div class="t" style="left:295.20px;top:347.10px;line-height:12px;font-size:8.9px;color:#333333;letter-spacing:-0.019px;">1 diuhzh</div><div class="t" style="left:290.20px;top:359.90px;line-height:12px;font-size:8.9px;color:#333333;font-weight:bold;">·</div><div class="t" style="left:295.20px;top:359.90px;line-height:12px;font-size:8.9px;color:#333333;letter-spacing:0.212px;">14 g ysuhrkd</div><div class="t" style="left:290.20px;top:373.20px;line-height:12px;font-size:8.9px;color:#333333;font-weight:bold;">·</div><div class="t" style="left:295.20px;top:373.20px;line-height:12px;font-size:8.9px;color:#333333;letter-spacing:0.375px;">1 fuihshghjg</div><div class="t" style="left:290.20px;top:390.20px;line-height:12px;font-size:8.5px;color:#17645f;font-weight:bold;letter-spacing:0.416px;-webkit-text-stroke:0.25px #17645f;">TOMATO SAUCE</div><div class="t" style="left:290.20px;top:404.70px;line-height:12px;font-size:8.9px;color:#333333;font-weight:bold;">·</div><div class="t" style="left:295.20px;top:404.70px;line-height:12px;font-size:8.9px;color:#333333;letter-spacing:0.316px;">1 dfuzhsjhg</div><div class="t" style="left:290.20px;top:417.70px;line-height:12px;font-size:8.9px;color:#333333;font-weight:bold;">·</div><div class="t" style="left:295.20px;top:417.70px;line-height:12px;font-size:8.9px;color:#333333;letter-spacing:0.352px;">1 dfguizhsjhb sdiuorg</div><div class="t" style="left:295.20px;top:430.30px;line-height:12px;font-size:8.9px;color:#333333;letter-spacing:0.540px;">kjfdkkjh fdg</div><div class="t" style="left:290.20px;top:443.30px;line-height:12px;font-size:8.9px;color:#333333;font-weight:bold;">·</div><div class="t" style="left:295.20px;top:443.30px;line-height:12px;font-size:8.9px;color:#333333;letter-spacing:0.732px;">dfgdgzut</div><div class="t" style="left:290.20px;top:456.70px;line-height:12px;font-size:8.9px;color:#333333;font-weight:bold;">·</div><div class="t" style="left:295.20px;top:456.70px;line-height:12px;font-size:8.9px;color:#333333;letter-spacing:0.545px;">400 g dsuzfghb uhzdujg</div><div class="t" style="left:290.20px;top:474.00px;line-height:12px;font-size:8.5px;color:#17645f;font-weight:bold;letter-spacing:0.486px;-webkit-text-stroke:0.25px #17645f;">TOPPING</div><div class="t" style="left:290.20px;top:489.00px;line-height:12px;font-size:8.9px;color:#333333;font-weight:bold;">·</div><div class="t" style="left:295.20px;top:489.00px;line-height:12px;font-size:8.9px;color:#333333;letter-spacing:0.497px;">85 g uizsdfh jhfjkhsnm</div></div></div>
<div id="tp"><div style="left:743px;top:89.4px;width:239px;height:599.2px;background:#2a2a2a;border-radius:9px 9px 0 0;box-shadow:0 2px 16px 2px rgba(0,0,0,.26);"></div><div style="left:748.2px;top:94.9px;width:13.6px;height:13.6px;border-radius:50%;background:#3e3e3e;"></div><svg style="left:750px;top:96.7px" width="10" height="10" viewBox="-5 -5 10 10"><path d="M-2.7 -2.7L2.7 2.7M2.7 -2.7L-2.7 2.7" fill="none" stroke="#e0e0e0" stroke-width="1"/></svg><div style="left:770.6px;top:94.9px;width:13.6px;height:13.6px;border-radius:50%;background:#3e3e3e;"></div><svg style="left:772.4px;top:96.7px" width="10" height="10" viewBox="-5 -5 10 10"><path d="M-2.8 0H2.8" fill="none" stroke="#e0e0e0" stroke-width="1"/></svg><div style="left:793.2px;top:94.9px;width:13.6px;height:13.6px;border-radius:50%;background:#3e3e3e;"></div><svg style="left:795px;top:96.7px" width="10" height="10" viewBox="-5 -5 10 10"><path d="M-2.3 -2.3H2.3V2.3H-2.3Z" fill="none" stroke="#e0e0e0" stroke-width="1"/></svg><div class="t" style="left:825.00px;top:94.60px;line-height:14px;font-size:10px;color:#ececec;font-weight:bold;letter-spacing:0.196px;">Text Properties</div><div style="left:743px;top:114px;width:239px;height:0.8px;background:#1e1e1e;"></div><div style="left:743px;top:114.6px;width:239px;height:18.6px;background:#393939;"></div><svg style="left:749.6px;top:121.5px;" width="9" height="6" viewBox="0 0 9 6"><path d="M1 1L4.5 4.6L8 1" fill="none" stroke="#ececec" stroke-width="1.5"/></svg><div class="t" style="left:764.20px;top:117.30px;line-height:15px;font-size:10.4px;color:#ececec;letter-spacing:0.030px;">Styles</div><svg style="left:749.6px;top:141.6px;" width="11" height="12" viewBox="0 0 11 12"><text x="0" y="9" font-family="Liberation Serif" font-weight="bold" font-size="11" fill="#ececec">¶</text><path d="M5 9.6L7 11.2L10.4 6.4" fill="none" stroke="#ececec" stroke-width="1.3"/></svg><div style="left:763.6px;top:139.3px;width:148.2px;height:17.2px;background:#333333;border:1px solid #424242;box-sizing:border-box;border-radius:2px;"></div><div class="t" style="left:766.40px;top:141.60px;line-height:14px;font-size:10px;color:#ececec;letter-spacing:0.166px;">Demo 2 - List 2</div><svg style="left:902.2px;top:146.7px;" width="5" height="3" viewBox="0 0 5 3"><path d="M0 0H5L2.5 3Z" fill="#cfcfcf"/></svg><svg style="left:749.6px;top:166.4px;" width="11" height="12" viewBox="0 0 11 12"><text x="0" y="9.4" font-family="Liberation Serif" font-weight="bold" font-size="11.5" fill="#ececec">T</text><path d="M5 9.6L7 11.2L10.4 6.4" fill="none" stroke="#ececec" stroke-width="1.3"/></svg><div style="left:763.6px;top:164.2px;width:148.2px;height:17.2px;background:#333333;border:1px solid #424242;box-sizing:border-box;border-radius:2px;"></div><div class="t" style="left:766.40px;top:166.50px;line-height:14px;font-size:10px;color:#ececec;letter-spacing:0.254px;">[Default Character Style]</div><svg style="left:902.2px;top:171.6px;" width="5" height="3" viewBox="0 0 5 3"><path d="M0 0H5L2.5 3Z" fill="#cfcfcf"/></svg><div style="left:916px;top:140.7px;width:14.6px;height:14.6px;background:#333333;border:1px solid #424242;box-sizing:border-box;border-radius:2px;"></div><svg style="left:916px;top:140.7px" width="14.6" height="14.6" viewBox="0 0 14 14"><path d="M4.4 4.4A3.7 3.7 0 1 1 3.4 8.4" fill="none" stroke="#ececec" stroke-width="1.2"/><path d="M2.4 2.2V5.6H5.8Z" fill="#ececec"/></svg><div style="left:935.2px;top:140.7px;width:14.6px;height:14.6px;background:#333333;border:1px solid #424242;box-sizing:border-box;border-radius:2px;"></div><svg style="left:935.2px;top:140.7px" width="14.6" height="14.6" viewBox="0 0 14 14"><path d="M3.4 11L4 8.6L9.4 3.2L11.2 5L5.8 10.4Z" fill="#ececec"/><path d="M10 2.6L11.8 4.4" stroke="#ececec" stroke-width="1.6"/></svg><div style="left:959px;top:140.7px;width:16px;height:14.6px;background:#333333;border:1px solid #424242;box-sizing:border-box;border-radius:2px;"></div><svg style="left:959px;top:140.7px" width="16" height="14.6" viewBox="0 0 15 14"><path d="M7.5 2.6V11.4M3 7H12" stroke="#ececec" stroke-width="1.5"/></svg><div style="left:916px;top:165.6px;width:14.6px;height:14.6px;background:#333333;border:1px solid #424242;box-sizing:border-box;border-radius:2px;"></div><svg style="left:916px;top:165.6px" width="14.6" height="14.6" viewBox="0 0 14 14"><path d="M4.4 4.4A3.7 3.7 0 1 1 3.4 8.4" fill="none" stroke="#ececec" stroke-width="1.2"/><path d="M2.4 2.2V5.6H5.8Z" fill="#ececec"/></svg><div style="left:935.2px;top:165.6px;width:14.6px;height:14.6px;background:#333333;border:1px solid #424242;box-sizing:border-box;border-radius:2px;"></div><svg style="left:935.2px;top:165.6px" width="14.6" height="14.6" viewBox="0 0 14 14"><path d="M3.4 11L4 8.6L9.4 3.2L11.2 5L5.8 10.4Z" fill="#ececec"/><path d="M10 2.6L11.8 4.4" stroke="#ececec" stroke-width="1.6"/></svg><div style="left:959px;top:165.6px;width:16px;height:14.6px;background:#333333;border:1px solid #424242;box-sizing:border-box;border-radius:2px;"></div><svg style="left:959px;top:165.6px" width="16" height="14.6" viewBox="0 0 15 14"><path d="M7.5 2.6V11.4M3 7H12" stroke="#ececec" stroke-width="1.5"/></svg><div style="left:743px;top:189.2px;width:239px;height:16.6px;background:#393939;"></div><svg style="left:749.6px;top:195.1px;" width="9" height="6" viewBox="0 0 9 6"><path d="M1 1L4.5 4.6L8 1" fill="none" stroke="#ececec" stroke-width="1.5"/></svg><div class="t" style="left:764.20px;top:190.90px;line-height:15px;font-size:10.4px;color:#ececec;letter-spacing:0.047px;">Font</div><svg style="left:749px;top:215.6px;" width="12" height="12" viewBox="0 0 12 12"><text x="0" y="9" font-family="Liberation Sans" font-size="10" fill="#ececec">A</text><text x="5.6" y="11" font-family="Liberation Serif" font-weight="bold" font-size="7.5" fill="#ececec">A</text></svg><div style="left:763px;top:212.7px;width:208.5px;height:17.6px;background:#222222;border:1px solid #333;box-sizing:border-box;border-radius:2px;"></div><div style="left:958.6px;top:212.7px;width:13px;height:17.6px;background:#333333;border:1px solid #424242;box-sizing:border-box;border-radius:2px;"></div><svg style="left:962.6px;top:220.4px;" width="5" height="3" viewBox="0 0 5 3"><path d="M0 0H5L2.5 3Z" fill="#cfcfcf"/></svg><svg style="left:766.2px;top:216px;" width="9" height="11" viewBox="0 0 9 11"><text x="3.2" y="9.6" font-family="Liberation Serif" font-size="10.5" fill="#56a0e0">T</text><text x="0" y="8.6" font-family="Liberation Serif" font-weight="bold" font-size="10.5" fill="#ececec">T</text></svg><div class="t" style="left:779.30px;top:214.50px;line-height:14px;font-size:10px;color:#ececec;letter-spacing:0.491px;">Montserrat</div><svg style="left:749.4px;top:240.6px;" width="12" height="12" viewBox="0 0 12 12"><text x="0" y="10" font-family="Liberation Serif" font-weight="bold" font-size="12" fill="#ececec">b</text><text x="6.4" y="10" font-family="Liberation Serif" font-style="italic" font-size="12" fill="#ececec">i</text></svg><div style="left:763.6px;top:237.7px;width:92.4px;height:17px;background:#333333;border:1px solid #424242;box-sizing:border-box;border-radius:2px;"></div><div class="t" style="left:766.40px;top:239.90px;line-height:14px;font-size:10px;color:#ececec;letter-spacing:0.126px;">Regular</div><svg style="left:846.5px;top:245px;" width="5" height="3" viewBox="0 0 5 3"><path d="M0 0H5L2.5 3Z" fill="#cfcfcf"/></svg><svg style="left:869px;top:240.4px;" width="10" height="11" viewBox="0 0 10 11"><text x="0" y="9.6" font-family="Liberation Serif" font-weight="bold" font-size="11.5" fill="#ececec">T</text><text x="6.4" y="9.6" font-family="Liberation Serif" font-weight="bold" font-size="6" fill="#ececec">T</text></svg><div style="left:881.3px;top:237.7px;width:68px;height:17px;background:#222222;border:1px solid #2e2e2e;box-sizing:border-box;border-radius:2px;"></div><div style="left:939.9px;top:238.3px;width:8.8px;height:15.8px;background:#333333;border-radius:1px;"></div><svg style="left:941.3px;top:239.7px;" width="6" height="13" viewBox="0 0 6 13"><path d="M0.6 5.1L3 2.5L5.4 5.1ZM0.6 7.9L3 10.5L5.4 7.9Z" fill="#bdbdbd"/></svg><div class="t" style="left:885.30px;top:239.70px;line-height:14px;font-size:10px;color:#ececec;letter-spacing:0.195px;">12,00 pt</div><svg style="left:748.6px;top:265px;" width="13" height="13" viewBox="0 0 13 13"><path d="M1 4.6V11.4M1 4.6H3M1 11.4H3" stroke="#d9534f" stroke-width="0.9" fill="none"/><text x="3.6" y="6.8" font-family="Liberation Serif" font-weight="bold" font-size="9" fill="#ececec" stroke="#ececec" stroke-width="0.3">T</text><text x="3.6" y="13" font-family="Liberation Serif" font-weight="bold" font-size="9" fill="#ececec" stroke="#ececec" stroke-width="0.3">T</text></svg><div style="left:763.6px;top:262.8px;width:67.3px;height:17.2px;background:#333333;border:1px solid #424242;box-sizing:border-box;border-radius:2px;"></div><div class="t" style="left:766.40px;top:265.10px;line-height:14px;font-size:10px;color:#ececec;letter-spacing:-0.051px;">Fixed</div><svg style="left:821.4px;top:270.2px;" width="5" height="3" viewBox="0 0 5 3"><path d="M0 0H5L2.5 3Z" fill="#cfcfcf"/></svg><div style="left:834.4px;top:262.8px;width:68.6px;height:17.2px;background:#222222;border:1px solid #2e2e2e;box-sizing:border-box;border-radius:2px;"></div><div style="left:893.6px;top:263.4px;width:8.8px;height:16px;background:#333333;border-radius:1px;"></div><svg style="left:895px;top:264.8px;" width="6" height="13.2" viewBox="0 0 6 13.2"><path d="M0.6 5.2L3 2.6L5.4 5.2ZM0.6 8L3 10.6L5.4 8Z" fill="#bdbdbd"/></svg><div class="t" style="left:838.00px;top:264.90px;line-height:14px;font-size:10px;color:#ececec;letter-spacing:0.232px;">18,00 pt</div><svg style="left:751px;top:285.6px;" width="20" height="20" viewBox="0 0 20 20"><circle cx="10" cy="10" r="8.8" fill="#fff" stroke="#888" stroke-width="0.8"/><circle cx="10" cy="10" r="7" fill="#fff" stroke="#222" stroke-width="0.9"/><text x="10" y="14.2" text-anchor="middle" font-family="Liberation Sans" font-weight="bold" font-size="11.5" fill="#111">A</text></svg><svg style="left:797px;top:285.6px;" width="20" height="20" viewBox="0 0 20 20"><circle cx="10" cy="10" r="8.8" fill="#fff" stroke="#888" stroke-width="0.8"/><circle cx="10" cy="10" r="7" fill="#fff" stroke="#555" stroke-width="0.9"/><path d="M4.8 15L15.2 5" stroke="#e0242c" stroke-width="1.6"/></svg><svg style="left:845px;top:285.6px;" width="20" height="20" viewBox="0 0 20 20"><circle cx="10" cy="10" r="8.6" fill="#2a2a2a" stroke="#5c5c5c" stroke-width="0.9"/></svg><div class="t" style="left:751.65px;top:307.10px;line-height:11px;font-size:8.1px;color:#ececec;letter-spacing:-0.211px;">Color</div><div class="t" style="left:785.80px;top:307.10px;line-height:11px;font-size:8.1px;color:#ececec;letter-spacing:-0.123px;">Background</div><div class="t" style="left:843.80px;top:307.10px;line-height:11px;font-size:8.1px;color:#7f7f7f;letter-spacing:-0.268px;">Stroke</div><div style="left:743px;top:323px;width:239px;height:16.6px;background:#393939;"></div><svg style="left:749.6px;top:328.9px;" width="9" height="6" viewBox="0 0 9 6"><path d="M1 1L4.5 4.6L8 1" fill="none" stroke="#ececec" stroke-width="1.5"/></svg><div class="t" style="left:764.20px;top:324.70px;line-height:15px;font-size:10.4px;color:#ececec;letter-spacing:0.417px;">Alignment</div><div style="left:750.5px;top:345.5px;width:14.8px;height:14.8px;background:#333333;border:1px solid #424242;box-sizing:border-box;border-radius:2px;"></div><svg style="left:750.5px;top:345.5px" width="14.8" height="14.8" viewBox="0 0 14 14"><path d="M3 4H11M3 6.4H8.4M3 8.8H11M3 11.2H8.4" stroke="#ececec" stroke-width="1.3" fill="none"/></svg><div style="left:769.2px;top:345.5px;width:14.8px;height:14.8px;background:#333333;border:1px solid #424242;box-sizing:border-box;border-radius:2px;"></div><svg style="left:769.2px;top:345.5px" width="14.8" height="14.8" viewBox="0 0 14 14"><path d="M3 4H11M4.4 6.4H9.6M3 8.8H11M4.4 11.2H9.6" stroke="#ececec" stroke-width="1.3" fill="none"/></svg><div style="left:788px;top:345.5px;width:14.8px;height:14.8px;background:#333333;border:1px solid #424242;box-sizing:border-box;border-radius:2px;"></div><svg style="left:788px;top:345.5px" width="14.8" height="14.8" viewBox="0 0 14 14"><path d="M3 4H11M5.6 6.4H11M3 8.8H11M5.6 11.2H11" stroke="#ececec" stroke-width="1.3" fill="none"/></svg><div style="left:806.7px;top:345.5px;width:14.8px;height:14.8px;background:#333333;border:1px solid #424242;box-sizing:border-box;border-radius:2px;"></div><svg style="left:806.7px;top:345.5px" width="14.8" height="14.8" viewBox="0 0 14 14"><path d="M3 4H11M3 6.4H11M3 8.8H11M3 11.2H8" stroke="#ececec" stroke-width="1.3" fill="none"/></svg><div style="left:825.5px;top:345.5px;width:14.8px;height:14.8px;background:#333333;border:1px solid #424242;box-sizing:border-box;border-radius:2px;"></div><svg style="left:825.5px;top:345.5px" width="14.8" height="14.8" viewBox="0 0 14 14"><path d="M3 4H11M3 6.4H11M3 8.8H11M3 11.2H11" stroke="#ececec" stroke-width="1.3" fill="none"/></svg><div style="left:853px;top:345.5px;width:14.8px;height:14.8px;background:#333333;border:1px solid #424242;box-sizing:border-box;border-radius:2px;"></div><svg style="left:853px;top:345.5px" width="14.8" height="14.8" viewBox="0 0 14 14"><path d="M3 3.6H11M3 6H8" stroke="#ececec" stroke-width="1.3" fill="none"/></svg><div style="left:872px;top:345.5px;width:14.8px;height:14.8px;background:#333333;border:1px solid #424242;box-sizing:border-box;border-radius:2px;"></div><svg style="left:872px;top:345.5px" width="14.8" height="14.8" viewBox="0 0 14 14"><path d="M3 6.4H11M3 8.8H8" stroke="#ececec" stroke-width="1.3" fill="none"/></svg><div style="left:890.6px;top:345.5px;width:14.8px;height:14.8px;background:#333333;border:1px solid #424242;box-sizing:border-box;border-radius:2px;"></div><svg style="left:890.6px;top:345.5px" width="14.8" height="14.8" viewBox="0 0 14 14"><path d="M3 9H11M3 11.4H8" stroke="#ececec" stroke-width="1.3" fill="none"/></svg><div style="left:918.3px;top:345.5px;width:14.6px;height:14.8px;background:#333333;border:1px solid #424242;box-sizing:border-box;border-radius:2px;"></div><svg style="left:918.3px;top:345.5px" width="14.6" height="14.8" viewBox="0 0 14 14"><text x="7" y="8.4" text-anchor="middle" font-family="Liberation Sans" font-weight="bold" font-size="8.5" fill="#ececec">¶</text><path d="M3 11H10.6M8.6 9.4L10.8 11L8.6 12.6" stroke="#d9534f" stroke-width="1" fill="none"/></svg><div style="left:937px;top:345.5px;width:14.6px;height:14.8px;background:#333333;border:1px solid #424242;box-sizing:border-box;border-radius:2px;"></div><svg style="left:937px;top:345.5px" width="14.6" height="14.8" viewBox="0 0 14 14"><text x="7" y="8.4" text-anchor="middle" font-family="Liberation Sans" font-weight="bold" font-size="8.5" fill="#ececec">¶</text><path d="M11 11H3.4M5.4 9.4L3.2 11L5.4 12.6" stroke="#d9534f" stroke-width="1" fill="none"/></svg><div class="t" style="left:777.00px;top:364.10px;line-height:11px;font-size:8.1px;color:#ececec;letter-spacing:-0.017px;"><u>H</u>orizontal</div><div class="t" style="left:866.00px;top:364.10px;line-height:11px;font-size:8.1px;color:#ececec;letter-spacing:-0.095px;"><u>V</u>ertical</div><div class="t" style="left:919.20px;top:364.10px;line-height:11px;font-size:8.1px;color:#ececec;letter-spacing:-0.029px;"><u>D</u>irection</div><div style="left:750.5px;top:380px;width:14.8px;height:14.6px;background:#333333;border:1px solid #424242;box-sizing:border-box;border-radius:2px;"></div><svg style="left:750.5px;top:380px" width="14.8" height="14.6" viewBox="0 0 14 14"><text x="7" y="11.6" text-anchor="middle" font-family="Liberation Sans" font-weight="bold" font-size="9.5" fill="#ececec">A</text><path d="M2.6 2.6H11.4" stroke="#ececec" stroke-width="1.1"/></svg><div style="left:769.2px;top:380px;width:14.8px;height:14.6px;background:#333333;border:1px solid #424242;box-sizing:border-box;border-radius:2px;"></div><svg style="left:769.2px;top:380px" width="14.8" height="14.6" viewBox="0 0 14 14"><text x="7" y="11.6" text-anchor="middle" font-family="Liberation Sans" font-weight="bold" font-size="9.5" fill="#ececec">A</text><path d="M2.6 5.4H11.4" stroke="#ececec" stroke-width="1.1"/></svg><div style="left:788px;top:380px;width:14.8px;height:14.6px;background:#333333;border:1px solid #424242;box-sizing:border-box;border-radius:2px;"></div><svg style="left:788px;top:380px" width="14.8" height="14.6" viewBox="0 0 14 14"><text x="7" y="11.6" text-anchor="middle" font-family="Liberation Sans" font-weight="bold" font-size="9.5" fill="#ececec">A</text><path d="M2.6 2.4H11.4M2.6 12.4H11.4" stroke="#ececec" stroke-width="1"/></svg><div style="left:806.7px;top:380px;width:14.8px;height:14.6px;background:#333333;border:1px solid #424242;box-sizing:border-box;border-radius:2px;"></div><svg style="left:806.7px;top:380px" width="14.8" height="14.6" viewBox="0 0 14 14"><text x="7" y="11.6" text-anchor="middle" font-family="Liberation Sans" font-weight="bold" font-size="9.5" fill="#ececec">A</text><path d="M2.6 12.4H11.4" stroke="#ececec" stroke-width="1"/></svg><div style="left:844.2px;top:380px;width:14.8px;height:14.6px;background:#333333;border:1px solid #424242;box-sizing:border-box;border-radius:2px;"></div><svg style="left:844.2px;top:380px" width="14.8" height="14.6" viewBox="0 0 14 14"><text x="8.4" y="11.8" text-anchor="middle" font-family="Liberation Sans" font-weight="bold" font-size="9.5" fill="#ececec">A</text><path d="M3 2.6V12" stroke="#ececec" stroke-width="0.9" stroke-dasharray="1.4 1.4"/><text x="2.4" y="7" font-family="Liberation Sans" font-weight="bold" font-size="7" fill="#ececec">"</text></svg><div style="left:863px;top:380px;width:14.8px;height:14.6px;background:#333333;border:1px solid #424242;box-sizing:border-box;border-radius:2px;"></div><svg style="left:863px;top:380px" width="14.8" height="14.6" viewBox="0 0 14 14"><text x="6" y="11.8" text-anchor="middle" font-family="Liberation Sans" font-weight="bold" font-size="9.5" fill="#ececec">A</text><path d="M11.4 2.6V12" stroke="#ececec" stroke-width="0.9" stroke-dasharray="1.4 1.4"/><text x="8.8" y="7" font-family="Liberation Sans" font-weight="bold" font-size="7" fill="#ececec">"</text></svg><div class="t" style="left:758.20px;top:397.90px;line-height:11px;font-size:8.1px;color:#ececec;letter-spacing:-0.142px;">First Line <u>O</u>ffset</div><div class="t" style="left:835.60px;top:397.90px;line-height:11px;font-size:8.1px;color:#ececec;letter-spacing:-0.125px;">Optical <u>M</u>argins</div><div style="left:743px;top:414.2px;width:239px;height:16.6px;background:#393939;"></div><svg style="left:749.6px;top:420.1px;" width="9" height="6" viewBox="0 0 9 6"><path d="M1 1L4.5 4.6L8 1" fill="none" stroke="#ececec" stroke-width="1.5"/></svg><div class="t" style="left:764.20px;top:415.90px;line-height:15px;font-size:10.4px;color:#ececec;letter-spacing:0.195px;">Typography</div><div style="left:750.5px;top:437.3px;width:14.7px;height:14.2px;background:#333333;border:1px solid #424242;box-sizing:border-box;border-radius:2px;"></div><svg style="left:750.5px;top:437.3px" width="14.7" height="14.2" viewBox="0 0 14 14"><text x="6.6" y="10.4" text-anchor="middle" font-family="Liberation Serif" font-weight="bold" font-size="10" fill="#ececec">U</text><path d="M3 12.6H10M10.4 12L11.4 13L12.4 12" stroke="#ececec" stroke-width="0.9" fill="none"/></svg><div style="left:769.2px;top:437.3px;width:14.7px;height:14.2px;background:#333333;border:1px solid #424242;box-sizing:border-box;border-radius:2px;"></div><svg style="left:769.2px;top:437.3px" width="14.7" height="14.2" viewBox="0 0 14 14"><text x="7" y="10.4" text-anchor="middle" font-family="Liberation Serif" font-weight="bold" font-size="7" fill="#ececec">abc</text><path d="M1.6 12.6H12.4" stroke="#ececec" stroke-width="0.9"/></svg><div style="left:788px;top:437.3px;width:14.7px;height:14.2px;background:#333333;border:1px solid #424242;box-sizing:border-box;border-radius:2px;"></div><svg style="left:788px;top:437.3px" width="14.7" height="14.2" viewBox="0 0 14 14"><text x="6.6" y="11" text-anchor="middle" font-family="Liberation Serif" font-weight="bold" font-size="10.5" fill="#ececec">S</text><path d="M2.6 7.2H10.4M10.4 12L11.4 13L12.4 12" stroke="#ececec" stroke-width="0.9" fill="none"/></svg><div style="left:814.3px;top:437.3px;width:14.7px;height:14.2px;background:#333333;border:1px solid #424242;box-sizing:border-box;border-radius:2px;"></div><svg style="left:814.3px;top:437.3px" width="14.7" height="14.2" viewBox="0 0 14 14"><text x="6" y="10.4" text-anchor="middle" font-family="Liberation Serif" font-weight="bold" font-size="10" fill="#ececec">x</text><text x="10.6" y="12.6" text-anchor="middle" font-family="Liberation Sans" font-weight="bold" font-size="5.5" fill="#e0534f">2</text></svg><div style="left:833.7px;top:437.3px;width:14.7px;height:14.2px;background:#333333;border:1px solid #424242;box-sizing:border-box;border-radius:2px;"></div><svg style="left:833.7px;top:437.3px" width="14.7" height="14.2" viewBox="0 0 14 14"><text x="6" y="11.4" text-anchor="middle" font-family="Liberation Serif" font-weight="bold" font-size="10" fill="#ececec">x</text><text x="10.6" y="6.4" text-anchor="middle" font-family="Liberation Sans" font-weight="bold" font-size="5.5" fill="#e0534f">2</text></svg><div style="left:861.2px;top:437.3px;width:14.7px;height:14.2px;background:#333333;border:1px solid #424242;box-sizing:border-box;border-radius:2px;"></div><svg style="left:861.2px;top:437.3px" width="14.7" height="14.2" viewBox="0 0 14 14"><text x="7" y="10.6" text-anchor="middle" font-family="Liberation Serif" font-weight="bold" font-size="9.5" fill="#ececec">TI</text></svg><div style="left:880px;top:437.3px;width:14.7px;height:14.2px;background:#333333;border:1px solid #424242;box-sizing:border-box;border-radius:2px;"></div><svg style="left:880px;top:437.3px" width="14.7" height="14.2" viewBox="0 0 14 14"><text x="5.6" y="10.6" text-anchor="middle" font-family="Liberation Serif" font-weight="bold" font-size="9.5" fill="#ececec">T</text><text x="10.4" y="10.6" text-anchor="middle" font-family="Liberation Serif" font-weight="bold" font-size="6.5" fill="#ececec">I</text></svg><div style="left:907.5px;top:437.3px;width:14.7px;height:14.2px;background:#333333;border:1px solid #424242;box-sizing:border-box;border-radius:2px;"></div><svg style="left:907.5px;top:437.3px" width="14.7" height="14.2" viewBox="0 0 14 14"><text x="7" y="11.4" text-anchor="middle" font-family="Liberation Sans" font-weight="bold" font-size="11" fill="none" stroke="#ececec" stroke-width="0.8">A</text></svg><div style="left:926.6px;top:437.3px;width:14.7px;height:14.2px;background:#333333;border:1px solid #424242;box-sizing:border-box;border-radius:2px;"></div><svg style="left:926.6px;top:437.3px" width="14.7" height="14.2" viewBox="0 0 14 14"><text x="6.6" y="11" text-anchor="middle" font-family="Liberation Serif" font-weight="bold" font-size="10.5" fill="#ececec">T</text><path d="M10 12L11 13L12 12" stroke="#ececec" stroke-width="0.9" fill="none"/></svg><svg style="left:790.4px;top:464.2px;" width="12" height="13" viewBox="0 0 12 13"><path d="M2 2.4V10.6M0.8 4L2 2.4L3.2 4M0.8 9L2 10.6L3.2 9" stroke="#e0534f" stroke-width="0.8" fill="none"/><text x="8" y="8" text-anchor="middle" font-family="Liberation Serif" font-weight="bold" font-size="8" fill="#ececec">T</text></svg><svg style="left:879.6px;top:464.2px;" width="13" height="13" viewBox="0 0 13 13"><text x="6.5" y="8" text-anchor="middle" font-family="Liberation Sans" font-weight="bold" font-size="8" fill="#ececec">VA</text><path d="M1 10.6H12M2.4 9.4L1 10.6L2.4 11.8M10.6 9.4L12 10.6L10.6 11.8" stroke="#e0534f" stroke-width="0.8" fill="none"/></svg><div style="left:806.2px;top:462.2px;width:62.2px;height:16.2px;background:#222222;border:1px solid #2e2e2e;box-sizing:border-box;border-radius:2px;"></div><div style="left:859px;top:462.8px;width:8.8px;height:15px;background:#333333;border-radius:1px;"></div><svg style="left:860.4px;top:464.2px;" width="6" height="12.2" viewBox="0 0 6 12.2"><path d="M0.6 4.7L3 2.1L5.4 4.7ZM0.6 7.5L3 10.1L5.4 7.5Z" fill="#bdbdbd"/></svg><div class="t" style="left:808.80px;top:463.80px;line-height:14px;font-size:10px;color:#ececec;letter-spacing:-0.122px;">0,00 %</div><div style="left:895.8px;top:462.2px;width:64.8px;height:16.2px;background:#222222;border:1px solid #2e2e2e;box-sizing:border-box;border-radius:2px;"></div><div style="left:951.2px;top:462.8px;width:8.8px;height:15px;background:#333333;border-radius:1px;"></div><svg style="left:952.6px;top:464.2px;" width="6" height="12.2" viewBox="0 0 6 12.2"><path d="M0.6 4.7L3 2.1L5.4 4.7ZM0.6 7.5L3 10.1L5.4 7.5Z" fill="#bdbdbd"/></svg><div class="t" style="left:897.60px;top:463.80px;line-height:14px;font-size:10px;color:#ececec;letter-spacing:-0.089px;">0,00 %</div><svg style="left:790.4px;top:485.3px;" width="12" height="13" viewBox="0 0 12 13"><text x="6" y="9" text-anchor="middle" font-family="Liberation Serif" font-weight="bold" font-size="9.5" fill="#ececec">T</text><path d="M1.6 11.4H10.4" stroke="#e0534f" stroke-width="0.9"/></svg><svg style="left:879.6px;top:485.3px;" width="13" height="13" viewBox="0 0 13 13"><path d="M1.6 1.6V10.4" stroke="#e0534f" stroke-width="0.9"/><text x="7.4" y="10" text-anchor="middle" font-family="Liberation Serif" font-weight="bold" font-size="10.5" fill="#ececec">T</text></svg><div style="left:806.2px;top:483.3px;width:62.2px;height:16.2px;background:#222222;border:1px solid #2e2e2e;box-sizing:border-box;border-radius:2px;"></div><div style="left:859px;top:483.9px;width:8.8px;height:15px;background:#333333;border-radius:1px;"></div><svg style="left:860.4px;top:485.3px;" width="6" height="12.2" viewBox="0 0 6 12.2"><path d="M0.6 4.7L3 2.1L5.4 4.7ZM0.6 7.5L3 10.1L5.4 7.5Z" fill="#bdbdbd"/></svg><div class="t" style="left:808.80px;top:484.90px;line-height:14px;font-size:10px;color:#ececec;letter-spacing:-0.057px;">100,00 %</div><div style="left:895.8px;top:483.3px;width:64.8px;height:16.2px;background:#222222;border:1px solid #2e2e2e;box-sizing:border-box;border-radius:2px;"></div><div style="left:951.2px;top:483.9px;width:8.8px;height:15px;background:#333333;border-radius:1px;"></div><svg style="left:952.6px;top:485.3px;" width="6" height="12.2" viewBox="0 0 6 12.2"><path d="M0.6 4.7L3 2.1L5.4 4.7ZM0.6 7.5L3 10.1L5.4 7.5Z" fill="#bdbdbd"/></svg><div class="t" style="left:897.60px;top:484.90px;line-height:14px;font-size:10px;color:#ececec;letter-spacing:-0.007px;">100,00 %</div><svg style="left:790.4px;top:507px;" width="12" height="13" viewBox="0 0 12 13"><path d="M4 5.6V9.4M9 5.6V9.4M4 7.5H9" stroke="#e0534f" stroke-width="0.9" fill="none"/></svg><svg style="left:879.6px;top:507px;" width="13" height="13" viewBox="0 0 13 13"><path d="M2 5.2V9.8M11 5.2V9.8M2 7.5H11" stroke="#e0534f" stroke-width="0.9" fill="none"/></svg><div style="left:806.2px;top:505px;width:62.2px;height:16.2px;background:#222222;border:1px solid #2e2e2e;box-sizing:border-box;border-radius:2px;"></div><div style="left:859px;top:505.6px;width:8.8px;height:15px;background:#333333;border-radius:1px;"></div><svg style="left:860.4px;top:507px;" width="6" height="12.2" viewBox="0 0 6 12.2"><path d="M0.6 4.7L3 2.1L5.4 4.7ZM0.6 7.5L3 10.1L5.4 7.5Z" fill="#bdbdbd"/></svg><div class="t" style="left:808.80px;top:506.60px;line-height:14px;font-size:10px;color:#ececec;letter-spacing:-0.057px;">100,00 %</div><div style="left:895.8px;top:505px;width:64.8px;height:16.2px;background:#222222;border:1px solid #2e2e2e;box-sizing:border-box;border-radius:2px;"></div><div style="left:951.2px;top:505.6px;width:8.8px;height:15px;background:#333333;border-radius:1px;"></div><svg style="left:952.6px;top:507px;" width="6" height="12.2" viewBox="0 0 6 12.2"><path d="M0.6 4.7L3 2.1L5.4 4.7ZM0.6 7.5L3 10.1L5.4 7.5Z" fill="#bdbdbd"/></svg><div class="t" style="left:897.60px;top:506.60px;line-height:14px;font-size:10px;color:#ececec;letter-spacing:-0.007px;">100,00 %</div><svg style="left:790.4px;top:542px;" width="12" height="13" viewBox="0 0 12 13"><text x="6" y="9" text-anchor="middle" font-family="Liberation Serif" font-weight="bold" font-size="9.5" fill="#ececec">T</text><path d="M3 11.4H9" stroke="#e0534f" stroke-width="0.9"/></svg><svg style="left:879.6px;top:542px;" width="13" height="13" viewBox="0 0 13 13"><text x="6.5" y="9" text-anchor="middle" font-family="Liberation Serif" font-weight="bold" font-size="9.5" fill="#ececec" transform="translate(-2.6 0) scale(1.4 1)">T</text><path d="M0.6 11.4H12.4" stroke="#e0534f" stroke-width="0.9"/></svg><div style="left:806.2px;top:540px;width:62.2px;height:16.2px;background:#222222;border:1px solid #2e2e2e;box-sizing:border-box;border-radius:2px;"></div><div style="left:859px;top:540.6px;width:8.8px;height:15px;background:#333333;border-radius:1px;"></div><svg style="left:860.4px;top:542px;" width="6" height="12.2" viewBox="0 0 6 12.2"><path d="M0.6 4.7L3 2.1L5.4 4.7ZM0.6 7.5L3 10.1L5.4 7.5Z" fill="#bdbdbd"/></svg><div class="t" style="left:808.80px;top:541.60px;line-height:14px;font-size:10px;color:#ececec;letter-spacing:-0.057px;">100,00 %</div><div style="left:895.8px;top:540px;width:64.8px;height:16.2px;background:#222222;border:1px solid #2e2e2e;box-sizing:border-box;border-radius:2px;"></div><div style="left:951.2px;top:540.6px;width:8.8px;height:15px;background:#333333;border-radius:1px;"></div><svg style="left:952.6px;top:542px;" width="6" height="12.2" viewBox="0 0 6 12.2"><path d="M0.6 4.7L3 2.1L5.4 4.7ZM0.6 7.5L3 10.1L5.4 7.5Z" fill="#bdbdbd"/></svg><div class="t" style="left:897.60px;top:541.60px;line-height:14px;font-size:10px;color:#ececec;letter-spacing:-0.007px;">100,00 %</div><div class="t" style="left:749.60px;top:506.70px;line-height:14px;font-size:10px;color:#ececec;letter-spacing:-0.022px;">Space:</div><div class="t" style="left:749.60px;top:541.70px;line-height:14px;font-size:10px;color:#ececec;letter-spacing:0.250px;">Glyph:</div><div class="t" style="left:820.10px;top:524.90px;line-height:11px;font-size:8.1px;color:#ececec;letter-spacing:0.135px;">Minimum</div><div class="t" style="left:914.30px;top:524.90px;line-height:11px;font-size:8.1px;color:#ececec;letter-spacing:0.216px;">Normal</div><div class="t" style="left:820.10px;top:559.50px;line-height:11px;font-size:8.1px;color:#ececec;letter-spacing:0.135px;">Minimum</div><div class="t" style="left:910.50px;top:559.50px;line-height:11px;font-size:8.1px;color:#ececec;letter-spacing:-0.015px;">Maximum</div><div style="left:743px;top:575.4px;width:239px;height:17.2px;background:#393939;"></div><svg style="left:751px;top:579.9px;" width="6" height="9" viewBox="0 0 6 9"><path d="M1 1L4.6 4.5L1 8" fill="none" stroke="#ececec" stroke-width="1.5"/></svg><div class="t" style="left:764.20px;top:577.40px;line-height:15px;font-size:10.4px;color:#ececec;letter-spacing:0.184px;">Columns &amp; Indents</div><div style="left:743px;top:592.9px;width:239px;height:17.2px;background:#393939;"></div><svg style="left:751px;top:597.4px;" width="6" height="9" viewBox="0 0 6 9"><path d="M1 1L4.6 4.5L1 8" fill="none" stroke="#ececec" stroke-width="1.5"/></svg><div class="t" style="left:764.20px;top:594.90px;line-height:15px;font-size:10.4px;color:#ececec;letter-spacing:-0.024px;">Lists &amp; Drop Caps</div><div style="left:743px;top:610.4px;width:239px;height:17.2px;background:#393939;"></div><svg style="left:751px;top:614.9px;" width="6" height="9" viewBox="0 0 6 9"><path d="M1 1L4.6 4.5L1 8" fill="none" stroke="#ececec" stroke-width="1.5"/></svg><div class="t" style="left:764.20px;top:612.40px;line-height:15px;font-size:10.4px;color:#ececec;letter-spacing:0.187px;">Hyphenation &amp; Language</div><div style="left:743px;top:627.9px;width:239px;height:17.2px;background:#393939;"></div><svg style="left:751px;top:632.4px;" width="6" height="9" viewBox="0 0 6 9"><path d="M1 1L4.6 4.5L1 8" fill="none" stroke="#ececec" stroke-width="1.5"/></svg><div class="t" style="left:764.20px;top:629.90px;line-height:15px;font-size:10.4px;color:#ececec;letter-spacing:0.124px;">Orphans &amp; Widows</div><div style="left:743px;top:645.4px;width:239px;height:17.2px;background:#393939;"></div><svg style="left:751px;top:649.9px;" width="6" height="9" viewBox="0 0 6 9"><path d="M1 1L4.6 4.5L1 8" fill="none" stroke="#ececec" stroke-width="1.5"/></svg><div class="t" style="left:764.20px;top:647.40px;line-height:15px;font-size:10.4px;color:#ececec;letter-spacing:0.005px;">OpenType Features</div><div style="left:743px;top:662.9px;width:239px;height:17.2px;background:#393939;"></div><svg style="left:751px;top:667.4px;" width="6" height="9" viewBox="0 0 6 9"><path d="M1 1L4.6 4.5L1 8" fill="none" stroke="#ececec" stroke-width="1.5"/></svg><div class="t" style="left:764.20px;top:664.90px;line-height:15px;font-size:10.4px;color:#7f7f7f;letter-spacing:0.049px;">Text on Path</div></div>
<div id="ap"><div style="left:41.2px;top:323.5px;width:208.8px;height:362px;background:#efefef;border-radius:8px 8px 0 0;box-shadow:0 2px 14px 1px rgba(0,0,0,.25);"></div><div style="left:41.2px;top:323.5px;width:208.8px;height:25.2px;background:#fdfdfd;border-radius:8px 8px 0 0;"></div><div style="left:41.2px;top:348.4px;width:208.8px;height:1px;background:#cfcfcf;"></div><div style="left:46.5px;top:329.2px;width:13.6px;height:13.6px;border-radius:50%;background:#e6e6e6;"></div><svg style="left:48.3px;top:331px" width="10" height="10" viewBox="-5 -5 10 10"><path d="M-2.7 -2.7L2.7 2.7M2.7 -2.7L-2.7 2.7" fill="none" stroke="#555" stroke-width="1"/></svg><div style="left:68.9px;top:329.2px;width:13.6px;height:13.6px;border-radius:50%;background:#e6e6e6;"></div><svg style="left:70.7px;top:331px" width="10" height="10" viewBox="-5 -5 10 10"><path d="M-2.8 0H2.8" fill="none" stroke="#555" stroke-width="1"/></svg><div style="left:91.2px;top:329.2px;width:13.6px;height:13.6px;border-radius:50%;background:#e6e6e6;"></div><svg style="left:93px;top:331px" width="10" height="10" viewBox="-5 -5 10 10"><path d="M-2.3 -2.3H2.3V2.3H-2.3Z" fill="none" stroke="#555" stroke-width="1"/></svg><div class="t" style="left:121.00px;top:329.80px;line-height:14px;font-size:10px;color:#222;font-weight:bold;letter-spacing:0.062px;">Arrange Pages</div><div class="t" style="left:47.80px;top:356.00px;line-height:14px;font-size:10px;color:#222;letter-spacing:0.189px;">Available Master Pages:</div><div style="left:47.2px;top:372px;width:196.8px;height:62.8px;background:#fff;border:1px solid #b9b9b9;box-sizing:border-box;overflow:hidden;"></div><div class="t" style="left:50.40px;top:374.00px;line-height:14px;font-size:10px;color:#222;letter-spacing:0.293px;">Demo 1 Left</div><div class="t" style="left:50.40px;top:388.20px;line-height:14px;font-size:10px;color:#222;letter-spacing:0.322px;">Demo 1 Right</div><div class="t" style="left:50.40px;top:402.40px;line-height:14px;font-size:10px;color:#222;letter-spacing:0.293px;">Demo 2 Left</div><div class="t" style="left:50.40px;top:416.60px;line-height:14px;font-size:10px;color:#222;letter-spacing:0.322px;">Demo 2 Right</div><div style="left:48px;top:430px;width:180px;height:4px;overflow:hidden;"><div class="t" style="left:2.4px;top:0px;font-size:10px;line-height:14px;color:#222;letter-spacing:.2px">Normal Left</div></div><div style="left:234.4px;top:373px;width:8.8px;height:60.8px;background:#dedede;"></div><div style="left:234.4px;top:373px;width:8.8px;height:8.4px;background:#f6f6f6;"></div><svg style="left:235.3px;top:374.8px;" width="7" height="5" viewBox="0 0 7 5"><path d="M0.6 4.2L3.5 0.8L6.4 4.2Z" fill="#444"/></svg><div style="left:234.4px;top:425.4px;width:8.8px;height:8.4px;background:#f6f6f6;"></div><svg style="left:235.3px;top:427.4px;" width="7" height="5" viewBox="0 0 7 5"><path d="M0.6 0.8L3.5 4.2L6.4 0.8Z" fill="#444"/></svg><div style="left:234.4px;top:381.4px;width:8.8px;height:24.6px;background:#f4f4f4;"></div><div class="t" style="left:47.80px;top:438.90px;line-height:14px;font-size:10px;color:#222;letter-spacing:0.261px;">Document Pages:</div><div style="left:47.8px;top:454.9px;width:15.3px;height:14px;background:#f8f8f8;border:1px solid #c6c6c6;box-sizing:border-box;border-radius:2px;"></div><svg style="left:47.8px;top:454.9px" width="15.3" height="14" viewBox="0 0 15.3 14"><path d="M3.4 2.4H9.2Q11.4 2.4 11.4 4.6V11.4H3.4Z" fill="none" stroke="#222" stroke-width="1.2"/><circle cx="11" cy="11" r="2.2" fill="#222"/><circle cx="11" cy="11" r="0.8" fill="#fff"/></svg><div style="left:66.6px;top:454.9px;width:15.3px;height:14px;background:#f8f8f8;border:1px solid #c6c6c6;box-sizing:border-box;border-radius:2px;"></div><svg style="left:66.6px;top:454.9px" width="15.3" height="14" viewBox="0 0 15.3 14"><path d="M3.4 2.4H9.2Q11.4 2.4 11.4 4.6V11.4H3.4Z" fill="none" stroke="#222" stroke-width="1.2"/><rect x="7.4" y="8.6" width="6" height="4.6" fill="#f8f8f8"/><path d="M13 11H8.6M10.2 9.2L8.4 11L10.2 12.8" stroke="#222" stroke-width="1.1" fill="none"/></svg><div style="left:85.7px;top:454.9px;width:15.3px;height:14px;background:#f8f8f8;border:1px solid #c6c6c6;box-sizing:border-box;border-radius:2px;"></div><svg style="left:85.7px;top:454.9px" width="15.3" height="14" viewBox="0 0 15.3 14"><path d="M4.6 9.6H2.4V2.2H8.8V3.6" fill="none" stroke="#222" stroke-width="1.1"/><path d="M5.2 4.2H10.6Q12.6 4.2 12.6 6.2V12.2H5.2Z" fill="none" stroke="#222" stroke-width="1.2"/></svg><div style="left:104.6px;top:454.9px;width:15.3px;height:14px;background:#f8f8f8;border:1px solid #c6c6c6;box-sizing:border-box;border-radius:2px;"></div><svg style="left:104.6px;top:454.9px" width="15.3" height="14" viewBox="0 0 15.3 14"><path d="M3.4 2.4H9.2Q11.4 2.4 11.4 4.6V11.4H3.4Z" fill="none" stroke="#222" stroke-width="1.2"/><rect x="8" y="8.4" width="5.4" height="4.8" fill="#f8f8f8"/><path d="M8.4 11.2H12M10.6 9.4L12.4 11.2L10.6 13" stroke="#222" stroke-width="1.1" fill="none"/></svg><div style="left:134.7px;top:454.9px;width:15.3px;height:14px;background:#f8f8f8;border:1px solid #c6c6c6;box-sizing:border-box;border-radius:2px;"></div><svg style="left:134.7px;top:454.9px" width="15.3" height="14" viewBox="0 0 15.3 14"><path d="M3 2.4H11.6V11.4H3ZM7.3 2.4V11.4" fill="none" stroke="#222" stroke-width="1.2"/><path d="M11.6 11.6L13.4 13" stroke="#222" stroke-width="1"/></svg><div style="left:153.4px;top:454.9px;width:15.3px;height:14px;background:#f8f8f8;border:1px solid #c6c6c6;box-sizing:border-box;border-radius:2px;"></div><svg style="left:153.4px;top:454.9px" width="15.3" height="14" viewBox="0 0 15.3 14"><path d="M3 2.4H11.6V11.4H3ZM7.3 2.4V11.4" fill="none" stroke="#222" stroke-width="1.2"/><circle cx="10" cy="9" r="1.8" fill="#f8f8f8" stroke="#222" stroke-width="0.9"/><path d="M11.4 10.6L13.4 13" stroke="#222" stroke-width="1"/></svg><svg style="left:230.4px;top:455.4px;" width="11" height="14.6" viewBox="0 0 11 14.6"><path d="M3.4 1.6Q3.4 0.4 5.5 0.4Q7.6 0.4 7.6 1.6" fill="none" stroke="#111" stroke-width="1.2"/><rect x="0.2" y="1.6" width="10.6" height="2.2" rx="0.6" fill="#111"/><path d="M1.2 4.6H9.8V12.8Q9.8 14.2 8.4 14.2H2.6Q1.2 14.2 1.2 12.8Z" fill="#111"/></svg><div style="left:47.2px;top:473.4px;width:196.8px;height:205.8px;background:#ececec;border:1px solid #c4c4c4;box-sizing:border-box;"></div><div style="left:234.4px;top:474.4px;width:8.8px;height:203.8px;background:#dcdcdc;"></div><div style="left:234.4px;top:474.4px;width:8.8px;height:8.6px;background:#f6f6f6;"></div><svg style="left:235.3px;top:476.4px;" width="7" height="5" viewBox="0 0 7 5"><path d="M0.6 4.2L3.5 0.8L6.4 4.2Z" fill="#444"/></svg><div style="left:234.4px;top:669.6px;width:8.8px;height:8.6px;background:#f6f6f6;"></div><svg style="left:235.3px;top:671.8px;" width="7" height="5" viewBox="0 0 7 5"><path d="M0.6 0.8L3.5 4.2L6.4 0.8Z" fill="#444"/></svg><div style="left:234.4px;top:626px;width:8.8px;height:34px;background:#f3f3f3;"></div><div style="left:59px;top:474.4px;width:97.4px;height:24px;background:#fff;border:1px solid #333;border-top:none;box-sizing:border-box;"></div><div style="left:107.4px;top:474.4px;width:0.8px;height:23px;background:#e2e2e2;"></div><div style="left:95.4px;top:474.4px;width:6.4px;height:4.4px;background:linear-gradient(#5a2a82,#1f4f96);"></div><div style="left:59px;top:519.1px;width:97.4px;height:52.8px;background:#fff;border:1px solid #333;box-sizing:border-box;"></div><svg style="left:59px;top:519.1px" width="97.4" height="52.8"><rect x="6.5" y="11.4" width="18.5" height="0.9" fill="#999"/><rect x="6.5" y="13.3" width="18.5" height="0.9" fill="#999"/><rect x="6.5" y="15.2" width="18.5" height="0.9" fill="#999"/><rect x="6.5" y="17.1" width="12" height="0.9" fill="#999"/><rect x="6.5" y="19.0" width="18.5" height="0.9" fill="#999"/><rect x="6.5" y="20.9" width="18.5" height="0.9" fill="#999"/><rect x="6.5" y="22.8" width="18.5" height="0.9" fill="#999"/><rect x="6.5" y="24.7" width="12" height="0.9" fill="#999"/><rect x="6.5" y="26.6" width="18.5" height="0.9" fill="#999"/><rect x="6.5" y="28.5" width="18.5" height="0.9" fill="#999"/><path d="M29 7.4H91" stroke="#5bbbe6" stroke-width="0.8"/><path d="M29 15.6H91" stroke="#5bbbe6" stroke-width="0.8"/><path d="M29 22.9H91" stroke="#5bbbe6" stroke-width="0.8"/><text x="29.4" y="22.6" font-family="Liberation Sans" font-size="19" fill="#111">G</text><text x="55.6" y="22.6" font-family="Liberation Sans" font-size="19" fill="none" stroke="#111" stroke-width="1">O</text><path d="M30.6 10V22M69 10V22" stroke="#e6479a" stroke-width="0.9"/><text x="74" y="22.6" font-family="Liberation Sans" font-size="19" fill="#111">T.</text><rect x="6.2" y="35.6" width="37.6" height="5.6" fill="none" stroke="#3a9bd0" stroke-width="0.7"/><circle cx="9" cy="38.4" r="1.6" fill="none" stroke="#223" stroke-width="0.7"/><circle cx="13" cy="38.4" r="1.6" fill="none" stroke="#223" stroke-width="0.7"/><circle cx="17" cy="38.4" r="1.6" fill="none" stroke="#223" stroke-width="0.7"/><circle cx="21" cy="38.4" r="1.6" fill="none" stroke="#223" stroke-width="0.7"/><circle cx="25" cy="38.4" r="1.6" fill="#223" stroke="#223" stroke-width="0.7"/><circle cx="29" cy="38.4" r="1.6" fill="#223" stroke="#223" stroke-width="0.7"/><circle cx="33" cy="38.4" r="1.6" fill="#223" stroke="#223" stroke-width="0.7"/><circle cx="37" cy="38.4" r="1.6" fill="#223" stroke="#223" stroke-width="0.7"/><circle cx="41" cy="38.4" r="1.6" fill="#223" stroke="#223" stroke-width="0.7"/><rect x="53" y="26.4" width="17.5" height="0.8" fill="#8a8a8a"/><rect x="53" y="28.1" width="17.5" height="0.8" fill="#8a8a8a"/><rect x="53" y="29.8" width="17.5" height="0.8" fill="#8a8a8a"/><rect x="53" y="31.5" width="17.5" height="0.8" fill="#8a8a8a"/><rect x="53" y="33.2" width="11" height="0.8" fill="#8a8a8a"/><rect x="53" y="34.9" width="17.5" height="0.8" fill="#8a8a8a"/><rect x="53" y="36.6" width="17.5" height="0.8" fill="#8a8a8a"/><rect x="53" y="38.3" width="17.5" height="0.8" fill="#8a8a8a"/><rect x="53" y="40.0" width="17.5" height="0.8" fill="#8a8a8a"/><rect x="53" y="41.7" width="11" height="0.8" fill="#8a8a8a"/><rect x="53" y="43.4" width="17.5" height="0.8" fill="#8a8a8a"/><rect x="73.5" y="26.4" width="17.5" height="0.8" fill="#8a8a8a"/><rect x="73.5" y="28.1" width="17.5" height="0.8" fill="#8a8a8a"/><rect x="73.5" y="29.8" width="17.5" height="0.8" fill="#8a8a8a"/><rect x="73.5" y="31.5" width="17.5" height="0.8" fill="#8a8a8a"/><rect x="73.5" y="33.2" width="11" height="0.8" fill="#8a8a8a"/><rect x="73.5" y="34.9" width="17.5" height="0.8" fill="#8a8a8a"/><rect x="73.5" y="36.6" width="17.5" height="0.8" fill="#8a8a8a"/><rect x="73.5" y="38.3" width="17.5" height="0.8" fill="#8a8a8a"/><rect x="73.5" y="40.0" width="17.5" height="0.8" fill="#8a8a8a"/><rect x="73.5" y="41.7" width="11" height="0.8" fill="#8a8a8a"/><rect x="73.5" y="43.4" width="17.5" height="0.8" fill="#8a8a8a"/></svg><div style="left:59px;top:592px;width:48.7px;height:52.6px;background:#fff;border:1.6px solid #d62626;box-sizing:border-box;"></div><svg style="left:59px;top:592px" width="48.7" height="52.6"><rect x="5.6" y="18.4" width="11.8" height="22" fill="#fbeec2"/><rect x="6.6" y="20.4" width="5.5" height="0.7" fill="#8c8a70"/><rect x="6.6" y="22.5" width="8" height="0.7" fill="#8c8a70"/><rect x="6.6" y="24.6" width="8" height="0.7" fill="#8c8a70"/><rect x="6.6" y="26.7" width="5.5" height="0.7" fill="#8c8a70"/><rect x="6.6" y="28.8" width="8" height="0.7" fill="#8c8a70"/><rect x="6.6" y="30.9" width="8" height="0.7" fill="#8c8a70"/><rect x="6.6" y="33.0" width="5.5" height="0.7" fill="#8c8a70"/><rect x="6.6" y="35.1" width="8" height="0.7" fill="#8c8a70"/><rect x="6.6" y="37.2" width="8" height="0.7" fill="#8c8a70"/><circle cx="8" cy="13.4" r="1.1" fill="none" stroke="#444" stroke-width="0.5"/><circle cx="12.6" cy="13.4" r="1.1" fill="none" stroke="#444" stroke-width="0.5"/><rect x="22" y="13.6" width="16" height="0.9" fill="#2b7a74"/><rect x="22" y="16.0" width="19.5" height="0.7" fill="#999"/><rect x="23.4" y="17.9" width="19.5" height="0.7" fill="#999"/><rect x="23.4" y="19.9" width="19.5" height="0.7" fill="#999"/><rect x="23.4" y="21.9" width="12" height="0.7" fill="#999"/><rect x="23.4" y="27.7" width="19.5" height="0.7" fill="#999"/><rect x="23.4" y="29.6" width="12" height="0.7" fill="#999"/><rect x="22" y="31.6" width="19.5" height="0.7" fill="#999"/><rect x="23.4" y="33.5" width="19.5" height="0.7" fill="#999"/><rect x="23.4" y="35.5" width="19.5" height="0.7" fill="#999"/><rect x="23.4" y="37.5" width="12" height="0.7" fill="#999"/><rect x="22" y="39.4" width="19.5" height="0.7" fill="#999"/><rect x="23.4" y="41.3" width="19.5" height="0.7" fill="#999"/><rect x="23.4" y="43.3" width="19.5" height="0.7" fill="#999"/><rect x="23.4" y="45.2" width="12" height="0.7" fill="#999"/><rect x="22" y="47.2" width="19.5" height="0.7" fill="#999"/><rect x="22.8" y="22" width="17" height="3" rx="0.6" fill="#2f86e6"/></svg><svg style="left:107.7px;top:592px" width="48.7" height="52.6"><defs><filter id="bl" x="-20%" y="-20%" width="140%" height="140%"><feGaussianBlur stdDeviation="0.7"/></filter><clipPath id="cp"><rect x="0" y="0" width="48.7" height="52.6"/></clipPath></defs><rect width="48.7" height="52.6" fill="#1c1c1c"/><g clip-path="url(#cp)" filter="url(#bl)"><path d="M2 0Q8 14 24 12L34 8L30 0Z" fill="#3c3c3c"/><path d="M6 0Q10 9 22 8" fill="none" stroke="#555" stroke-width="1.2"/><circle cx="28" cy="40" r="28" fill="#262220"/><circle cx="28" cy="40" r="25" fill="#7a3c22"/><ellipse cx="22.8" cy="36.6" rx="4.4" ry="2.7" fill="#d8d2c6" transform="rotate(115 22.8 36.6)"/><ellipse cx="25.4" cy="37.6" rx="2.6" ry="1.6" fill="#35733a" transform="rotate(121 25.4 37.6)"/><ellipse cx="31.0" cy="44.8" rx="2.4" ry="1.5" fill="#1f4d26" transform="rotate(36 31.0 44.8)"/><ellipse cx="6.2" cy="45.3" rx="3.9" ry="2.4" fill="#2e6a33" transform="rotate(152 6.2 45.3)"/><ellipse cx="47.2" cy="50.8" rx="3.8" ry="2.3" fill="#2e6a33" transform="rotate(166 47.2 50.8)"/><ellipse cx="40.8" cy="35.2" rx="3.7" ry="2.3" fill="#d8d2c6" transform="rotate(1 40.8 35.2)"/><ellipse cx="32.5" cy="33.0" rx="2.9" ry="1.8" fill="#35733a" transform="rotate(21 32.5 33.0)"/><ellipse cx="34.6" cy="28.0" rx="2.8" ry="1.7" fill="#1f4d26" transform="rotate(7 34.6 28.0)"/><ellipse cx="5.2" cy="43.8" rx="3.2" ry="2.0" fill="#1f4d26" transform="rotate(98 5.2 43.8)"/><ellipse cx="11.8" cy="49.4" rx="2.3" ry="1.4" fill="#e9e4dc" transform="rotate(101 11.8 49.4)"/><ellipse cx="21.3" cy="36.8" rx="2.7" ry="1.7" fill="#c96a38" transform="rotate(69 21.3 36.8)"/><ellipse cx="17.5" cy="27.9" rx="2.2" ry="1.4" fill="#e9e4dc" transform="rotate(30 17.5 27.9)"/><ellipse cx="8.2" cy="41.7" rx="2.2" ry="1.4" fill="#d8d2c6" transform="rotate(124 8.2 41.7)"/><ellipse cx="10.2" cy="36.6" rx="3.3" ry="2.0" fill="#2b6230" transform="rotate(33 10.2 36.6)"/><ellipse cx="21.3" cy="30.4" rx="3.1" ry="2.0" fill="#2b6230" transform="rotate(0 21.3 30.4)"/><ellipse cx="14.4" cy="51.0" rx="4.1" ry="2.6" fill="#1f4d26" transform="rotate(5 14.4 51.0)"/><ellipse cx="11.7" cy="30.8" rx="4.3" ry="2.6" fill="#c96a38" transform="rotate(147 11.7 30.8)"/><ellipse cx="6.6" cy="51.6" rx="2.7" ry="1.7" fill="#1f4d26" transform="rotate(2 6.6 51.6)"/><ellipse cx="37.5" cy="28.5" rx="2.9" ry="1.8" fill="#3d7f3b" transform="rotate(19 37.5 28.5)"/><ellipse cx="6.1" cy="37.4" rx="2.8" ry="1.7" fill="#2e6a33" transform="rotate(94 6.1 37.4)"/><ellipse cx="19.1" cy="32.9" rx="4.5" ry="2.8" fill="#d8d2c6" transform="rotate(147 19.1 32.9)"/><ellipse cx="8.2" cy="30.5" rx="3.7" ry="2.3" fill="#1f4d26" transform="rotate(58 8.2 30.5)"/><ellipse cx="39.6" cy="25.7" rx="2.7" ry="1.6" fill="#c96a38" transform="rotate(141 39.6 25.7)"/><ellipse cx="11.0" cy="50.3" rx="4.3" ry="2.7" fill="#2e6a33" transform="rotate(20 11.0 50.3)"/><ellipse cx="21.4" cy="20.6" rx="2.3" ry="1.4" fill="#1f4d26" transform="rotate(61 21.4 20.6)"/><ellipse cx="36.0" cy="30.7" rx="3.2" ry="2.0" fill="#2e6a33" transform="rotate(125 36.0 30.7)"/><ellipse cx="15.5" cy="23.1" rx="3.9" ry="2.4" fill="#3d7f3b" transform="rotate(32 15.5 23.1)"/><ellipse cx="12.5" cy="36.6" rx="4.2" ry="2.6" fill="#2e6a33" transform="rotate(18 12.5 36.6)"/><ellipse cx="14.9" cy="49.1" rx="2.7" ry="1.7" fill="#2e6a33" transform="rotate(17 14.9 49.1)"/><ellipse cx="14.4" cy="32.6" rx="2.3" ry="1.5" fill="#24562a" transform="rotate(72 14.4 32.6)"/><ellipse cx="19.0" cy="37.0" rx="2.5" ry="1.6" fill="#b5542a" transform="rotate(35 19.0 37.0)"/><ellipse cx="43.0" cy="51.3" rx="3.8" ry="2.3" fill="#35733a" transform="rotate(149 43.0 51.3)"/><ellipse cx="45.6" cy="37.6" rx="4.4" ry="2.7" fill="#d8d2c6" transform="rotate(91 45.6 37.6)"/><ellipse cx="34.2" cy="50.7" rx="2.3" ry="1.4" fill="#c96a38" transform="rotate(19 34.2 50.7)"/><ellipse cx="24.2" cy="42.6" rx="3.0" ry="1.8" fill="#3d7f3b" transform="rotate(19 24.2 42.6)"/><ellipse cx="22.8" cy="29.9" rx="2.3" ry="1.4" fill="#24562a" transform="rotate(87 22.8 29.9)"/><ellipse cx="18.2" cy="41.0" rx="4.4" ry="2.7" fill="#e9e4dc" transform="rotate(7 18.2 41.0)"/><ellipse cx="41.7" cy="37.0" rx="3.7" ry="2.3" fill="#e9e4dc" transform="rotate(97 41.7 37.0)"/><ellipse cx="28.8" cy="38.3" rx="2.4" ry="1.5" fill="#c96a38" transform="rotate(29 28.8 38.3)"/><ellipse cx="47.7" cy="47.8" rx="3.9" ry="2.4" fill="#e9e4dc" transform="rotate(177 47.7 47.8)"/><ellipse cx="28.7" cy="32.4" rx="4.2" ry="2.6" fill="#3d7f3b" transform="rotate(132 28.7 32.4)"/><ellipse cx="36.5" cy="18.0" rx="3.6" ry="2.3" fill="#d8d2c6" transform="rotate(5 36.5 18.0)"/></g></svg><div style="left:59px;top:519.1px;width:43px;height:10.3px;background:rgba(70,70,70,.88);"></div><div class="t" style="left:60.00px;top:518.55px;line-height:12px;font-size:8.8px;color:#f2f2f2;letter-spacing:-0.594px;">Demo 1 Left</div><div style="left:129px;top:519.1px;width:27.4px;height:10.3px;background:rgba(70,70,70,.88);"></div><div class="t" style="left:130.00px;top:518.55px;line-height:12px;font-size:8.8px;color:#f2f2f2;letter-spacing:-0.902px;">Demo 1</div><div style="left:138.3px;top:529.4px;width:18.1px;height:10.2px;background:rgba(70,70,70,.88);"></div><div class="t" style="left:138.80px;top:528.80px;line-height:12px;font-size:8.8px;color:#f2f2f2;letter-spacing:-0.629px;">Right</div><div style="left:60.4px;top:593px;width:41.6px;height:10.3px;background:rgba(70,70,70,.88);"></div><div class="t" style="left:60.00px;top:592.45px;line-height:12px;font-size:8.8px;color:#f2f2f2;letter-spacing:-0.594px;">Demo 2 Left</div><div style="left:129px;top:593px;width:27.4px;height:10.3px;background:rgba(70,70,70,.88);"></div><div class="t" style="left:130.00px;top:592.45px;line-height:12px;font-size:8.8px;color:#f2f2f2;letter-spacing:-0.902px;">Demo 2</div><div style="left:138.3px;top:603.3px;width:18.1px;height:10.2px;background:rgba(70,70,70,.88);"></div><div class="t" style="left:138.80px;top:602.70px;line-height:12px;font-size:8.8px;color:#f2f2f2;letter-spacing:-0.629px;">Right</div><div class="t" style="left:76.80px;top:498.10px;line-height:14px;font-size:10px;color:#222;letter-spacing:0.638px;">22</div><div class="t" style="left:125.40px;top:498.10px;line-height:14px;font-size:10px;color:#222;letter-spacing:0.638px;">23</div><div class="t" style="left:76.80px;top:571.50px;line-height:14px;font-size:10px;color:#222;letter-spacing:0.638px;">24</div><div class="t" style="left:125.40px;top:571.50px;line-height:14px;font-size:10px;color:#222;letter-spacing:0.638px;">25</div><div class="t" style="left:76.80px;top:644.70px;line-height:14px;font-size:10px;color:#222;letter-spacing:0.638px;">26</div><div class="t" style="left:125.40px;top:644.70px;line-height:14px;font-size:10px;color:#222;letter-spacing:0.638px;">27</div></div>
</body></html>
